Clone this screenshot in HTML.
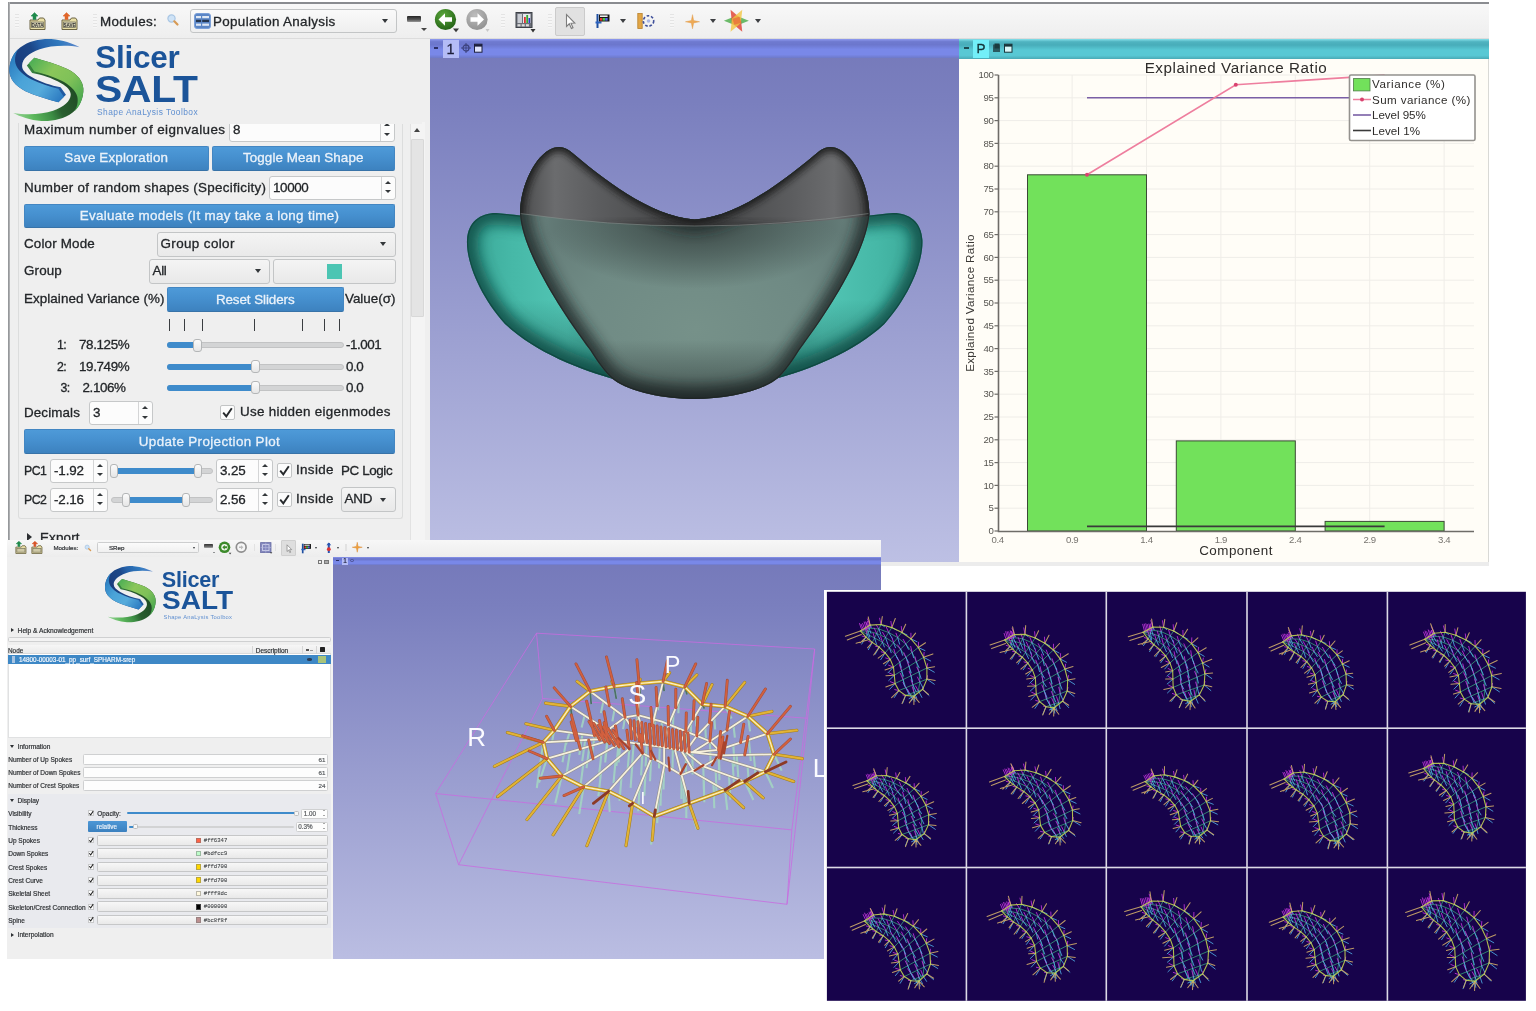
<!DOCTYPE html>
<html><head><meta charset="utf-8"><title>SlicerSALT</title>
<style>

*{box-sizing:border-box;margin:0;padding:0}
html,body{width:1536px;height:1011px;overflow:hidden;background:#fff}
body{position:relative;font-family:"Liberation Sans",sans-serif;font-size:14px;color:#232629}
.a{position:absolute}
#top{position:absolute;left:7.5px;top:2.4px;width:1481.3px;height:563.3px;overflow:hidden}
#top>.in{position:absolute;left:-7.5px;top:-2.4px;width:1536px;height:640px;background:#efefef;filter:blur(0.55px)}
#top>.in>*{position:absolute}
.t{position:absolute;white-space:nowrap;line-height:16px;height:16px;font-size:13.4px;letter-spacing:0.38px;-webkit-text-stroke:0.3px currentColor}
.btn{position:absolute;background:linear-gradient(#4e9ad8,#4690cf 45%,#3d82bf);color:#eaf2fa;text-align:center;border:1px solid #4386c2;border-bottom-color:#3873a8;border-radius:2px;white-space:nowrap;font-size:13.4px;letter-spacing:0.38px;-webkit-text-stroke:0.3px currentColor}
.inp{position:absolute;background:#fcfcfc;border:1px solid #c6c8c9;border-radius:3px}
.cmb{position:absolute;background:linear-gradient(#f4f4f4,#e9e9e9);border:1px solid #c3c5c6;border-radius:3px}
.arr{position:absolute;width:0;height:0;border-left:3.5px solid transparent;border-right:3.5px solid transparent;border-top:4.4px solid #33373a;margin-left:0.5px;margin-top:0.3px}
.up{position:absolute;width:0;height:0;border-left:3.5px solid transparent;border-right:3.5px solid transparent;border-bottom:4.4px solid #33373a;margin-left:0.5px}
.trk{position:absolute;height:6px;border-radius:3px;background:#d3d4d5;border:1px solid #c2c3c4}
.fil{position:absolute;height:6px;border-radius:3px;background:#3e8bcb}
.hnd{position:absolute;width:9px;height:17px;border-radius:3px;background:linear-gradient(#fbfbfb,#e6e6e6);border:1px solid #b4b6b7}
.chk{position:absolute;width:15px;height:15px;background:#fcfcfc;border:1px solid #c2c4c5;border-radius:2px}
#bl{position:absolute;left:7.1px;top:539.6px;width:873.7px;height:419.7px;overflow:hidden}
#bl>.in{position:absolute;left:-7.1px;top:-539.6px;width:1000px;height:1011px;background:#efefef;filter:blur(0.6px)}
#bl>.in>*{position:absolute}
#grid{position:absolute;left:824px;top:590px;width:703px;height:411px;background:#fff;overflow:hidden}
.s{position:absolute;white-space:nowrap;font-size:6.6px;line-height:8px;height:8px;color:#2c2f32;-webkit-text-stroke:0.18px currentColor}
.sf{position:absolute;background:#fdfdfd;border:0.6px solid #cfd0d1;border-radius:1.5px}
.sb{position:absolute;background:linear-gradient(#f7f7f7,#e9e9e9);border:0.6px solid #c6c7c8;border-radius:1.5px}
.sc{position:absolute;width:6px;height:6px;background:#fcfcfc;border:0.5px solid #c9cacb}
.hx{position:absolute;font-family:"Liberation Mono",monospace;font-size:5.6px;line-height:8px;color:#45484b;white-space:nowrap;-webkit-text-stroke:0.1px currentColor}

</style></head>
<body>
<div id="top"><div class="in">
<div class="a" style="left:0;top:0;width:1500px;height:4px;background:#8a8c90"></div>
<div class="a" style="left:0;top:4px;width:1500px;height:34.5px;background:linear-gradient(#f8f8f8,#eeeeee);border-bottom:1px solid #dcdcdc"></div>
<div class="a" style="left:6px;top:0;width:4px;height:600px;background:linear-gradient(90deg,#8a8c8f 0,#8f9194 55%,#b9babc 100%)"></div>
<div class="a" style="left:14.5px;top:14px;width:4px;height:14px;background:repeating-linear-gradient(#e4e4e4 0 1.5px,#f6f6f6 1.5px 3px)"></div>
<div class="a" style="left:93px;top:14px;width:4px;height:14px;background:repeating-linear-gradient(#e4e4e4 0 1.5px,#f6f6f6 1.5px 3px)"></div>
<div class="a" style="left:501px;top:14px;width:4px;height:14px;background:repeating-linear-gradient(#e4e4e4 0 1.5px,#f6f6f6 1.5px 3px)"></div>
<div class="a" style="left:547.5px;top:14px;width:4px;height:14px;background:repeating-linear-gradient(#e4e4e4 0 1.5px,#f6f6f6 1.5px 3px)"></div>
<div class="a" style="left:670px;top:14px;width:4px;height:14px;background:repeating-linear-gradient(#e4e4e4 0 1.5px,#f6f6f6 1.5px 3px)"></div>
<svg class="a" style="left:29px;top:11px" width="18" height="20" viewBox="0 0 18 20">
<path d="M1 9 h8 l1.5-2 h4 l1.5 2 v9.5 h-15z" fill="#e9dfa6" stroke="#6d6544" stroke-width="1"/>
<rect x="2.5" y="11" width="12" height="5.5" fill="#d8d3b4" stroke="#6a6856" stroke-width="0.7"/>
<path d="M5.5 1.6 L9 5 L7 5.2 L7 8.4 L4 8.4 L4 5.2 L2 5z" fill="#1f8a4c" stroke="#1f8a4c" stroke-width="0.5"/>
<text x="8.5" y="15.6" font-family="Liberation Sans,sans-serif" font-size="4.6" font-weight="bold" fill="#333" text-anchor="middle">DATA</text>
</svg>
<svg class="a" style="left:61px;top:11px" width="18" height="20" viewBox="0 0 18 20">
<path d="M1 9 h8 l1.5-2 h4 l1.5 2 v9.5 h-15z" fill="#e9dfa6" stroke="#6d6544" stroke-width="1"/>
<rect x="2.5" y="11" width="12" height="5.5" fill="#d8d3b4" stroke="#6a6856" stroke-width="0.7"/>
<path d="M5.5 1.6 L9 5 L7 5.2 L7 8.4 L4 8.4 L4 5.2 L2 5z" fill="#e0662a" stroke="#e0662a" stroke-width="0.5"/>
<text x="8.5" y="15.6" font-family="Liberation Sans,sans-serif" font-size="4.6" font-weight="bold" fill="#333" text-anchor="middle">SAVE</text>
</svg>
<div class="t" style="left:100px;top:14.400000000000002px;letter-spacing:0.337px;">Modules:</div>
<svg class="a" style="left:166px;top:13px" width="14" height="14" viewBox="0 0 14 14"><circle cx="5.5" cy="5.5" r="3.6" fill="#cfe3f6" stroke="#a9c6e4" stroke-width="1.2"/><path d="M8.3 8.3 L11.5 11.5" stroke="#d79a55" stroke-width="2.2" stroke-linecap="round"/></svg>
<div class="cmb" style="left:190px;top:8.5px;width:207px;height:24.5px;background:linear-gradient(#fafafa,#efefef)"></div>
<svg class="a" style="left:194px;top:13px" width="17" height="16" viewBox="0 0 17 16"><rect x="0.5" y="0.5" width="16" height="15" rx="2.5" fill="#5b86c6" stroke="#7ba0d8"/><rect x="2" y="3" width="13" height="2.2" fill="#dfe8f4"/><rect x="2" y="6.8" width="13" height="2.2" fill="#25364f"/><rect x="2" y="10.6" width="13" height="2.2" fill="#dfe8f4"/><rect x="7" y="2.5" width="1.2" height="11" fill="#5b86c6"/></svg>
<div class="t" style="left:213px;top:14.2px;letter-spacing:0.342px;">Population Analysis</div>
<div class="arr" style="left:381.5px;top:18.5px"></div>
<div class="a" style="left:407px;top:16px;width:14px;height:5.5px;border-radius:1px;background:linear-gradient(#222,#555 60%,#999)"></div>
<div class="arr" style="left:420.5px;top:28px;border-left-width:3px;border-right-width:3px;border-top-width:3.8px;border-top-color:#444"></div>
<svg class="a" style="left:433px;top:8px" width="26" height="26" viewBox="0 0 26 26"><defs><radialGradient id="gg" cx="0.4" cy="0.3" r="0.8"><stop offset="0" stop-color="#5aa63a"/><stop offset="1" stop-color="#1e5c12"/></radialGradient></defs><circle cx="12.5" cy="11.5" r="10.6" fill="url(#gg)"/><path d="M5.5 11.5 L12 5.3 L12 9.2 L19 9.2 L19 13.8 L12 13.8 L12 17.7z" fill="#fff"/><path d="M20 20.5 l6 0 l-3 3.8z" fill="#3a3a3a"/></svg>
<svg class="a" style="left:465px;top:8px" width="26" height="26" viewBox="0 0 26 26"><defs><radialGradient id="gr" cx="0.4" cy="0.3" r="0.8"><stop offset="0" stop-color="#bdbdbd"/><stop offset="1" stop-color="#8d8d8d"/></radialGradient></defs><circle cx="12" cy="11.5" r="10.6" fill="url(#gr)"/><path d="M19 11.5 L12.5 5.3 L12.5 9.2 L5.5 9.2 L5.5 13.8 L12.5 13.8 L12.5 17.7z" fill="#fff"/><path d="M20.5 21 l4 0 l-2 3z" fill="#c8c8c8"/></svg>
<svg class="a" style="left:515px;top:11px" width="22" height="22" viewBox="0 0 22 22"><rect x="1" y="1.5" width="16" height="15" fill="#6b6f78" stroke="#3d4047" stroke-width="1"/><rect x="2.5" y="3" width="4.5" height="9" fill="#c9ccd3"/><rect x="8" y="3" width="7.5" height="9" fill="#e8e8ee"/><rect x="9" y="6" width="1.8" height="6" fill="#d33"/><rect x="11.3" y="4" width="1.8" height="8" fill="#3a3"/><rect x="13.5" y="7" width="1.6" height="5" fill="#33c"/><rect x="2.5" y="13.2" width="3" height="2.2" fill="#ddd"/><rect x="6.7" y="13.2" width="3" height="2.2" fill="#ddd"/><rect x="10.9" y="13.2" width="3" height="2.2" fill="#ddd"/><path d="M15.5 18 l5 0 l-2.5 3.4z" fill="#333"/></svg>
<div class="a" style="left:555px;top:6.5px;width:30px;height:29px;background:#e1e1e1;border:1px solid #cbcbcb;border-radius:2px"></div>
<svg class="a" style="left:563px;top:13px" width="14" height="18" viewBox="0 0 14 18"><path d="M3.5 1.5 L3.5 13.5 L6.3 10.8 L8.4 15.5 L10 14.8 L8 10.2 L11.8 10z" fill="#fdfdfd" stroke="#7d7d7d" stroke-width="1.1"/></svg>
<svg class="a" style="left:595px;top:13px" width="16" height="16" viewBox="0 0 16 16"><path d="M2.5 1 L2.5 15" stroke="#1e4fa0" stroke-width="2"/><path d="M0.5 9.5 L6.5 9.5" stroke="#2a62c0" stroke-width="2"/><rect x="4" y="1.5" width="10.5" height="7" fill="#151515"/><rect x="5" y="5" width="2.4" height="2.6" fill="#e33"/><rect x="7.6" y="5" width="2.4" height="2.6" fill="#4c4"/><rect x="10.2" y="5" width="2.4" height="2.6" fill="#56e"/><rect x="5" y="2.4" width="7.6" height="1.6" fill="#eee"/></svg>
<div class="arr" style="left:619.6px;top:19px;border-left-width:3.4px;border-right-width:3.4px;border-top-width:4px;border-top-color:#3d3f42"></div>
<svg class="a" style="left:637px;top:12px" width="18" height="18" viewBox="0 0 18 18"><rect x="0.8" y="1.5" width="4.4" height="15" fill="#e2a646" stroke="#b9822c" stroke-width="0.8"/><circle cx="11.5" cy="9" r="5.2" fill="none" stroke="#3f4f9a" stroke-width="1.6" stroke-dasharray="2.6 1.8"/><circle cx="11.5" cy="9" r="1.8" fill="#aab6e6"/></svg>
<svg class="a" style="left:684.5px;top:13.5px" width="15" height="15.5" viewBox="0 0 19 19"><path d="M9.5 0.5 L11 8 L18.5 9.5 L11 11 L9.5 18.5 L8 11 L0.5 9.5 L8 8z" fill="#eeaa55" stroke="#e09a48" stroke-width="0.5"/></svg>
<div class="arr" style="left:709.6px;top:19px;border-left-width:3.4px;border-right-width:3.4px;border-top-width:4px;border-top-color:#3d3f42"></div>
<svg class="a" style="left:723px;top:8px" width="27" height="26" viewBox="0 0 27 26"><g transform="translate(13.4 12.8)"><path d="M-12.5 0 L0 -5 L12.5 0 L0 5z" fill="#5cb45a" opacity="0.9"/><path d="M-12.5 0 L0 -5 L12.5 0 L0 5z" fill="#e2493b" opacity="0.85" transform="rotate(62)"/><path d="M-12.5 0 L0 -5 L12.5 0 L0 5z" fill="#f2c744" opacity="0.8" transform="rotate(118)"/><path d="M-4 -2 L3 -4 L5 2 L-2 4z" fill="#e8683c" opacity="0.7"/></g></svg>
<div class="arr" style="left:754.1px;top:19px;border-left-width:3.4px;border-right-width:3.4px;border-top-width:4px;border-top-color:#3d3f42"></div>
<svg class="a" style="left:5px;top:36px" width="90" height="90" viewBox="0 0 1011 1011">
<defs>
<linearGradient id="bia" gradientUnits="userSpaceOnUse" x1="838" y1="100" x2="150" y2="450"><stop offset="0" stop-color="#6088cc"/><stop offset="0.25" stop-color="#3079be"/><stop offset="0.5" stop-color="#2460a8"/><stop offset="0.65" stop-color="#1c4788"/><stop offset="1" stop-color="#1a3c7c"/></linearGradient>
<linearGradient id="bfa" gradientUnits="userSpaceOnUse" x1="60" y1="250" x2="640" y2="720"><stop offset="0" stop-color="#2a7cc0"/><stop offset="0.35" stop-color="#4aa3d8"/><stop offset="0.65" stop-color="#56abdb"/><stop offset="1" stop-color="#2a78c0"/></linearGradient>
<linearGradient id="gia" gradientUnits="userSpaceOnUse" x1="838" y1="100" x2="150" y2="450"><stop offset="0" stop-color="#9ad59a"/><stop offset="0.25" stop-color="#5cb85c"/><stop offset="0.5" stop-color="#3c8d44"/><stop offset="0.65" stop-color="#295e2f"/><stop offset="1" stop-color="#1f4a24"/></linearGradient>
<linearGradient id="gfa" gradientUnits="userSpaceOnUse" x1="60" y1="250" x2="640" y2="720"><stop offset="0" stop-color="#48a750"/><stop offset="0.35" stop-color="#7fc158"/><stop offset="0.65" stop-color="#8ac65a"/><stop offset="1" stop-color="#4cae55"/></linearGradient>
</defs>
<path d="M838 125 C760 85 650 45 520 35 C400 30 270 55 170 130 C90 190 45 300 50 400 C55 480 110 560 230 620 C340 670 480 710 600 745 L685 660 L625 575 C520 555 400 520 300 460 C230 420 190 380 192 330 C196 258 268 192 390 150 C510 108 690 100 838 125z" fill="url(#bia)"/><path d="M150 146 C85 200 45 300 50 400 C55 480 110 560 230 620 C340 670 480 710 600 745 L662 683 L600 592 C500 570 390 535 300 490 C210 445 135 380 118 310 C105 250 120 190 150 146z" fill="url(#bfa)"/>
<g transform="rotate(180 465 495)"><path d="M838 125 C760 85 650 45 520 35 C400 30 270 55 170 130 C90 190 45 300 50 400 C55 480 110 560 230 620 C340 670 480 710 600 745 L685 660 L625 575 C520 555 400 520 300 460 C230 420 190 380 192 330 C196 258 268 192 390 150 C510 108 690 100 838 125z" fill="url(#gia)"/><path d="M150 146 C85 200 45 300 50 400 C55 480 110 560 230 620 C340 670 480 710 600 745 L662 683 L600 592 C500 570 390 535 300 490 C210 445 135 380 118 310 C105 250 120 190 150 146z" fill="url(#gfa)"/></g>
</svg>
<div class="a" style="left:95.2px;top:39px;font-size:31.5px;line-height:36px;font-weight:bold;color:#1b5499;letter-spacing:-0.25px;white-space:nowrap">Slicer</div>
<div class="a" style="left:94.6px;top:68.6px;font-size:36.5px;line-height:42px;font-weight:bold;color:#1b5499;letter-spacing:-0.2px;white-space:nowrap;transform-origin:0 0;transform:scaleX(1.118)">SALT</div>
<div class="a" style="left:97px;top:106.5px;font-size:8.4px;line-height:11px;color:#5f8fd0;letter-spacing:0.47px;white-space:nowrap">Shape AnaLysis Toolbox</div>
<div class="a" style="left:17.5px;top:123px;width:385px;height:396px;border:1px solid #dcdddd;border-top:none;border-radius:0 0 3px 3px;background:#efefef"></div>
<div class="a" style="left:409.5px;top:122px;width:15px;height:420px;background:#f4f4f4;border-left:1px solid #e2e2e2"></div>
<div class="a" style="left:410.5px;top:139px;width:13px;height:178px;background:#e4e4e4;border:1px solid #d8d8d8;border-radius:1px"></div>
<div class="up" style="left:413px;top:127.5px;border-bottom-color:#444"></div>
<div class="t" style="left:24px;top:122.3px;letter-spacing:0.415px;">Maximum number of eignvalues</div>
<div class="inp" style="left:229px;top:118px;width:166px;height:23.5px"></div>
<div class="t" style="left:233px;top:122.3px;letter-spacing:-0.253px;">8</div>
<div class="a" style="left:380px;top:119px;width:1px;height:22px;background:#d4d5d6"></div>
<div class="up" style="left:383.5px;top:122.5px;border-left-width:3px;border-right-width:3px;border-bottom-width:3.8px;margin-left:0.5px"></div>
<div class="arr" style="left:383.5px;top:132.5px;border-left-width:3px;border-right-width:3px;border-top-width:3.8px;margin-left:0.5px"></div>
<div class="a" style="left:200px;top:100px;width:222px;height:23.5px;background:#efefef"></div>
<div class="btn" style="left:24px;top:145.8px;width:184.5px;height:24.9px;line-height:22.9px;letter-spacing:0.164px;">Save Exploration</div>
<div class="btn" style="left:211.5px;top:145.8px;width:183.5px;height:24.9px;line-height:22.9px;letter-spacing:0.073px;">Toggle Mean Shape</div>
<div class="t" style="left:24px;top:180.3px;letter-spacing:0.293px;">Number of random shapes (Specificity)</div>
<div class="inp" style="left:269px;top:175.5px;width:126.5px;height:24px"></div><div class="t" style="left:273px;top:179.8px;letter-spacing:-0.363px;">10000</div><div class="a" style="left:380.5px;top:176.5px;width:1px;height:22px;background:#d4d5d6"></div><div class="up" style="left:384.0px;top:180.5px;border-left-width:3px;border-right-width:3px;border-bottom-width:3.8px;margin-left:0.5px"></div><div class="arr" style="left:384.0px;top:190.0px;border-left-width:3px;border-right-width:3px;border-top-width:3.8px;margin-left:0.5px"></div>
<div class="btn" style="left:24px;top:203.6px;width:371px;height:24.9px;line-height:22.9px;letter-spacing:0.321px;">Evaluate models (It may take a long time)</div>
<div class="t" style="left:24px;top:236.3px;letter-spacing:0.165px;">Color Mode</div>
<div class="cmb" style="left:157px;top:232px;width:238.5px;height:24.5px"></div>
<div class="t" style="left:160.5px;top:236.3px;letter-spacing:0.393px;">Group color</div>
<div class="arr" style="left:379px;top:242px"></div>
<div class="t" style="left:24px;top:263.3px;letter-spacing:0.145px;">Group</div>
<div class="cmb" style="left:149px;top:259px;width:120.5px;height:24.5px"></div>
<div class="t" style="left:152.5px;top:263.3px;letter-spacing:-0.295px;">All</div>
<div class="arr" style="left:254.5px;top:269px"></div>
<div class="cmb" style="left:273px;top:259px;width:122.5px;height:24.5px"></div>
<div class="a" style="left:327px;top:264px;width:15px;height:14.5px;background:#4cc5b3"></div>
<div class="t" style="left:24px;top:290.8px;letter-spacing:0.07px;">Explained Variance (%)</div>
<div class="btn" style="left:167px;top:286.5px;width:176.5px;height:25px;line-height:23px;letter-spacing:-0.07px;">Reset Sliders</div>
<div class="t" style="left:345px;top:290.8px;letter-spacing:-0.005px;">Value(σ)</div>
<div class="a" style="left:169.0px;top:319px;width:1.3px;height:12px;background:#3a3d40"></div>
<div class="a" style="left:183.9px;top:319px;width:1.3px;height:12px;background:#3a3d40"></div>
<div class="a" style="left:202.20000000000002px;top:319px;width:1.3px;height:12px;background:#3a3d40"></div>
<div class="a" style="left:253.8px;top:319px;width:1.3px;height:12px;background:#3a3d40"></div>
<div class="a" style="left:302.2px;top:319px;width:1.3px;height:12px;background:#3a3d40"></div>
<div class="a" style="left:324.0px;top:319px;width:1.3px;height:12px;background:#3a3d40"></div>
<div class="a" style="left:339.09999999999997px;top:319px;width:1.3px;height:12px;background:#3a3d40"></div>
<div class="t" style="left:57px;top:337.3px;letter-spacing:-0.5px;font-size:12.3px;">1:</div>
<div class="t" style="left:79px;top:337.3px;letter-spacing:-0.362px;">78.125%</div>
<div class="trk" style="left:167px;top:342px;width:176.5px"></div><div class="fil" style="left:167px;top:342px;width:30px"></div>
<div class="hnd" style="left:192.5px;top:338.5px;height:13px"></div>
<div class="t" style="left:346px;top:337.3px;letter-spacing:-0.434px;">-1.001</div>
<div class="t" style="left:57px;top:358.8px;letter-spacing:-0.5px;font-size:12.3px;">2:</div>
<div class="t" style="left:79px;top:358.8px;letter-spacing:-0.362px;">19.749%</div>
<div class="trk" style="left:167px;top:363.5px;width:176.5px"></div><div class="fil" style="left:167px;top:363.5px;width:88px"></div>
<div class="hnd" style="left:250.5px;top:360.0px;height:13px"></div>
<div class="t" style="left:346px;top:358.8px;letter-spacing:-0.412px;">0.0</div>
<div class="t" style="left:60.5px;top:379.8px;letter-spacing:-0.5px;font-size:12.3px;">3:</div>
<div class="t" style="left:82.5px;top:379.8px;letter-spacing:-0.384px;">2.106%</div>
<div class="trk" style="left:167px;top:384.5px;width:176.5px"></div><div class="fil" style="left:167px;top:384.5px;width:88px"></div>
<div class="hnd" style="left:250.5px;top:381.0px;height:13px"></div>
<div class="t" style="left:346px;top:379.8px;letter-spacing:-0.412px;">0.0</div>
<div class="t" style="left:24px;top:404.8px;letter-spacing:0.12px;">Decimals</div>
<div class="inp" style="left:89px;top:401px;width:63.5px;height:24px"></div><div class="t" style="left:93px;top:405.3px;letter-spacing:-0.253px;">3</div><div class="a" style="left:137.5px;top:402px;width:1px;height:22px;background:#d4d5d6"></div><div class="up" style="left:141.0px;top:406.0px;border-left-width:3px;border-right-width:3px;border-bottom-width:3.8px;margin-left:0.5px"></div><div class="arr" style="left:141.0px;top:415.5px;border-left-width:3px;border-right-width:3px;border-top-width:3.8px;margin-left:0.5px"></div>
<div class="chk" style="left:220px;top:404.5px"></div><svg class="a" style="left:220px;top:404.5px" width="15" height="15" viewBox="0 0 15 15"><path d="M3.2 7.6 L6.3 11.4 L11.8 3.2" fill="none" stroke="#26292c" stroke-width="1.9"/></svg>
<div class="t" style="left:240px;top:404.3px;letter-spacing:0.299px;">Use hidden eigenmodes</div>
<div class="btn" style="left:24px;top:428.5px;width:371px;height:25px;line-height:23px;letter-spacing:0.369px;">Update Projection Plot</div>
<div class="t" style="left:24px;top:462.8px;letter-spacing:-0.5px;font-size:12.3px;">PC1</div>
<div class="inp" style="left:50px;top:458.5px;width:57.5px;height:24px"></div><div class="t" style="left:54px;top:462.8px;letter-spacing:-0.133px;">-1.92</div><div class="a" style="left:92.5px;top:459.5px;width:1px;height:22px;background:#d4d5d6"></div><div class="up" style="left:96.0px;top:463.5px;border-left-width:3px;border-right-width:3px;border-bottom-width:3.8px;margin-left:0.5px"></div><div class="arr" style="left:96.0px;top:473.0px;border-left-width:3px;border-right-width:3px;border-top-width:3.8px;margin-left:0.5px"></div>
<div class="trk" style="left:111px;top:467.5px;width:102px"></div><div class="fil" style="left:114px;top:467.5px;width:83.5px"></div>
<div class="hnd" style="left:110px;top:463.5px;height:14px;width:8px"></div>
<div class="hnd" style="left:193.5px;top:463.5px;height:14px;width:8px"></div>
<div class="inp" style="left:216px;top:458.5px;width:57px;height:24px"></div><div class="t" style="left:220px;top:462.8px;letter-spacing:-0.087px;">3.25</div><div class="a" style="left:258px;top:459.5px;width:1px;height:22px;background:#d4d5d6"></div><div class="up" style="left:261.5px;top:463.5px;border-left-width:3px;border-right-width:3px;border-bottom-width:3.8px;margin-left:0.5px"></div><div class="arr" style="left:261.5px;top:473.0px;border-left-width:3px;border-right-width:3px;border-top-width:3.8px;margin-left:0.5px"></div>
<div class="chk" style="left:276.5px;top:462.5px"></div><svg class="a" style="left:276.5px;top:462.5px" width="15" height="15" viewBox="0 0 15 15"><path d="M3.2 7.6 L6.3 11.4 L11.8 3.2" fill="none" stroke="#26292c" stroke-width="1.9"/></svg>
<div class="t" style="left:296px;top:462.3px;letter-spacing:0.353px;">Inside</div>
<div class="t" style="left:24px;top:491.8px;letter-spacing:-0.5px;font-size:12.3px;">PC2</div>
<div class="inp" style="left:50px;top:487.5px;width:57.5px;height:24px"></div><div class="t" style="left:54px;top:491.8px;letter-spacing:-0.133px;">-2.16</div><div class="a" style="left:92.5px;top:488.5px;width:1px;height:22px;background:#d4d5d6"></div><div class="up" style="left:96.0px;top:492.5px;border-left-width:3px;border-right-width:3px;border-bottom-width:3.8px;margin-left:0.5px"></div><div class="arr" style="left:96.0px;top:502.0px;border-left-width:3px;border-right-width:3px;border-top-width:3.8px;margin-left:0.5px"></div>
<div class="trk" style="left:111px;top:496.5px;width:102px"></div><div class="fil" style="left:126px;top:496.5px;width:60px"></div>
<div class="hnd" style="left:122px;top:492.5px;height:14px;width:8px"></div>
<div class="hnd" style="left:182px;top:492.5px;height:14px;width:8px"></div>
<div class="inp" style="left:216px;top:487.5px;width:57px;height:24px"></div><div class="t" style="left:220px;top:491.8px;letter-spacing:-0.087px;">2.56</div><div class="a" style="left:258px;top:488.5px;width:1px;height:22px;background:#d4d5d6"></div><div class="up" style="left:261.5px;top:492.5px;border-left-width:3px;border-right-width:3px;border-bottom-width:3.8px;margin-left:0.5px"></div><div class="arr" style="left:261.5px;top:502.0px;border-left-width:3px;border-right-width:3px;border-top-width:3.8px;margin-left:0.5px"></div>
<div class="chk" style="left:276.5px;top:491.5px"></div><svg class="a" style="left:276.5px;top:491.5px" width="15" height="15" viewBox="0 0 15 15"><path d="M3.2 7.6 L6.3 11.4 L11.8 3.2" fill="none" stroke="#26292c" stroke-width="1.9"/></svg>
<div class="t" style="left:296px;top:491.3px;letter-spacing:0.353px;">Inside</div>
<div class="t" style="left:341px;top:462.8px;letter-spacing:-0.392px;">PC Logic</div>
<div class="cmb" style="left:341px;top:487px;width:54.5px;height:24.5px"></div>
<div class="t" style="left:344.5px;top:491.3px;letter-spacing:-0.141px;">AND</div>
<div class="arr" style="left:379.5px;top:497.5px"></div>
<div class="a" style="left:26.5px;top:532.5px;width:0;height:0;border-top:4px solid transparent;border-bottom:4px solid transparent;border-left:5.5px solid #2b2e31"></div>
<div class="t" style="left:40px;top:529.8px;letter-spacing:0.159px;">Export</div>
<div class="a" style="left:430px;top:38.5px;width:529.4px;height:523.5px;background:linear-gradient(#7579ba 0%,#7a7fbe 12%,#bdc0e4 100%)"></div>
<div class="a" style="left:430px;top:38.5px;width:529.4px;height:19px;background:linear-gradient(#8f9bf0 0,#6f7ad0 14%,#6c77cd 30%,#7988e8 55%,#7988e8 82%,#6e79c8 100%)"></div>
<div class="a" style="left:442.6px;top:39.5px;width:16px;height:18px;background:#b4bcf6"></div>
<div class="a" style="left:433.5px;top:47px;width:4.5px;height:2px;background:#2c2f66"></div>
<div class="t" style="left:446.5px;top:40.5px;font-size:14.5px;color:#1d1f3a;letter-spacing:0">1</div>
<svg class="a" style="left:461px;top:43px" width="22" height="11" viewBox="0 0 22 11"><circle cx="5" cy="5" r="3" fill="none" stroke="#3d437e" stroke-width="1.3"/><path d="M5 0 V10 M0 5 H10" stroke="#3d437e" stroke-width="1"/><rect x="13.5" y="1.2" width="7.5" height="8" fill="#dfe3fb" stroke="#1c1e3c" stroke-width="1"/><rect x="13.5" y="1.2" width="7.5" height="2.4" fill="#1c1e3c"/></svg>
<svg class="a" style="left:430px;top:120px" width="530" height="300" viewBox="430 120 530 300">
<defs>
<linearGradient id="tl" x1="466" y1="0" x2="923" y2="0" gradientUnits="userSpaceOnUse"><stop offset="0" stop-color="#3aa797"/><stop offset="0.10" stop-color="#46b8a7"/><stop offset="0.22" stop-color="#52c5b4"/><stop offset="0.30" stop-color="#48b5a5"/><stop offset="0.70" stop-color="#48b5a5"/><stop offset="0.78" stop-color="#52c5b4"/><stop offset="0.90" stop-color="#46b8a7"/><stop offset="1" stop-color="#3aa797"/></linearGradient>
<linearGradient id="gt" x1="520" y1="0" x2="869" y2="0" gradientUnits="userSpaceOnUse"><stop offset="0" stop-color="#4a4b4c"/><stop offset="0.10" stop-color="#6b6c6e"/><stop offset="0.22" stop-color="#5c5d5f"/><stop offset="0.5" stop-color="#404142"/><stop offset="0.78" stop-color="#5c5d5f"/><stop offset="0.90" stop-color="#6b6c6e"/><stop offset="1" stop-color="#4a4b4c"/></linearGradient>
<radialGradient id="gb" cx="695" cy="330" r="200" gradientUnits="userSpaceOnUse" gradientTransform="translate(695 330) scale(1 0.7) translate(-695 -330)"><stop offset="0" stop-color="#769189"/><stop offset="0.6" stop-color="#6f8a84"/><stop offset="1" stop-color="#647c78"/></radialGradient>
<radialGradient id="gd" cx="695" cy="226" r="150" gradientUnits="userSpaceOnUse" gradientTransform="translate(695 226) scale(1 0.42) translate(-695 -226)"><stop offset="0" stop-color="#2c3534" stop-opacity="0.75"/><stop offset="0.5" stop-color="#2c3534" stop-opacity="0.4"/><stop offset="1" stop-color="#2c3534" stop-opacity="0"/></radialGradient>
<clipPath id="tc"><path d="M694.7 226.0C600.0 226.0 540.0 217.0 496.0 213.0C480.0 213.0 468.0 222.0 467.0 240.0C466.0 262.0 480.0 296.0 505.0 324.0C535.0 352.0 580.0 370.0 618.0 380.0C640.0 384.0 670.0 385.0 694.7 385.0C719.4 385.0 749.4 384.0 771.4 380.0C809.4 370.0 854.4 352.0 884.4 324.0C909.4 296.0 923.4 262.0 922.4 240.0C921.4 222.0 909.4 213.0 893.4 213.0C849.4 217.0 789.4 226.0 694.7 226.0Z"/></clipPath>
<clipPath id="gc"><path d="M694.7 219.4C650.0 217.0 600.0 176.0 570.0 151.0C563.0 146.0 556.0 146.0 549.0 150.0C532.0 160.0 520.0 190.0 520.0 214.0C522.0 250.0 560.0 310.0 590.0 350.0C600.0 366.0 608.0 376.0 614.0 380.0C630.0 392.0 665.0 399.0 694.7 399.0C724.4 399.0 759.4 392.0 775.4 380.0C781.4 376.0 789.4 366.0 799.4 350.0C829.4 310.0 867.4 250.0 869.4 214.0C869.4 190.0 857.4 160.0 840.4 150.0C833.4 146.0 826.4 146.0 819.4 151.0C789.4 176.0 739.4 217.0 694.7 219.4Z"/></clipPath>
<clipPath id="gtop"><path d="M500 130 H890 V213.5 Q695 238.5 520 213.5z"/></clipPath>
<filter id="b5" x="-20%" y="-20%" width="140%" height="140%"><feGaussianBlur stdDeviation="5"/></filter>
<filter id="b7" x="-20%" y="-20%" width="140%" height="140%"><feGaussianBlur stdDeviation="7"/></filter>
<linearGradient id="gbot" x1="0" y1="340" x2="0" y2="400" gradientUnits="userSpaceOnUse"><stop offset="0" stop-color="#232b2a" stop-opacity="0"/><stop offset="0.6" stop-color="#232b2a" stop-opacity="0.35"/><stop offset="1" stop-color="#1d2424" stop-opacity="0.8"/></linearGradient>
<linearGradient id="tbot" x1="0" y1="300" x2="0" y2="388" gradientUnits="userSpaceOnUse"><stop offset="0" stop-color="#0e4a43" stop-opacity="0"/><stop offset="1" stop-color="#0e4a43" stop-opacity="0.6"/></linearGradient>
<filter id="b3" x="-20%" y="-20%" width="140%" height="140%"><feGaussianBlur stdDeviation="3.2"/></filter>
</defs>
<path d="M694.7 226.0C600.0 226.0 540.0 217.0 496.0 213.0C480.0 213.0 468.0 222.0 467.0 240.0C466.0 262.0 480.0 296.0 505.0 324.0C535.0 352.0 580.0 370.0 618.0 380.0C640.0 384.0 670.0 385.0 694.7 385.0C719.4 385.0 749.4 384.0 771.4 380.0C809.4 370.0 854.4 352.0 884.4 324.0C909.4 296.0 923.4 262.0 922.4 240.0C921.4 222.0 909.4 213.0 893.4 213.0C849.4 217.0 789.4 226.0 694.7 226.0Z" fill="url(#tl)"/>
<g clip-path="url(#tc)"><rect x="460" y="300" width="470" height="90" fill="url(#tbot)"/><path d="M694.7 226.0C600.0 226.0 540.0 217.0 496.0 213.0C480.0 213.0 468.0 222.0 467.0 240.0C466.0 262.0 480.0 296.0 505.0 324.0C535.0 352.0 580.0 370.0 618.0 380.0C640.0 384.0 670.0 385.0 694.7 385.0C719.4 385.0 749.4 384.0 771.4 380.0C809.4 370.0 854.4 352.0 884.4 324.0C909.4 296.0 923.4 262.0 922.4 240.0C921.4 222.0 909.4 213.0 893.4 213.0C849.4 217.0 789.4 226.0 694.7 226.0Z" fill="none" stroke="#0e4a43" stroke-width="22" filter="url(#b7)" opacity="0.85"/><path d="M694.7 226.0C600.0 226.0 540.0 217.0 496.0 213.0C480.0 213.0 468.0 222.0 467.0 240.0C466.0 262.0 480.0 296.0 505.0 324.0C535.0 352.0 580.0 370.0 618.0 380.0C640.0 384.0 670.0 385.0 694.7 385.0C719.4 385.0 749.4 384.0 771.4 380.0C809.4 370.0 854.4 352.0 884.4 324.0C909.4 296.0 923.4 262.0 922.4 240.0C921.4 222.0 909.4 213.0 893.4 213.0C849.4 217.0 789.4 226.0 694.7 226.0Z" fill="none" stroke="#0c3d37" stroke-width="2.5" opacity="0.6"/></g>
<path d="M694.7 219.4C650.0 217.0 600.0 176.0 570.0 151.0C563.0 146.0 556.0 146.0 549.0 150.0C532.0 160.0 520.0 190.0 520.0 214.0C522.0 250.0 560.0 310.0 590.0 350.0C600.0 366.0 608.0 376.0 614.0 380.0C630.0 392.0 665.0 399.0 694.7 399.0C724.4 399.0 759.4 392.0 775.4 380.0C781.4 376.0 789.4 366.0 799.4 350.0C829.4 310.0 867.4 250.0 869.4 214.0C869.4 190.0 857.4 160.0 840.4 150.0C833.4 146.0 826.4 146.0 819.4 151.0C789.4 176.0 739.4 217.0 694.7 219.4Z" fill="url(#gb)"/>
<g clip-path="url(#gc)">
<rect x="500" y="214" width="400" height="120" fill="url(#gd)"/>
<path d="M694.7 219.4C650.0 217.0 600.0 176.0 570.0 151.0C563.0 146.0 556.0 146.0 549.0 150.0C532.0 160.0 520.0 190.0 520.0 214.0C522.0 250.0 560.0 310.0 590.0 350.0C600.0 366.0 608.0 376.0 614.0 380.0C630.0 392.0 665.0 399.0 694.7 399.0C724.4 399.0 759.4 392.0 775.4 380.0C781.4 376.0 789.4 366.0 799.4 350.0C829.4 310.0 867.4 250.0 869.4 214.0C869.4 190.0 857.4 160.0 840.4 150.0C833.4 146.0 826.4 146.0 819.4 151.0C789.4 176.0 739.4 217.0 694.7 219.4Z" fill="none" stroke="#1f2726" stroke-width="20" filter="url(#b7)" opacity="0.85"/><rect x="500" y="340" width="400" height="62" fill="url(#gbot)"/>
<g clip-path="url(#gtop)"><rect x="500" y="130" width="400" height="110" fill="url(#gt)"/>
<path d="M694.7 219.4C650.0 217.0 600.0 176.0 570.0 151.0C563.0 146.0 556.0 146.0 549.0 150.0C532.0 160.0 520.0 190.0 520.0 214.0C522.0 250.0 560.0 310.0 590.0 350.0C600.0 366.0 608.0 376.0 614.0 380.0C630.0 392.0 665.0 399.0 694.7 399.0C724.4 399.0 759.4 392.0 775.4 380.0C781.4 376.0 789.4 366.0 799.4 350.0C829.4 310.0 867.4 250.0 869.4 214.0C869.4 190.0 857.4 160.0 840.4 150.0C833.4 146.0 826.4 146.0 819.4 151.0C789.4 176.0 739.4 217.0 694.7 219.4Z" fill="none" stroke="#1c1c1d" stroke-width="10" filter="url(#b3)" opacity="0.85"/>
<path d="M500 240 Q695 205 890 240 V250 H500z" fill="#1c1c1d" filter="url(#b5)" opacity="0.55"/></g>
<path d="M520 213.5 Q695 238.5 869 213.5" fill="none" stroke="#8a9290" stroke-width="1" opacity="0.55"/>
<path d="M694.7 219.4C650.0 217.0 600.0 176.0 570.0 151.0C563.0 146.0 556.0 146.0 549.0 150.0C532.0 160.0 520.0 190.0 520.0 214.0C522.0 250.0 560.0 310.0 590.0 350.0C600.0 366.0 608.0 376.0 614.0 380.0C630.0 392.0 665.0 399.0 694.7 399.0C724.4 399.0 759.4 392.0 775.4 380.0C781.4 376.0 789.4 366.0 799.4 350.0C829.4 310.0 867.4 250.0 869.4 214.0C869.4 190.0 857.4 160.0 840.4 150.0C833.4 146.0 826.4 146.0 819.4 151.0C789.4 176.0 739.4 217.0 694.7 219.4Z" fill="none" stroke="#1d2323" stroke-width="2.4" opacity="0.7"/>
</g>
</svg>
<div class="a" style="left:959.4px;top:38.5px;width:529.6px;height:523.5px;background:#fffdf7;border-right:1.5px solid #d9d9d6"></div>
<div class="a" style="left:959.4px;top:38.5px;width:529.6px;height:20px;background:linear-gradient(#86e0ea 0,#4fb3c0 14%,#48adba 30%,#58c8d4 55%,#58c8d4 82%,#4aaab6 100%)"></div>
<div class="a" style="left:972.5px;top:39.5px;width:16.5px;height:18.5px;background:#72eff8"></div>
<div class="a" style="left:964px;top:47px;width:4.5px;height:2px;background:#1d4a50"></div>
<div class="t" style="left:976.5px;top:40.5px;font-size:13.5px;color:#143438">P</div>
<svg class="a" style="left:992px;top:43px" width="22" height="11" viewBox="0 0 22 11"><rect x="1" y="1.5" width="7" height="7.5" fill="#2a5a60"/><rect x="2.5" y="0.5" width="5" height="5" fill="#1b3a3e"/><rect x="12.5" y="1.2" width="7.5" height="8" fill="#d9f6f8" stroke="#17343a" stroke-width="1"/><rect x="12.5" y="1.2" width="7.5" height="2.4" fill="#17343a"/></svg>
<svg class="a" style="left:959px;top:58px" width="530" height="504" viewBox="959 58 530 504" font-family='"Liberation Sans",sans-serif'>
<path d="M998.5 508.2 H1474" stroke="#efede8" stroke-width="1"/>
<path d="M998.5 485.4 H1474" stroke="#efede8" stroke-width="1"/>
<path d="M998.5 462.6 H1474" stroke="#efede8" stroke-width="1"/>
<path d="M998.5 439.8 H1474" stroke="#efede8" stroke-width="1"/>
<path d="M998.5 417.0 H1474" stroke="#efede8" stroke-width="1"/>
<path d="M998.5 394.2 H1474" stroke="#efede8" stroke-width="1"/>
<path d="M998.5 371.4 H1474" stroke="#efede8" stroke-width="1"/>
<path d="M998.5 348.6 H1474" stroke="#efede8" stroke-width="1"/>
<path d="M998.5 325.8 H1474" stroke="#efede8" stroke-width="1"/>
<path d="M998.5 303.0 H1474" stroke="#efede8" stroke-width="1"/>
<path d="M998.5 280.2 H1474" stroke="#efede8" stroke-width="1"/>
<path d="M998.5 257.4 H1474" stroke="#efede8" stroke-width="1"/>
<path d="M998.5 234.6 H1474" stroke="#efede8" stroke-width="1"/>
<path d="M998.5 211.8 H1474" stroke="#efede8" stroke-width="1"/>
<path d="M998.5 189.0 H1474" stroke="#efede8" stroke-width="1"/>
<path d="M998.5 166.2 H1474" stroke="#efede8" stroke-width="1"/>
<path d="M998.5 143.4 H1474" stroke="#efede8" stroke-width="1"/>
<path d="M998.5 120.6 H1474" stroke="#efede8" stroke-width="1"/>
<path d="M998.5 97.8 H1474" stroke="#efede8" stroke-width="1"/>
<path d="M998.5 75.0 H1474" stroke="#efede8" stroke-width="1"/>
<path d="M1072.1 75 V531" stroke="#efede8" stroke-width="1"/>
<path d="M1146.5 75 V531" stroke="#efede8" stroke-width="1"/>
<path d="M1220.9 75 V531" stroke="#efede8" stroke-width="1"/>
<path d="M1295.3 75 V531" stroke="#efede8" stroke-width="1"/>
<path d="M1369.7 75 V531" stroke="#efede8" stroke-width="1"/>
<path d="M1444.1 75 V531" stroke="#efede8" stroke-width="1"/>
<rect x="1027.5" y="174.8" width="119.0" height="356.2" fill="#72e15b" stroke="#3b4a36" stroke-width="1"/>
<rect x="1176.3" y="440.9" width="119.0" height="90.1" fill="#72e15b" stroke="#3b4a36" stroke-width="1"/>
<rect x="1325.1" y="521.4" width="119.0" height="9.6" fill="#72e15b" stroke="#3b4a36" stroke-width="1"/>
<path d="M998.5 75 V531.5 H1474" fill="none" stroke="#6e6c68" stroke-width="1.6"/>
<path d="M994.5 531.0 H998.5" stroke="#6e6c68" stroke-width="1.2"/>
<text x="993.5" y="534.2" font-size="9.6" fill="#55534f" text-anchor="end" letter-spacing="-0.3">0</text>
<path d="M994.5 508.2 H998.5" stroke="#6e6c68" stroke-width="1.2"/>
<text x="993.5" y="511.4" font-size="9.6" fill="#55534f" text-anchor="end" letter-spacing="-0.3">5</text>
<path d="M994.5 485.4 H998.5" stroke="#6e6c68" stroke-width="1.2"/>
<text x="993.5" y="488.6" font-size="9.6" fill="#55534f" text-anchor="end" letter-spacing="-0.3">10</text>
<path d="M994.5 462.6 H998.5" stroke="#6e6c68" stroke-width="1.2"/>
<text x="993.5" y="465.8" font-size="9.6" fill="#55534f" text-anchor="end" letter-spacing="-0.3">15</text>
<path d="M994.5 439.8 H998.5" stroke="#6e6c68" stroke-width="1.2"/>
<text x="993.5" y="443.0" font-size="9.6" fill="#55534f" text-anchor="end" letter-spacing="-0.3">20</text>
<path d="M994.5 417.0 H998.5" stroke="#6e6c68" stroke-width="1.2"/>
<text x="993.5" y="420.2" font-size="9.6" fill="#55534f" text-anchor="end" letter-spacing="-0.3">25</text>
<path d="M994.5 394.2 H998.5" stroke="#6e6c68" stroke-width="1.2"/>
<text x="993.5" y="397.4" font-size="9.6" fill="#55534f" text-anchor="end" letter-spacing="-0.3">30</text>
<path d="M994.5 371.4 H998.5" stroke="#6e6c68" stroke-width="1.2"/>
<text x="993.5" y="374.6" font-size="9.6" fill="#55534f" text-anchor="end" letter-spacing="-0.3">35</text>
<path d="M994.5 348.6 H998.5" stroke="#6e6c68" stroke-width="1.2"/>
<text x="993.5" y="351.8" font-size="9.6" fill="#55534f" text-anchor="end" letter-spacing="-0.3">40</text>
<path d="M994.5 325.8 H998.5" stroke="#6e6c68" stroke-width="1.2"/>
<text x="993.5" y="329.0" font-size="9.6" fill="#55534f" text-anchor="end" letter-spacing="-0.3">45</text>
<path d="M994.5 303.0 H998.5" stroke="#6e6c68" stroke-width="1.2"/>
<text x="993.5" y="306.2" font-size="9.6" fill="#55534f" text-anchor="end" letter-spacing="-0.3">50</text>
<path d="M994.5 280.2 H998.5" stroke="#6e6c68" stroke-width="1.2"/>
<text x="993.5" y="283.4" font-size="9.6" fill="#55534f" text-anchor="end" letter-spacing="-0.3">55</text>
<path d="M994.5 257.4 H998.5" stroke="#6e6c68" stroke-width="1.2"/>
<text x="993.5" y="260.6" font-size="9.6" fill="#55534f" text-anchor="end" letter-spacing="-0.3">60</text>
<path d="M994.5 234.6 H998.5" stroke="#6e6c68" stroke-width="1.2"/>
<text x="993.5" y="237.8" font-size="9.6" fill="#55534f" text-anchor="end" letter-spacing="-0.3">65</text>
<path d="M994.5 211.8 H998.5" stroke="#6e6c68" stroke-width="1.2"/>
<text x="993.5" y="215.0" font-size="9.6" fill="#55534f" text-anchor="end" letter-spacing="-0.3">70</text>
<path d="M994.5 189.0 H998.5" stroke="#6e6c68" stroke-width="1.2"/>
<text x="993.5" y="192.2" font-size="9.6" fill="#55534f" text-anchor="end" letter-spacing="-0.3">75</text>
<path d="M994.5 166.2 H998.5" stroke="#6e6c68" stroke-width="1.2"/>
<text x="993.5" y="169.4" font-size="9.6" fill="#55534f" text-anchor="end" letter-spacing="-0.3">80</text>
<path d="M994.5 143.4 H998.5" stroke="#6e6c68" stroke-width="1.2"/>
<text x="993.5" y="146.6" font-size="9.6" fill="#55534f" text-anchor="end" letter-spacing="-0.3">85</text>
<path d="M994.5 120.6 H998.5" stroke="#6e6c68" stroke-width="1.2"/>
<text x="993.5" y="123.8" font-size="9.6" fill="#55534f" text-anchor="end" letter-spacing="-0.3">90</text>
<path d="M994.5 97.8 H998.5" stroke="#6e6c68" stroke-width="1.2"/>
<text x="993.5" y="101.0" font-size="9.6" fill="#55534f" text-anchor="end" letter-spacing="-0.3">95</text>
<path d="M994.5 75.0 H998.5" stroke="#6e6c68" stroke-width="1.2"/>
<text x="993.5" y="78.2" font-size="9.6" fill="#55534f" text-anchor="end" letter-spacing="-0.3">100</text>
<text x="997.7" y="542.5" font-size="9.6" fill="#77746f" text-anchor="middle" letter-spacing="-0.3">0.4</text>
<text x="1072.1" y="542.5" font-size="9.6" fill="#77746f" text-anchor="middle" letter-spacing="-0.3">0.9</text>
<text x="1146.5" y="542.5" font-size="9.6" fill="#77746f" text-anchor="middle" letter-spacing="-0.3">1.4</text>
<text x="1220.9" y="542.5" font-size="9.6" fill="#77746f" text-anchor="middle" letter-spacing="-0.3">1.9</text>
<text x="1295.3" y="542.5" font-size="9.6" fill="#77746f" text-anchor="middle" letter-spacing="-0.3">2.4</text>
<text x="1369.7" y="542.5" font-size="9.6" fill="#77746f" text-anchor="middle" letter-spacing="-0.3">2.9</text>
<text x="1444.1" y="542.5" font-size="9.6" fill="#77746f" text-anchor="middle" letter-spacing="-0.3">3.4</text>
<path d="M1087.0 97.8 H1384.6" stroke="#7a5fa6" stroke-width="1.6"/>
<path d="M1087.0 526.4 H1384.6" stroke="#3a3a3a" stroke-width="1.6"/>
<path d="M1087.0 174.8 L1235.8 84.7 L1384.6 75.1" fill="none" stroke="#ee7e9e" stroke-width="1.6"/>
<circle cx="1087.0" cy="174.8" r="2" fill="#d9426f"/>
<circle cx="1235.8" cy="84.7" r="2" fill="#d9426f"/>
<text x="1236" y="73" font-size="15.2" fill="#2e2c2a" text-anchor="middle" letter-spacing="0.55">Explained Variance Ratio</text>
<text x="1236" y="554.5" font-size="13.4" fill="#2e2c2a" text-anchor="middle" letter-spacing="0.5">Component</text>
<text transform="translate(973.5 303) rotate(-90)" font-size="11.6" fill="#3a3835" text-anchor="middle" letter-spacing="0.35">Explained Variance Ratio</text>
<rect x="1349.5" y="75" width="125.5" height="65.5" rx="1.5" fill="#ffffff" stroke="#94928e" stroke-width="1.6"/>
<rect x="1353.5" y="78.6" width="16.5" height="12.3" fill="#72e15b" stroke="#4f7a46" stroke-width="0.8"/>
<path d="M1353 99.5 H1371" stroke="#ee7e9e" stroke-width="1.5"/><circle cx="1362" cy="99.5" r="2" fill="#d9426f"/>
<path d="M1353 115 H1371" stroke="#7a5fa6" stroke-width="1.6"/>
<path d="M1353 130.5 H1371" stroke="#3a3a3a" stroke-width="1.6"/>
<text x="1372" y="88" font-size="11.6" fill="#2e2c2a" letter-spacing="0.6">Variance (%)</text>
<text x="1372" y="103.5" font-size="11.6" fill="#2e2c2a" letter-spacing="0.42">Sum variance (%)</text>
<text x="1372" y="119" font-size="11.6" fill="#2e2c2a" letter-spacing="-0.05">Level 95%</text>
<text x="1372" y="134.5" font-size="11.6" fill="#2e2c2a" letter-spacing="0.05">Level 1%</text>
</svg>
<div class="a" style="left:430px;top:562px;width:1060px;height:4px;background:#ececec"></div>
</div></div>
<div id="bl"><div class="in">
<div class="a" style="left:0;top:539.6px;width:900px;height:17.6px;background:linear-gradient(#f7f7f7,#ededed)"></div>
<svg class="a" style="left:14.5px;top:540.5px" width="12.5" height="13.5" viewBox="0 0 18 20">
<path d="M1 9 h8 l1.5-2 h4 l1.5 2 v9.5 h-15z" fill="#e9dfa6" stroke="#6d6544" stroke-width="1.2"/>
<rect x="2.5" y="11" width="12" height="5.5" fill="#cfc9a6" stroke="#6a6856" stroke-width="0.9"/>
<path d="M5.5 0.5 L9.5 4 L7 4 L7 8 L4 8 L4 4 L1.5 4z" fill="#1f8a4c" stroke="#1f8a4c" stroke-width="0.8"/></svg>
<svg class="a" style="left:30.5px;top:540.5px" width="12.5" height="13.5" viewBox="0 0 18 20">
<path d="M1 9 h8 l1.5-2 h4 l1.5 2 v9.5 h-15z" fill="#e9dfa6" stroke="#6d6544" stroke-width="1.2"/>
<rect x="2.5" y="11" width="12" height="5.5" fill="#cfc9a6" stroke="#6a6856" stroke-width="0.9"/>
<path d="M5.5 0.5 L9.5 4 L7 4 L7 8 L4 8 L4 4 L1.5 4z" fill="#d8552a" stroke="#d8552a" stroke-width="0.8"/></svg>
<div class="s" style="left:53.4px;top:544.1px;font-size:6.1px;">Modules:</div>
<svg class="a" style="left:84px;top:543.5px" width="8" height="8" viewBox="0 0 14 14"><circle cx="5.5" cy="5.5" r="3.6" fill="#cfe3f6" stroke="#a9c6e4" stroke-width="1.4"/><path d="M8.3 8.3 L11.5 11.5" stroke="#d79a55" stroke-width="2.4" stroke-linecap="round"/></svg>
<div class="a" style="left:96.9px;top:542.3px;width:102px;height:10.6px;background:linear-gradient(#fbfbfb,#f0f0f0);border:0.7px solid #cdcecf;border-radius:1.5px"></div>
<div class="s" style="left:108.9px;top:544.2px;font-size:6.2px;">SRep</div>
<div class="arr" style="left:192px;top:546.6px;border-left-width:1.7px;border-right-width:1.7px;border-top-width:2.2px"></div>
<div class="a" style="left:203.6px;top:544px;width:9.4px;height:3.5px;border-radius:0.7px;background:linear-gradient(#333,#666 60%,#aaa)"></div>
<div class="arr" style="left:212.3px;top:552px;border-left-width:1.3px;border-right-width:1.3px;border-top-width:1.8px"></div>
<svg class="a" style="left:217.5px;top:540.8px" width="14" height="14" viewBox="0 0 14 14"><circle cx="6.5" cy="6.3" r="5.8" fill="#3c8a2a"/><circle cx="6.5" cy="6.3" r="3.2" fill="#f2f6ee"/><path d="M4.3 6.3 L6.8 3.9 V5.3 H9 V7.3 H6.8 V8.7z" fill="#3c8a2a"/><path d="M10.8 11.8 h2.6 l-1.3 1.8z" fill="#444"/></svg>
<svg class="a" style="left:234.5px;top:540.8px" width="14" height="14" viewBox="0 0 14 14"><circle cx="6.2" cy="6.3" r="4.9" fill="#f6f6f6" stroke="#8e8e8e" stroke-width="1.7"/><path d="M8.4 6.3 L6 4.2 V5.5 H4 V7.1 H6 V8.4z" fill="#bbb"/></svg>
<div class="a" style="left:253.5px;top:544px;width:1.5px;height:7px;background:#e2e2e2"></div>
<svg class="a" style="left:259.5px;top:541.8px" width="13" height="12" viewBox="0 0 13 12"><rect x="0.6" y="0.6" width="10.4" height="10" fill="#8387bd" stroke="#6a6ea6" stroke-width="0.8"/><rect x="2.6" y="2.6" width="6.4" height="6" fill="none" stroke="#d5d7ee" stroke-width="0.8"/><path d="M5.8 0.6 V10.6 M0.6 5.6 H11" stroke="#b9bce0" stroke-width="0.6"/><path d="M9.8 10.2 h2.6 l-1.3 1.6z" fill="#444"/></svg>
<div class="a" style="left:274.5px;top:544px;width:1.5px;height:7px;background:#e2e2e2"></div>
<div class="a" style="left:281px;top:540.2px;width:15.2px;height:16px;background:#dedede;border:0.6px solid #cfcfcf;border-radius:1px"></div>
<svg class="a" style="left:285px;top:543.5px" width="8" height="10" viewBox="0 0 14 18"><path d="M3.5 1.5 L3.5 13.5 L6.3 10.8 L8.4 15.5 L10 14.8 L8 10.2 L11.8 10z" fill="#fff" stroke="#777" stroke-width="1.2"/></svg>
<svg class="a" style="left:300.5px;top:542.5px" width="11" height="11" viewBox="0 0 16 16"><path d="M2.5 1 L2.5 15" stroke="#1e4fa0" stroke-width="2.4"/><path d="M0.5 9.5 L6.5 9.5" stroke="#2a62c0" stroke-width="2"/><rect x="4" y="1.5" width="10.5" height="7" fill="#151515"/><rect x="5" y="5" width="2.4" height="2.6" fill="#e33"/><rect x="7.6" y="5" width="2.4" height="2.6" fill="#4c4"/><rect x="10.2" y="5" width="2.4" height="2.6" fill="#56e"/><rect x="5" y="2.4" width="7.6" height="1.6" fill="#eee"/></svg>
<div class="arr" style="left:314.4px;top:546.6px;border-left-width:1.7px;border-right-width:1.7px;border-top-width:2.2px"></div>
<svg class="a" style="left:325px;top:542px" width="8" height="12" viewBox="0 0 8 12"><path d="M3.8 1 V11" stroke="#2a55b0" stroke-width="2"/><circle cx="3.8" cy="7.2" r="1.9" fill="#d33"/><path d="M1.4 3.3 L3.8 0.4 L6.2 3.3z" fill="#2a55b0"/></svg>
<div class="arr" style="left:336.4px;top:546.6px;border-left-width:1.7px;border-right-width:1.7px;border-top-width:2.2px"></div>
<div class="a" style="left:345px;top:544px;width:1.5px;height:7px;background:#e2e2e2"></div>
<svg class="a" style="left:352px;top:542.3px" width="10.5" height="10.5" viewBox="0 0 19 19"><path d="M9.5 0.5 L11 8 L18.5 9.5 L11 11 L9.5 18.5 L8 11 L0.5 9.5 L8 8z" fill="#f0a03a" stroke="#d9852a" stroke-width="0.8"/></svg>
<div class="arr" style="left:366.3px;top:546.6px;border-left-width:1.7px;border-right-width:1.7px;border-top-width:2.2px"></div>
<div class="a" style="left:317.5px;top:559.5px;width:4.5px;height:4.5px;border:0.6px solid #777"></div>
<div class="a" style="left:324px;top:559.5px;width:4.5px;height:4.5px;border:0.6px solid #777;background:#aaa"></div>
<svg class="a" style="left:101.7px;top:564.3px" width="61.6" height="61.6" viewBox="0 0 1011 1011">
<defs>
<linearGradient id="bib" gradientUnits="userSpaceOnUse" x1="838" y1="100" x2="150" y2="450"><stop offset="0" stop-color="#6088cc"/><stop offset="0.25" stop-color="#3079be"/><stop offset="0.5" stop-color="#2460a8"/><stop offset="0.65" stop-color="#1c4788"/><stop offset="1" stop-color="#1a3c7c"/></linearGradient>
<linearGradient id="bfb" gradientUnits="userSpaceOnUse" x1="60" y1="250" x2="640" y2="720"><stop offset="0" stop-color="#2a7cc0"/><stop offset="0.35" stop-color="#4aa3d8"/><stop offset="0.65" stop-color="#56abdb"/><stop offset="1" stop-color="#2a78c0"/></linearGradient>
<linearGradient id="gib" gradientUnits="userSpaceOnUse" x1="838" y1="100" x2="150" y2="450"><stop offset="0" stop-color="#9ad59a"/><stop offset="0.25" stop-color="#5cb85c"/><stop offset="0.5" stop-color="#3c8d44"/><stop offset="0.65" stop-color="#295e2f"/><stop offset="1" stop-color="#1f4a24"/></linearGradient>
<linearGradient id="gfb" gradientUnits="userSpaceOnUse" x1="60" y1="250" x2="640" y2="720"><stop offset="0" stop-color="#48a750"/><stop offset="0.35" stop-color="#7fc158"/><stop offset="0.65" stop-color="#8ac65a"/><stop offset="1" stop-color="#4cae55"/></linearGradient>
</defs>
<path d="M838 125 C760 85 650 45 520 35 C400 30 270 55 170 130 C90 190 45 300 50 400 C55 480 110 560 230 620 C340 670 480 710 600 745 L685 660 L625 575 C520 555 400 520 300 460 C230 420 190 380 192 330 C196 258 268 192 390 150 C510 108 690 100 838 125z" fill="url(#bib)"/><path d="M150 146 C85 200 45 300 50 400 C55 480 110 560 230 620 C340 670 480 710 600 745 L662 683 L600 592 C500 570 390 535 300 490 C210 445 135 380 118 310 C105 250 120 190 150 146z" fill="url(#bfb)"/>
<g transform="rotate(180 465 495)"><path d="M838 125 C760 85 650 45 520 35 C400 30 270 55 170 130 C90 190 45 300 50 400 C55 480 110 560 230 620 C340 670 480 710 600 745 L685 660 L625 575 C520 555 400 520 300 460 C230 420 190 380 192 330 C196 258 268 192 390 150 C510 108 690 100 838 125z" fill="url(#gib)"/><path d="M150 146 C85 200 45 300 50 400 C55 480 110 560 230 620 C340 670 480 710 600 745 L662 683 L600 592 C500 570 390 535 300 490 C210 445 135 380 118 310 C105 250 120 190 150 146z" fill="url(#gfb)"/></g>
</svg>
<div class="a" style="left:161.8px;top:566.7px;font-size:21.6px;line-height:25px;font-weight:bold;color:#1b5499;letter-spacing:-0.25px;white-space:nowrap">Slicer</div>
<div class="a" style="left:161.8px;top:585.9px;font-size:25px;line-height:29px;font-weight:bold;color:#1b5499;white-space:nowrap;transform-origin:0 0;transform:scaleX(1.12)">SALT</div>
<div class="a" style="left:163.5px;top:613.6px;font-size:5.8px;line-height:7px;color:#5f8fd0;letter-spacing:0.27px;white-space:nowrap">Shape AnaLysis Toolbox</div>
<div class="a" style="left:10.5px;top:628.1px;width:0;height:0;border-top:2.1px solid transparent;border-bottom:2.1px solid transparent;border-left:3px solid #2e3134"></div>
<div class="s" style="left:17.6px;top:626.8px;font-size:6.65px;">Help &amp; Acknowledgement</div>
<div class="sf" style="left:7.5px;top:636.6px;width:323px;height:5.6px;background:#f3f3f3"></div>
<div class="a" style="left:7.5px;top:645.3px;width:323px;height:93px;background:#fff;border:0.6px solid #e0e1e2"></div>
<div class="a" style="left:7.5px;top:645.3px;width:323px;height:9.2px;background:linear-gradient(#f6f6f6,#ebebeb);border-bottom:0.6px solid #dadada"></div>
<div class="s" style="left:8px;top:646.5px;font-size:6.4px;">Node</div>
<div class="s" style="left:255.7px;top:646.5px;font-size:6.5px;">Description</div>
<div class="a" style="left:251.5px;top:646px;width:0.6px;height:8px;background:#d5d5d5"></div>
<div class="a" style="left:301.5px;top:646px;width:0.6px;height:8px;background:#d5d5d5"></div>
<div class="a" style="left:315.5px;top:646px;width:0.6px;height:8px;background:#d5d5d5"></div>
<div class="a" style="left:305.5px;top:649.4px;width:3px;height:1.2px;background:#555"></div><div class="a" style="left:309.5px;top:650.4px;width:3px;height:0.8px;background:#999"></div>
<div class="a" style="left:320.2px;top:647.4px;width:5px;height:5px;background:#222;border-radius:0.6px"></div>
<div class="a" style="left:7.5px;top:655px;width:323px;height:8.6px;background:#3e88c6"></div>
<div class="a" style="left:12.3px;top:656px;width:3px;height:6.6px;background:#a8c4e2"></div>
<div class="s" style="left:19px;top:655.9px;font-size:6.35px;color:#f2f7fc">14800-00003-01_pp_surf_SPHARM-srep</div>
<div class="a" style="left:307px;top:658px;width:4.5px;height:2.6px;border-radius:50%;background:#2a3d55"></div>
<div class="a" style="left:318px;top:655.8px;width:8.2px;height:7.2px;background:#a9c47a"></div>
<div class="a" style="left:9.9px;top:745.1999999999999px;width:0;height:0;border-left:2.2px solid transparent;border-right:2.2px solid transparent;border-top:3px solid #2e3134"></div>
<div class="s" style="left:17.6px;top:743.0px;font-size:6.55px;">Information</div>
<div class="s" style="left:8.2px;top:756.1px;font-size:6.5px;">Number of Up Spokes</div>
<div class="sf" style="left:83px;top:753.9px;width:244.5px;height:11.2px"></div>
<div class="s" style="left:0px;top:756.1px;font-size:6.2px;left:auto;right:auto;width:8px;text-align:right;margin-left:317.5px;color:#55585b">61</div>
<div class="s" style="left:8.2px;top:769.0px;font-size:6.5px;">Number of Down Spokes</div>
<div class="sf" style="left:83px;top:766.8px;width:244.5px;height:11.2px"></div>
<div class="s" style="left:0px;top:769.0px;font-size:6.2px;left:auto;right:auto;width:8px;text-align:right;margin-left:317.5px;color:#55585b">61</div>
<div class="s" style="left:8.2px;top:781.8000000000001px;font-size:6.5px;">Number of Crest Spokes</div>
<div class="sf" style="left:83px;top:779.6px;width:244.5px;height:11.2px"></div>
<div class="s" style="left:0px;top:781.8000000000001px;font-size:6.2px;left:auto;right:auto;width:8px;text-align:right;margin-left:317.5px;color:#55585b">24</div>
<div class="a" style="left:7.5px;top:793.6px;width:323px;height:134px;background:#e9eaee"></div>
<div class="a" style="left:9.9px;top:798.8px;width:0;height:0;border-left:2.2px solid transparent;border-right:2.2px solid transparent;border-top:3px solid #2e3134"></div>
<div class="s" style="left:17.6px;top:796.6px;font-size:6.55px;">Display</div>
<div class="s" style="left:8.2px;top:810.3px;font-size:6.5px;">Visibility</div>
<div class="sc" style="left:88.3px;top:810.4px"></div><svg class="a" style="left:88.3px;top:810.0px" width="6.4" height="6.4" viewBox="0 0 15 15"><path d="M3 7.6 L6.3 11.6 L12.2 2.6" fill="none" stroke="#222" stroke-width="2.4"/></svg>
<div class="s" style="left:97.3px;top:810.0px;font-size:6.4px;">Opacity:</div>
<div class="a" style="left:127px;top:812.3px;width:170px;height:2.2px;border-radius:1.1px;background:#3e8bcb"></div>
<div class="a" style="left:293.6px;top:810.6px;width:5px;height:5.6px;border-radius:1.4px;background:#f7f7f7;border:0.6px solid #bdbdbd"></div>
<div class="sf" style="left:301px;top:808.6px;width:26.5px;height:10.4px"></div>
<div class="s" style="left:303.8px;top:810.3px;font-size:6.3px;color:#55585b">1.00</div>
<div class="s" style="left:8.2px;top:823.5px;font-size:6.5px;">Thickness</div>
<div class="a" style="left:88px;top:821.2px;width:39px;height:11.2px;background:linear-gradient(#4c97d6,#3c81bf);border-radius:1px"></div>
<div class="s" style="left:96.5px;top:823.2px;font-size:6.4px;color:#e8f1fa">relative</div>
<div class="a" style="left:129px;top:825.6px;width:165px;height:2.2px;border-radius:1.1px;background:#d2d3d4"></div>
<div class="a" style="left:129px;top:825.6px;width:6px;height:2.2px;border-radius:1.1px;background:#3e8bcb"></div>
<div class="a" style="left:132.6px;top:823.9px;width:5px;height:5.6px;border-radius:1.4px;background:#f7f7f7;border:0.6px solid #bdbdbd"></div>
<div class="sf" style="left:296px;top:821.6px;width:31.5px;height:10.4px"></div>
<div class="s" style="left:298.3px;top:823.4px;font-size:6.3px;color:#55585b">0.3%</div>
<div class="up" style="left:322.8px;top:810.1999999999999px;border-left-width:1.4px;border-right-width:1.4px;border-bottom-width:1.9px;border-bottom-color:#555"></div>
<div class="arr" style="left:322.8px;top:815.0px;border-left-width:1.4px;border-right-width:1.4px;border-top-width:1.9px;border-top-color:#555"></div>
<div class="up" style="left:322.8px;top:823.3px;border-left-width:1.4px;border-right-width:1.4px;border-bottom-width:1.9px;border-bottom-color:#555"></div>
<div class="arr" style="left:322.8px;top:828.1px;border-left-width:1.4px;border-right-width:1.4px;border-top-width:1.9px;border-top-color:#555"></div>
<div class="s" style="left:8.2px;top:837.0px;font-size:6.5px;">Up Spokes</div>
<div class="sc" style="left:88.3px;top:837.0999999999999px"></div><svg class="a" style="left:88.3px;top:836.6999999999999px" width="6.4" height="6.4" viewBox="0 0 15 15"><path d="M3 7.6 L6.3 11.6 L12.2 2.6" fill="none" stroke="#222" stroke-width="2.4"/></svg>
<div class="sb" style="left:97px;top:834.9px;width:230.5px;height:10.8px"></div>
<div class="a" style="left:195.8px;top:837.5px;width:5.6px;height:5.6px;background:#ff6347;border:0.4px solid rgba(120,120,120,.5)"></div>
<div class="hx" style="left:203.8px;top:836.8px">#ff6347</div>
<div class="s" style="left:8.2px;top:850.4000000000001px;font-size:6.5px;">Down Spokes</div>
<div class="sc" style="left:88.3px;top:850.5px"></div><svg class="a" style="left:88.3px;top:850.1px" width="6.4" height="6.4" viewBox="0 0 15 15"><path d="M3 7.6 L6.3 11.6 L12.2 2.6" fill="none" stroke="#222" stroke-width="2.4"/></svg>
<div class="sb" style="left:97px;top:848.3000000000001px;width:230.5px;height:10.8px"></div>
<div class="a" style="left:195.8px;top:850.9000000000001px;width:5.6px;height:5.6px;background:#bdfcc9;border:0.4px solid rgba(120,120,120,.5)"></div>
<div class="hx" style="left:203.8px;top:850.2px">#bdfcc9</div>
<div class="s" style="left:8.2px;top:863.6px;font-size:6.5px;">Crest Spokes</div>
<div class="sc" style="left:88.3px;top:863.6999999999999px"></div><svg class="a" style="left:88.3px;top:863.3px" width="6.4" height="6.4" viewBox="0 0 15 15"><path d="M3 7.6 L6.3 11.6 L12.2 2.6" fill="none" stroke="#222" stroke-width="2.4"/></svg>
<div class="sb" style="left:97px;top:861.5px;width:230.5px;height:10.8px"></div>
<div class="a" style="left:195.8px;top:864.1px;width:5.6px;height:5.6px;background:#ffd700;border:0.4px solid rgba(120,120,120,.5)"></div>
<div class="hx" style="left:203.8px;top:863.4px">#ffd700</div>
<div class="s" style="left:8.2px;top:876.9000000000001px;font-size:6.5px;">Crest Curve</div>
<div class="sc" style="left:88.3px;top:877.0px"></div><svg class="a" style="left:88.3px;top:876.6px" width="6.4" height="6.4" viewBox="0 0 15 15"><path d="M3 7.6 L6.3 11.6 L12.2 2.6" fill="none" stroke="#222" stroke-width="2.4"/></svg>
<div class="sb" style="left:97px;top:874.8000000000001px;width:230.5px;height:10.8px"></div>
<div class="a" style="left:195.8px;top:877.4000000000001px;width:5.6px;height:5.6px;background:#ffd700;border:0.4px solid rgba(120,120,120,.5)"></div>
<div class="hx" style="left:203.8px;top:876.7px">#ffd700</div>
<div class="s" style="left:8.2px;top:890.2px;font-size:6.5px;">Skeletal Sheet</div>
<div class="sc" style="left:88.3px;top:890.3px"></div><svg class="a" style="left:88.3px;top:889.9px" width="6.4" height="6.4" viewBox="0 0 15 15"><path d="M3 7.6 L6.3 11.6 L12.2 2.6" fill="none" stroke="#222" stroke-width="2.4"/></svg>
<div class="sb" style="left:97px;top:888.1px;width:230.5px;height:10.8px"></div>
<div class="a" style="left:195.8px;top:890.7px;width:5.6px;height:5.6px;background:#fff8dc;border:0.4px solid rgba(120,120,120,.5)"></div>
<div class="hx" style="left:203.8px;top:890.0px">#fff8dc</div>
<div class="s" style="left:8.2px;top:903.5px;font-size:6.5px;">Skeleton/Crest Connection</div>
<div class="sc" style="left:88.3px;top:903.5999999999999px"></div><svg class="a" style="left:88.3px;top:903.1999999999999px" width="6.4" height="6.4" viewBox="0 0 15 15"><path d="M3 7.6 L6.3 11.6 L12.2 2.6" fill="none" stroke="#222" stroke-width="2.4"/></svg>
<div class="sb" style="left:97px;top:901.4px;width:230.5px;height:10.8px"></div>
<div class="a" style="left:195.8px;top:904.0px;width:5.6px;height:5.6px;background:#000000;border:0.4px solid rgba(120,120,120,.5)"></div>
<div class="hx" style="left:203.8px;top:903.3px">#000000</div>
<div class="s" style="left:8.2px;top:916.7px;font-size:6.5px;">Spine</div>
<div class="sc" style="left:88.3px;top:916.8px"></div><svg class="a" style="left:88.3px;top:916.4px" width="6.4" height="6.4" viewBox="0 0 15 15"><path d="M3 7.6 L6.3 11.6 L12.2 2.6" fill="none" stroke="#222" stroke-width="2.4"/></svg>
<div class="sb" style="left:97px;top:914.6px;width:230.5px;height:10.8px"></div>
<div class="a" style="left:195.8px;top:917.2px;width:5.6px;height:5.6px;background:#bc8f8f;border:0.4px solid rgba(120,120,120,.5)"></div>
<div class="hx" style="left:203.8px;top:916.5px">#bc8f8f</div>
<div class="a" style="left:10.5px;top:932.6999999999999px;width:0;height:0;border-top:2.1px solid transparent;border-bottom:2.1px solid transparent;border-left:3px solid #2e3134"></div>
<div class="s" style="left:17.6px;top:931.4px;font-size:6.55px;">Interpolation</div>
<div class="a" style="left:330.8px;top:557.2px;width:2.5px;height:420px;background:#f3f3f3"></div>
<div class="a" style="left:333.2px;top:557.2px;width:560px;height:410px;background:linear-gradient(#7579ba 0%,#7a7fbe 12%,#bcbfe3 100%)"></div>
<div class="a" style="left:333.2px;top:557.2px;width:560px;height:7.4px;background:linear-gradient(#8f9bf0 0,#6f7ad0 14%,#6c77cd 30%,#7988e8 55%,#7988e8 82%,#6e79c8 100%)"></div>
<div class="a" style="left:341.6px;top:557.6px;width:6.2px;height:7px;background:#b4bcf6"></div>
<div class="a" style="left:336px;top:559.6px;width:3.4px;height:1.5px;background:#2c2f66"></div>
<div class="s" style="left:343.2px;top:557.3px;font-size:6.4px;color:#1d1f3a">1</div>
<div class="a" style="left:350.4px;top:558.8px;width:3.6px;height:3.6px;border-radius:50%;border:0.8px solid #4a5090"></div>
<svg class="a" style="left:333px;top:564px;filter:blur(0.6px)" width="548" height="396" viewBox="333 564 548 396">
<path d="M536.5 633.2L814.7 649.0L791.8 829.9L435.6 793.5L536.5 633.2M542.5 698.5L807.6 718.3L787.0 904.3L458.6 864.7L542.5 698.5M536.5 633.2L542.5 698.5M814.7 649.0L807.6 718.3M791.8 829.9L787.0 904.3M435.6 793.5L458.6 864.7" fill="none" stroke="#c86be0" stroke-width="1" opacity="0.8"/>
<path d="M543.3 742.3L536.8 788.0M554.2 730.3L552.0 742.3M570.5 706.4L572.3 719.5M590.1 691.2L591.2 704.2M614.1 686.4L616.3 698.8M639.1 683.5L640.2 694.4M663.1 681.4L664.1 691.2M684.8 686.8L687.0 694.4M702.2 704.2L704.4 708.6M725.1 706.4L731.6 718.4M747.9 716.2L750.1 731.4M767.5 733.6L770.8 748.8M774.1 754.3L781.7 770.6M765.4 771.7L773.0 788.0M744.7 781.5L753.4 800.0M725.1 790.2L727.3 809.8M689.2 803.3L696.8 829.4M654.3 816.3L651.1 844.6M632.6 803.3L631.5 814.1M608.6 791.3L609.7 812.0M583.6 786.9L579.2 814.1M561.8 776.0L555.3 803.3M547.0 758.6L539.0 782.6M607.5 730.3L605.2 742.3M625.0 717.3L623.1 729.2M638.0 715.1L636.6 727.1M662.0 721.6L661.2 733.6M685.9 731.4L685.9 743.4M709.9 741.2L710.6 762.5M718.6 749.9L719.5 771.9M718.6 757.5L719.5 780.1M703.3 766.3L703.8 789.5M681.6 775.0L681.4 798.9M664.1 766.3L663.5 789.5M651.1 758.6L650.0 781.3M642.4 753.2L641.1 775.4M629.3 748.8L627.6 770.7M618.4 744.5L616.4 766.0M607.5 741.2L605.2 762.5M594.5 735.8L591.7 756.6M607.5 738.4L605.2 759.5M620.6 741.2L618.6 762.5M633.7 743.2L632.1 764.6M646.7 744.9L645.6 766.5M659.8 746.7L659.0 768.4M672.8 748.8L672.5 770.7M685.9 751.0L685.9 773.1M692.4 752.3L692.6 774.5M585.2 740.0L582.2 761.2M566.1 741.1L562.5 762.3M582.4 734.1L579.3 754.9M569.5 732.4L566.0 744.4M596.4 723.2L593.8 735.1M584.6 715.5L581.6 727.5M614.5 709.4L612.4 721.4M603.4 701.1L600.9 713.1M638.3 705.6L636.9 717.6M638.7 695.5L637.3 707.5M655.4 712.6L654.5 724.6M658.9 698.3L658.1 710.3M673.4 713.5L673.0 725.4M678.6 701.3L678.4 713.2M690.8 723.3L691.0 735.2M696.0 714.6L696.3 726.5M705.3 727.0L705.9 738.9M714.3 717.6L715.2 729.5M721.3 733.7L722.3 754.4M733.5 725.7L734.9 737.7M733.3 745.0L734.7 766.6M748.9 739.8L750.8 761.0M736.7 755.0L738.3 777.4M753.8 754.7L755.8 777.1M732.6 761.8L734.0 784.7M747.6 766.3L749.4 789.6M715.7 770.8L716.6 794.5M729.0 775.7L730.3 799.7M703.8 778.0L704.3 802.2M713.5 783.6L714.3 808.3M683.8 783.4L683.8 808.1M686.3 792.5L686.3 817.9M661.2 781.3L660.5 805.8M658.1 797.3L657.2 823.1M645.5 772.0L644.3 795.8M639.6 786.3L638.2 811.2M632.3 764.6L630.6 787.8M621.5 776.8L619.5 800.9M615.6 760.3L613.5 783.1M601.0 772.5L598.4 796.2M601.4 754.0L598.9 776.3M583.3 764.1L580.3 787.2M589.4 746.4L586.5 768.1M570.0 752.0L566.5 774.2" fill="none" stroke="#a4dcc0" stroke-width="2.1" opacity="0.78"/>
<path d="M570.5 706.4L572.3 719.5M590.1 691.2L591.2 704.2M614.1 686.4L616.3 698.8M639.1 683.5L640.2 694.4M663.1 681.4L664.1 691.2M684.8 686.8L687.0 694.4M702.2 704.2L704.4 708.6" fill="none" stroke="#3f5f58" stroke-width="1.8" opacity="0.85"/>
<path d="M543.3 742.3L603.2 739.0M554.2 730.3L594.5 735.8M570.5 706.4L607.5 730.3M590.1 691.2L625.0 717.3M639.1 683.5L638.0 715.1M663.1 681.4L652.2 726.0M684.8 686.8L668.5 724.9M702.2 704.2L685.9 731.4M725.1 706.4L696.8 735.8M747.9 716.2L709.9 741.2M767.5 733.6L718.6 749.9M774.1 754.3L720.7 755.4M765.4 771.7L718.6 757.5M744.7 781.5L703.3 766.3M725.1 790.2L694.6 772.8M689.2 803.3L681.6 775.0M654.3 816.3L664.1 766.3M632.6 803.3L651.1 758.6M608.6 791.3L642.4 753.2M583.6 786.9L629.3 748.8M561.8 776.0L618.4 744.5M547.0 758.6L607.5 741.2M607.5 730.3L620.6 741.2M625.0 717.3L642.4 744.0M638.0 715.1L646.7 744.9M652.2 726.0L655.4 746.0M668.5 724.9L664.1 747.3M685.9 731.4L677.2 749.5M696.8 735.8L685.9 751.0M709.9 741.2L692.4 752.3M718.6 749.9L692.4 752.3M720.7 755.4L692.4 752.3M703.3 766.3L685.9 752.1M694.6 772.8L681.6 751.0M681.6 775.0L675.0 749.9M664.1 766.3L664.1 748.2M651.1 758.6L651.1 746.0M642.4 753.2L640.2 744.5M629.3 748.8L627.1 742.3M618.4 744.5L614.1 739.7M603.2 739.0L594.5 735.8M607.5 730.3L625.0 717.3L638.0 715.1L662.0 721.6L685.9 731.4L709.9 741.2L718.6 749.9M642.4 753.2L659.8 761.9L681.6 775.0L703.3 766.3L718.6 757.5M594.5 735.8L607.5 738.4L620.6 741.2L633.7 743.2L646.7 744.9L659.8 746.7L672.8 748.8L685.9 751.0L692.4 752.3" fill="none" stroke="#8d8876" stroke-width="2.9" opacity="0.75"/>
<path d="M543.3 742.3L603.2 739.0M554.2 730.3L594.5 735.8M570.5 706.4L607.5 730.3M590.1 691.2L625.0 717.3M639.1 683.5L638.0 715.1M663.1 681.4L652.2 726.0M684.8 686.8L668.5 724.9M702.2 704.2L685.9 731.4M725.1 706.4L696.8 735.8M747.9 716.2L709.9 741.2M767.5 733.6L718.6 749.9M774.1 754.3L720.7 755.4M765.4 771.7L718.6 757.5M744.7 781.5L703.3 766.3M725.1 790.2L694.6 772.8M689.2 803.3L681.6 775.0M654.3 816.3L664.1 766.3M632.6 803.3L651.1 758.6M608.6 791.3L642.4 753.2M583.6 786.9L629.3 748.8M561.8 776.0L618.4 744.5M547.0 758.6L607.5 741.2M607.5 730.3L620.6 741.2M625.0 717.3L642.4 744.0M638.0 715.1L646.7 744.9M652.2 726.0L655.4 746.0M668.5 724.9L664.1 747.3M685.9 731.4L677.2 749.5M696.8 735.8L685.9 751.0M709.9 741.2L692.4 752.3M718.6 749.9L692.4 752.3M720.7 755.4L692.4 752.3M703.3 766.3L685.9 752.1M694.6 772.8L681.6 751.0M681.6 775.0L675.0 749.9M664.1 766.3L664.1 748.2M651.1 758.6L651.1 746.0M642.4 753.2L640.2 744.5M629.3 748.8L627.1 742.3M618.4 744.5L614.1 739.7M603.2 739.0L594.5 735.8M607.5 730.3L625.0 717.3L638.0 715.1L662.0 721.6L685.9 731.4L709.9 741.2L718.6 749.9M642.4 753.2L659.8 761.9L681.6 775.0L703.3 766.3L718.6 757.5M594.5 735.8L607.5 738.4L620.6 741.2L633.7 743.2L646.7 744.9L659.8 746.7L672.8 748.8L685.9 751.0L692.4 752.3" fill="none" stroke="#f6f0dc" stroke-width="1.8"/>
<path d="M543.3 742.3L494.4 766.3M554.2 730.3L525.9 723.8M570.5 706.4L545.5 703.1M590.1 691.2L577.1 681.4M614.1 686.4L611.9 681.4M639.1 683.5L640.2 679.2M663.1 681.4L669.6 672.7M684.8 686.8L696.8 674.8M702.2 704.2L712.0 684.6M725.1 706.4L744.7 682.4M747.9 716.2L771.9 711.4M767.5 733.6L796.9 730.3M774.1 754.3L802.4 758.6M765.4 771.7L793.7 781.5M744.7 781.5L763.2 797.8M725.1 790.2L743.6 807.6M689.2 803.3L697.9 828.3M654.3 816.3L652.2 840.3M632.6 803.3L626.0 845.7M608.6 791.3L586.9 845.7M583.6 786.9L553.1 834.8M561.8 776.0L527.0 819.6M547.0 758.6L497.6 796.7M543.3 742.3L507.4 732.5" fill="none" stroke="#a07c1c" stroke-width="3.1" stroke-linecap="round"/>
<path d="M543.3 742.3L494.4 766.3M554.2 730.3L525.9 723.8M570.5 706.4L545.5 703.1M590.1 691.2L577.1 681.4M614.1 686.4L611.9 681.4M639.1 683.5L640.2 679.2M663.1 681.4L669.6 672.7M684.8 686.8L696.8 674.8M702.2 704.2L712.0 684.6M725.1 706.4L744.7 682.4M747.9 716.2L771.9 711.4M767.5 733.6L796.9 730.3M774.1 754.3L802.4 758.6M765.4 771.7L793.7 781.5M744.7 781.5L763.2 797.8M725.1 790.2L743.6 807.6M689.2 803.3L697.9 828.3M654.3 816.3L652.2 840.3M632.6 803.3L626.0 845.7M608.6 791.3L586.9 845.7M583.6 786.9L553.1 834.8M561.8 776.0L527.0 819.6M547.0 758.6L497.6 796.7M543.3 742.3L507.4 732.5" fill="none" stroke="#e2b336" stroke-width="2.1" stroke-linecap="round"/>
<path d="M543.3 742.3L554.2 730.3L570.5 706.4L590.1 691.2L614.1 686.4L639.1 683.5L663.1 681.4L684.8 686.8L702.2 704.2L725.1 706.4L747.9 716.2L767.5 733.6L774.1 754.3L765.4 771.7L744.7 781.5L725.1 790.2L689.2 803.3L654.3 816.3L632.6 803.3L608.6 791.3L583.6 786.9L561.8 776.0L547.0 758.6Z" fill="none" stroke="#a07c1c" stroke-width="3.9" stroke-linejoin="round"/>
<path d="M543.3 742.3L554.2 730.3L570.5 706.4L590.1 691.2L614.1 686.4L639.1 683.5L663.1 681.4L684.8 686.8L702.2 704.2L725.1 706.4L747.9 716.2L767.5 733.6L774.1 754.3L765.4 771.7L744.7 781.5L725.1 790.2L689.2 803.3L654.3 816.3L632.6 803.3L608.6 791.3L583.6 786.9L561.8 776.0L547.0 758.6Z" fill="none" stroke="#e6bb3a" stroke-width="2.8" stroke-linejoin="round"/>
<path d="M543.3 742.3L554.2 730.3L570.5 706.4L590.1 691.2L614.1 686.4L639.1 683.5L663.1 681.4L684.8 686.8L702.2 704.2L725.1 706.4L747.9 716.2L767.5 733.6L774.1 754.3L765.4 771.7L744.7 781.5L725.1 790.2L689.2 803.3L654.3 816.3L632.6 803.3L608.6 791.3L583.6 786.9L561.8 776.0L547.0 758.6Z" fill="none" stroke="#fbf3d0" stroke-width="1.1" stroke-linejoin="round"/>
<path d="M765.4 771.7L786.0 761.9M744.7 781.5L757.7 772.8M725.1 790.2L739.2 780.4M689.2 803.3L688.1 791.3M654.3 816.3L655.4 809.8M632.6 803.3L629.3 805.9M608.6 791.3L593.4 803.3" fill="none" stroke="#8c3a26" stroke-width="2.8" stroke-linecap="round"/>
<path d="M543.3 742.3L522.7 735.8M554.2 730.3L546.6 716.2M570.5 706.4L554.2 687.9M590.1 691.2L576.0 663.9M614.1 686.4L606.5 657.0M639.1 683.5L636.9 659.6M663.1 681.4L667.4 660.7M684.8 686.8L695.7 663.9M702.2 704.2L706.6 683.5M725.1 706.4L727.3 680.3M747.9 716.2L765.4 689.0M767.5 733.6L790.4 706.4M774.1 754.3L790.4 739.0M583.6 786.9L564.0 795.6M561.8 776.0L540.1 778.2M547.0 758.6L529.2 751.0M603.2 739.0L599.5 720.5M576.3 740.5L571.2 722.0M594.5 735.8L590.3 717.3M576.4 733.3L571.3 714.8M607.5 730.3L604.1 711.8M590.9 719.6L586.6 701.1M625.0 717.3L622.3 698.8M609.3 705.5L605.9 687.0M638.0 715.1L636.1 696.6M638.5 700.9L636.6 682.4M652.2 726.0L650.9 707.5M657.1 705.9L656.1 687.4M668.5 724.9L668.1 706.4M675.8 707.8L675.8 689.2M685.9 731.4L686.3 712.9M693.3 719.2L694.1 700.7M696.8 735.8L697.8 717.3M709.5 722.6L711.1 704.1M709.9 741.2L711.5 722.7M727.0 730.0L729.5 711.5M718.6 749.9L720.6 731.4M740.6 742.6L743.8 724.1M720.7 755.4L722.9 736.9M744.7 754.9L748.1 736.4M718.6 757.5L720.6 739.0M651.1 758.6L649.8 740.1M642.4 753.2L640.6 734.7M629.3 748.8L626.9 730.3M618.4 744.5L615.5 726.0M593.0 758.7L588.7 740.2M607.5 741.2L604.1 722.7M580.3 749.1L575.5 730.6M631.5 739.0L630.2 719.9M635.3 739.9L634.0 720.8M639.2 740.8L637.9 721.6M643.0 741.7L641.7 722.5M646.9 742.5L645.6 723.4M650.7 743.4L649.4 724.2M654.6 744.3L653.3 725.1M658.4 745.1L657.1 726.0M662.3 746.0L660.9 726.9M666.1 746.9L664.8 727.7M669.9 747.7L668.6 728.6M673.8 748.6L672.5 729.5M677.6 749.5L676.3 730.3M681.5 750.4L680.2 731.2M685.3 751.2L684.0 732.1M689.2 752.1L687.9 732.9M599.9 740.1L589.0 721.6M604.7 741.9L593.8 723.4M609.5 743.6L598.6 725.1M614.3 745.4L603.4 726.9M619.1 747.1L608.2 728.6M623.9 748.8L613.0 730.3" fill="none" stroke="#a4472c" stroke-width="2.9" stroke-linecap="round" opacity="0.9"/>
<path d="M543.3 742.3L522.7 735.8M554.2 730.3L546.6 716.2M570.5 706.4L554.2 687.9M590.1 691.2L576.0 663.9M614.1 686.4L606.5 657.0M639.1 683.5L636.9 659.6M663.1 681.4L667.4 660.7M684.8 686.8L695.7 663.9M702.2 704.2L706.6 683.5M725.1 706.4L727.3 680.3M747.9 716.2L765.4 689.0M767.5 733.6L790.4 706.4M774.1 754.3L790.4 739.0M583.6 786.9L564.0 795.6M561.8 776.0L540.1 778.2M547.0 758.6L529.2 751.0M603.2 739.0L599.5 720.5M576.3 740.5L571.2 722.0M594.5 735.8L590.3 717.3M576.4 733.3L571.3 714.8M607.5 730.3L604.1 711.8M590.9 719.6L586.6 701.1M625.0 717.3L622.3 698.8M609.3 705.5L605.9 687.0M638.0 715.1L636.1 696.6M638.5 700.9L636.6 682.4M652.2 726.0L650.9 707.5M657.1 705.9L656.1 687.4M668.5 724.9L668.1 706.4M675.8 707.8L675.8 689.2M685.9 731.4L686.3 712.9M693.3 719.2L694.1 700.7M696.8 735.8L697.8 717.3M709.5 722.6L711.1 704.1M709.9 741.2L711.5 722.7M727.0 730.0L729.5 711.5M718.6 749.9L720.6 731.4M740.6 742.6L743.8 724.1M720.7 755.4L722.9 736.9M744.7 754.9L748.1 736.4M718.6 757.5L720.6 739.0M651.1 758.6L649.8 740.1M642.4 753.2L640.6 734.7M629.3 748.8L626.9 730.3M618.4 744.5L615.5 726.0M593.0 758.7L588.7 740.2M607.5 741.2L604.1 722.7M580.3 749.1L575.5 730.6M631.5 739.0L630.2 719.9M635.3 739.9L634.0 720.8M639.2 740.8L637.9 721.6M643.0 741.7L641.7 722.5M646.9 742.5L645.6 723.4M650.7 743.4L649.4 724.2M654.6 744.3L653.3 725.1M658.4 745.1L657.1 726.0M662.3 746.0L660.9 726.9M666.1 746.9L664.8 727.7M669.9 747.7L668.6 728.6M673.8 748.6L672.5 729.5M677.6 749.5L676.3 730.3M681.5 750.4L680.2 731.2M685.3 751.2L684.0 732.1M689.2 752.1L687.9 732.9M599.9 740.1L589.0 721.6M604.7 741.9L593.8 723.4M609.5 743.6L598.6 725.1M614.3 745.4L603.4 726.9M619.1 747.1L608.2 728.6M623.9 748.8L613.0 730.3" fill="none" stroke="#d2603f" stroke-width="1.8" stroke-linecap="round"/>
<path d="M651.1 751.0L655.4 759.7M668.5 757.5L669.6 770.6M685.9 764.1L680.5 773.9M703.3 765.2L694.6 770.6M716.4 757.5L712.0 765.2M724.0 742.3L720.7 758.6M727.3 735.8L724.0 753.2M618.4 738.0L629.3 748.8M635.8 744.5L642.4 753.2" fill="none" stroke="#a9442c" stroke-width="2.2" stroke-linecap="round"/>
<text x="476.7" y="746.2" font-family="Liberation Sans,sans-serif" font-size="26" fill="#fbfbff" text-anchor="middle">R</text>
<text x="637.3" y="703.5" font-family="Liberation Sans,sans-serif" font-size="27" fill="#fbfbff" text-anchor="middle">S</text>
<text x="672.6" y="673.3" font-family="Liberation Sans,sans-serif" font-size="23.5" fill="#fbfbff" text-anchor="middle">P</text>
<text x="820" y="777" font-family="Liberation Sans,sans-serif" font-size="26" fill="#fbfbff" text-anchor="middle">L</text>
<text x="642.8" y="804" font-family="Liberation Sans,sans-serif" font-size="17" fill="#fbfbff" text-anchor="middle">I</text>
</svg>
</div></div>
<div id="grid">
<svg class="a" style="left:0;top:0" width="703" height="411" viewBox="824 590 703 411">
<rect x="824" y="590" width="703" height="411" fill="#fff"/>
<rect x="826.9" y="591.8" width="699.0" height="409.0" fill="#17034b"/>
<rect x="965.6" y="591.8" width="1.6" height="409.0" fill="#dcd9e6"/>
<rect x="1105.5" y="591.8" width="1.6" height="409.0" fill="#dcd9e6"/>
<rect x="1246.2" y="591.8" width="1.6" height="409.0" fill="#dcd9e6"/>
<rect x="1386.6" y="591.8" width="1.6" height="409.0" fill="#dcd9e6"/>
<rect x="826.9" y="727.4" width="699.0" height="1.6" fill="#dcd9e6"/>
<rect x="826.9" y="866.7" width="699.0" height="1.6" fill="#dcd9e6"/>
<g fill="none" stroke-linecap="round" style="filter:blur(0.5px)">
<path d="M870.1 625.1L866.0 637.1M881.1 624.5L872.3 642.4M891.8 627.6L879.2 647.1M901.9 632.5L885.2 652.9M911.0 638.9L890.2 659.4M918.3 647.5L893.5 667.1M923.6 657.3L894.3 675.3M926.9 668.0L895.1 683.5M926.9 679.1L898.9 690.6M922.6 689.4L905.6 695.4M860.4 630.9L867.0 634.1L874.5 637.9L882.4 642.2L889.4 647.8L895.4 654.3L899.7 662.2L901.6 670.8L903.1 679.6L905.9 687.8L909.8 693.9L913.9 696.2M860.4 630.9L868.0 631.1L876.7 633.5L885.5 637.4L893.6 642.7L900.6 649.2L905.9 657.3L909.0 666.3L911.0 675.8L912.9 684.9L914.1 692.4L913.9 696.2M860.4 630.9L869.0 628.1L878.9 629.0L888.7 632.5L897.7 637.6L905.8 644.0L912.1 652.4L916.3 661.8L919.0 671.9L919.9 682.0L918.4 690.9L913.9 696.2" stroke="#37a07a" stroke-width="0.95" opacity="0.85"/>
<path d="M870.1 625.1L867.5 618.9M866.0 637.1L862.1 636.1M881.1 624.5L879.6 618.2M872.3 642.4L868.8 641.6M891.8 627.6L890.9 621.4M879.2 647.1L875.6 646.3M901.9 632.5L901.3 626.5M885.2 652.9L881.2 651.8M911.0 638.9L910.9 633.2M890.2 659.4L885.7 658.0M918.3 647.5L918.6 642.2M893.5 667.1L888.6 665.2M923.6 657.3L924.1 652.5M894.3 675.3L889.3 673.0M926.9 668.0L927.6 663.7M895.1 683.5L890.3 681.7M926.9 679.1L927.5 675.7M898.9 690.6L894.8 689.6M922.6 689.4L922.8 687.0M905.6 695.4L902.9 695.0M862.2 630.9L859.5 623.5M863.6 630.3L861.1 624.3M865.0 629.8L862.6 623.5M866.4 629.3L864.2 622.0M867.8 628.7L865.8 621.9M869.2 628.2L867.4 621.3M870.6 627.6L869.0 620.8M867.0 634.1L865.4 628.1M868.0 631.1L865.3 626.3M869.0 628.1L866.2 622.7M874.5 637.9L873.2 633.3M876.7 633.5L874.1 627.9M878.9 629.0L876.1 624.7M882.4 642.2L880.7 636.6M885.5 637.4L882.6 632.3M888.7 632.5L886.3 627.1M889.4 647.8L887.4 643.2M893.6 642.7L892.1 638.0M897.7 637.6L896.0 633.2M895.4 654.3L893.9 649.2M900.6 649.2L897.6 644.9M905.8 644.0L903.2 639.4M899.7 662.2L897.0 657.3M905.9 657.3L903.9 652.7M912.1 652.4L910.7 646.4M901.6 670.8L899.4 664.6M909.0 666.3L906.9 660.2M916.3 661.8L915.0 656.8M903.1 679.6L900.3 673.3M911.0 675.8L909.2 671.4M919.0 671.9L916.8 667.1M905.9 687.8L903.0 682.5M912.9 684.9L911.1 680.0M919.9 682.0L917.5 677.1M909.8 693.9L907.5 689.2M914.1 692.4L912.2 686.8M918.4 690.9L915.5 685.9" stroke="#c838e2" stroke-width="0.95" opacity="0.85"/>
<path d="M870.1 625.1L871.6 627.4M866.0 637.1L861.7 644.1M881.1 624.5L884.5 626.7M872.3 642.4L868.4 649.7M891.8 627.6L896.3 629.9M879.2 647.1L875.2 654.3M901.9 632.5L907.1 635.0M885.2 652.9L880.7 659.7M911.0 638.9L917.0 641.7M890.2 659.4L885.1 665.8M918.3 647.5L925.0 650.6M893.5 667.1L888.0 672.8M923.6 657.3L930.7 661.0M894.3 675.3L888.7 680.6M926.9 668.0L934.3 672.2M895.1 683.5L889.6 689.3M926.9 679.1L934.3 684.2M898.9 690.6L894.3 697.5M922.6 689.4L929.1 695.5M905.6 695.4L902.7 703.1M913.9 696.2L915.0 701.4M913.9 696.2L911.4 700.9M913.9 696.2L909.1 698.6M867.0 634.1L869.7 639.6M868.0 631.1L869.8 637.1M869.0 628.1L870.9 633.3M874.5 637.9L876.6 644.4M876.7 633.5L880.0 639.4M878.9 629.0L880.8 634.2M882.4 642.2L884.4 647.0M885.5 637.4L887.5 643.3M888.7 632.5L892.1 638.1M889.4 647.8L891.2 652.7M893.6 642.7L895.5 647.7M897.7 637.6L899.6 644.2M895.4 654.3L897.7 659.1M900.6 649.2L902.6 655.3M905.8 644.0L908.5 649.3M899.7 662.2L901.3 667.3M905.9 657.3L908.7 662.5M912.1 652.4L913.6 657.6M901.6 670.8L903.5 676.2M909.0 666.3L911.2 672.8M916.3 661.8L919.2 667.7M903.1 679.6L904.6 686.2M911.0 675.8L912.5 681.7M919.0 671.9L921.1 678.6M905.9 687.8L908.9 694.3M912.9 684.9L916.0 691.4M919.9 682.0L923.3 688.4M909.8 693.9L913.1 699.7M914.1 692.4L916.8 698.3M918.4 690.9L921.9 697.4" stroke="#52b6ec" stroke-width="0.95" opacity="0.85"/>
<path d="M870.1 625.1L868.2 616.9M866.0 637.1L860.2 642.8M881.1 624.5L882.3 616.6M872.3 642.4L867.5 647.8M891.8 627.6L895.3 618.5M879.2 647.1L873.7 655.0M901.9 632.5L905.7 624.3M885.2 652.9L878.2 658.2M911.0 638.9L915.6 633.1M890.2 659.4L883.4 663.7M918.3 647.5L925.5 642.7M893.5 667.1L885.0 669.9M923.6 657.3L932.9 653.9M894.3 675.3L885.9 675.8M926.9 668.0L934.6 666.7M895.1 683.5L885.8 686.9M926.9 679.1L935.2 680.5M898.9 690.6L891.6 697.7M922.6 689.4L928.5 694.5M905.6 695.4L902.0 703.6M913.9 696.2L919.2 702.4M913.9 696.2L913.9 704.4M913.9 696.2L909.3 702.9M860.4 630.9L845.4 636.3M861.3 634.4L847.2 639.9M868.4 639.7L856.1 643.3" stroke="#cdaa68" stroke-width="1.05" opacity="0.9"/>
<path d="M860.4 630.9L870.1 625.1L881.1 624.5L891.8 627.6L901.9 632.5L911.0 638.9L918.3 647.5L923.6 657.3L926.9 668.0L926.9 679.1L922.6 689.4L913.9 696.2L905.6 695.4L898.9 690.6L895.1 683.5L894.3 675.3L893.5 667.1L890.2 659.4L885.2 652.9L879.2 647.1L872.3 642.4L866.0 637.1L860.4 630.9Z" stroke="#c4d850" stroke-width="1.1" opacity="0.88"/>
<path d="M1014.3 634.6L1009.9 646.5M1025.0 634.4L1015.8 652.1M1035.2 637.9L1022.3 657.1M1044.8 643.2L1027.9 663.1M1053.4 650.0L1032.4 669.9M1060.1 658.9L1035.3 677.7M1064.9 669.0L1035.8 686.0M1067.7 679.9L1036.3 694.3M1067.2 691.0L1039.6 701.6M1062.7 701.2L1046.0 706.7M1004.7 640.0L1011.0 643.5L1018.1 647.7L1025.5 652.3L1032.1 658.1L1037.7 664.9L1041.5 673.0L1043.1 681.8L1044.1 690.7L1046.5 699.0L1050.1 705.3L1054.0 707.8M1004.7 640.0L1012.1 640.5L1020.4 643.2L1028.8 647.5L1036.3 653.1L1042.9 659.9L1047.7 668.3L1050.4 677.5L1052.0 687.1L1053.4 696.3L1054.3 704.0L1054.0 707.8M1004.7 640.0L1013.2 637.6L1022.7 638.8L1032.0 642.7L1040.6 648.2L1048.2 655.0L1053.9 663.6L1057.6 673.3L1059.8 683.5L1060.3 693.7L1058.5 702.6L1054.0 707.8" stroke="#37a07a" stroke-width="0.95" opacity="0.85"/>
<path d="M1014.3 634.6L1012.1 628.2M1009.9 646.5L1006.2 645.4M1025.0 634.4L1023.8 627.9M1015.8 652.1L1012.4 651.2M1035.2 637.9L1034.6 631.7M1022.3 657.1L1018.8 656.1M1044.8 643.2L1044.5 637.1M1027.9 663.1L1024.0 661.9M1053.4 650.0L1053.5 644.2M1032.4 669.9L1028.1 668.3M1060.1 658.9L1060.6 653.6M1035.3 677.7L1030.7 675.6M1064.9 669.0L1065.6 664.2M1035.8 686.0L1031.1 683.5M1067.7 679.9L1068.5 675.6M1036.3 694.3L1031.7 692.3M1067.2 691.0L1067.9 687.6M1039.6 701.6L1035.7 700.4M1062.7 701.2L1062.9 698.8M1046.0 706.7L1043.4 706.1M1006.4 640.1L1004.1 633.4M1007.8 639.6L1005.7 631.7M1009.2 639.1L1007.2 631.6M1010.6 638.6L1008.7 631.8M1012.0 638.1L1010.3 630.8M1013.4 637.6L1011.8 631.9M1014.7 637.1L1013.4 630.5M1011.0 643.5L1008.5 637.1M1012.1 640.5L1010.4 635.4M1013.2 637.6L1011.6 631.5M1018.1 647.7L1015.4 642.1M1020.4 643.2L1018.2 637.5M1022.7 638.8L1021.0 634.0M1025.5 652.3L1024.4 646.0M1028.8 647.5L1026.3 642.0M1032.0 642.7L1029.9 637.4M1032.1 658.1L1031.0 652.6M1036.3 653.1L1034.8 648.4M1040.6 648.2L1038.2 643.6M1037.7 664.9L1035.8 660.1M1042.9 659.9L1041.6 654.2M1048.2 655.0L1046.3 650.1M1041.5 673.0L1040.2 666.7M1047.7 668.3L1045.6 663.5M1053.9 663.6L1052.1 658.7M1043.1 681.8L1042.0 676.3M1050.4 677.5L1048.0 672.1M1057.6 673.3L1056.0 667.9M1044.1 690.7L1041.9 685.0M1052.0 687.1L1049.6 682.4M1059.8 683.5L1058.1 677.4M1046.5 699.0L1044.9 692.5M1053.4 696.3L1051.4 691.5M1060.3 693.7L1058.8 687.3M1050.1 705.3L1049.0 700.8M1054.3 704.0L1051.8 698.4M1058.5 702.6L1056.6 696.8" stroke="#c838e2" stroke-width="0.95" opacity="0.85"/>
<path d="M1014.3 634.6L1015.7 636.9M1009.9 646.5L1005.4 653.4M1025.0 634.4L1028.2 636.7M1015.8 652.1L1011.7 659.2M1035.2 637.9L1039.5 640.4M1022.3 657.1L1018.1 664.2M1044.8 643.2L1049.7 645.9M1027.9 663.1L1023.2 669.8M1053.4 650.0L1059.1 653.0M1032.4 669.9L1027.3 676.1M1060.1 658.9L1066.5 662.3M1035.3 677.7L1029.8 683.3M1064.9 669.0L1071.6 672.9M1035.8 686.0L1030.2 691.1M1067.7 679.9L1074.7 684.4M1036.3 694.3L1030.8 700.0M1067.2 691.0L1074.1 696.4M1039.6 701.6L1035.0 708.4M1062.7 701.2L1068.7 707.6M1046.0 706.7L1042.9 714.3M1054.0 707.8L1054.8 713.1M1054.0 707.8L1051.3 712.4M1054.0 707.8L1049.3 710.0M1011.0 643.5L1013.5 649.2M1012.1 640.5L1014.9 647.3M1013.2 637.6L1015.4 642.7M1018.1 647.7L1020.8 652.8M1020.4 643.2L1023.0 649.1M1022.7 638.8L1024.7 645.2M1025.5 652.3L1028.6 658.6M1028.8 647.5L1031.2 654.2M1032.0 642.7L1035.0 649.2M1032.1 658.1L1034.7 663.3M1036.3 653.1L1038.8 659.4M1040.6 648.2L1043.7 655.0M1037.7 664.9L1039.5 671.6M1042.9 659.9L1044.3 665.6M1048.2 655.0L1050.4 659.8M1041.5 673.0L1044.4 678.1M1047.7 668.3L1049.2 673.3M1053.9 663.6L1056.8 669.8M1043.1 681.8L1046.2 686.7M1050.4 677.5L1052.1 683.8M1057.6 673.3L1060.5 679.2M1044.1 690.7L1047.0 697.4M1052.0 687.1L1055.1 693.0M1059.8 683.5L1062.1 689.3M1046.5 699.0L1049.7 704.8M1053.4 696.3L1055.8 702.1M1060.3 693.7L1062.6 699.3M1050.1 705.3L1051.9 711.1M1054.3 704.0L1057.1 710.7M1058.5 702.6L1060.1 708.6" stroke="#52b6ec" stroke-width="0.95" opacity="0.85"/>
<path d="M1014.3 634.6L1012.6 626.8M1009.9 646.5L1004.5 651.8M1025.0 634.4L1025.7 625.6M1015.8 652.1L1010.2 659.0M1035.2 637.9L1038.6 630.7M1022.3 657.1L1016.6 662.8M1044.8 643.2L1049.0 635.2M1027.9 663.1L1020.9 669.2M1053.4 650.0L1059.5 643.5M1032.4 669.9L1025.7 674.0M1060.1 658.9L1068.3 653.7M1035.3 677.7L1026.8 679.1M1064.9 669.0L1073.0 666.5M1035.8 686.0L1027.6 686.3M1067.7 679.9L1075.0 678.7M1036.3 694.3L1028.8 696.5M1067.2 691.0L1074.8 693.5M1039.6 701.6L1032.2 707.3M1062.7 701.2L1068.7 705.3M1046.0 706.7L1042.7 715.0M1054.0 707.8L1058.8 714.3M1054.0 707.8L1053.7 716.0M1054.0 707.8L1049.2 714.4M1004.7 640.0L990.0 644.9M1005.5 643.6L991.6 648.6M1012.1 649.2L1000.0 652.4" stroke="#cdaa68" stroke-width="1.05" opacity="0.9"/>
<path d="M1004.7 640.0L1014.3 634.6L1025.0 634.4L1035.2 637.9L1044.8 643.2L1053.4 650.0L1060.1 658.9L1064.9 669.0L1067.7 679.9L1067.2 691.0L1062.7 701.2L1054.0 707.8L1046.0 706.7L1039.6 701.6L1036.3 694.3L1035.8 686.0L1035.3 677.7L1032.4 669.9L1027.9 663.1L1022.3 657.1L1015.8 652.1L1009.9 646.5L1004.7 640.0Z" stroke="#c4d850" stroke-width="1.1" opacity="0.88"/>
<path d="M1152.8 627.1L1148.1 638.8M1163.6 627.2L1153.9 644.6M1173.7 631.0L1160.2 649.8M1183.1 636.6L1165.7 655.9M1191.5 643.6L1170.0 662.9M1198.0 652.6L1172.7 670.8M1202.5 662.9L1172.9 679.1M1204.9 673.8L1173.2 687.4M1204.2 685.0L1176.3 694.8M1199.3 695.0L1182.5 700.1M1143.1 632.3L1149.3 635.9L1156.3 640.3L1163.6 645.1L1170.0 651.1L1175.4 658.0L1179.0 666.2L1180.3 675.0L1181.1 684.0L1183.3 692.3L1186.7 698.8L1190.5 701.4M1143.1 632.3L1150.5 633.0L1158.7 635.9L1166.9 640.4L1174.4 646.2L1180.7 653.2L1185.3 661.7L1187.7 671.0L1189.0 680.6L1190.2 689.9L1190.9 697.5L1190.5 701.4M1143.1 632.3L1151.6 630.0L1161.1 631.6L1170.3 635.7L1178.7 641.4L1186.1 648.4L1191.7 657.2L1195.1 666.9L1197.0 677.2L1197.2 687.4L1195.1 696.3L1190.5 701.4" stroke="#37a07a" stroke-width="0.95" opacity="0.85"/>
<path d="M1152.8 627.1L1150.8 620.6M1148.1 638.8L1144.4 637.6M1163.6 627.2L1162.5 620.7M1153.9 644.6L1150.5 643.6M1173.7 631.0L1173.2 624.7M1160.2 649.8L1156.7 648.7M1183.1 636.6L1182.9 630.4M1165.7 655.9L1161.8 654.6M1191.5 643.6L1191.8 637.8M1170.0 662.9L1165.7 661.2M1198.0 652.6L1198.6 647.3M1172.7 670.8L1168.1 668.5M1202.5 662.9L1203.3 658.1M1172.9 679.1L1168.3 676.5M1204.9 673.8L1205.9 669.6M1173.2 687.4L1168.6 685.2M1204.2 685.0L1205.0 681.6M1176.3 694.8L1172.4 693.5M1199.3 695.0L1199.7 692.7M1182.5 700.1L1180.0 699.4M1144.8 632.4L1142.7 624.3M1146.2 631.9L1144.3 624.1M1147.6 631.5L1145.8 623.7M1149.0 631.0L1147.3 624.4M1150.4 630.5L1148.9 624.0M1151.8 630.1L1150.5 623.9M1153.2 629.6L1152.1 622.8M1149.3 635.9L1147.1 629.8M1150.5 633.0L1149.5 626.7M1151.6 630.0L1149.8 625.1M1156.3 640.3L1154.6 634.6M1158.7 635.9L1157.3 631.2M1161.1 631.6L1159.8 625.9M1163.6 645.1L1161.9 638.6M1166.9 640.4L1165.5 635.7M1170.3 635.7L1168.7 630.2M1170.0 651.1L1167.8 646.5M1174.4 646.2L1173.2 640.6M1178.7 641.4L1177.3 636.5M1175.4 658.0L1174.1 651.7M1180.7 653.2L1178.2 647.4M1186.1 648.4L1183.9 643.8M1179.0 666.2L1177.5 660.9M1185.3 661.7L1184.4 656.6M1191.7 657.2L1190.8 650.7M1180.3 675.0L1178.2 669.3M1187.7 671.0L1185.8 664.6M1195.1 666.9L1193.4 661.5M1181.1 684.0L1180.2 678.9M1189.0 680.6L1187.4 675.7M1197.0 677.2L1194.7 671.6M1183.3 692.3L1181.8 685.9M1190.2 689.9L1188.5 684.6M1197.2 687.4L1195.7 682.1M1186.7 698.8L1184.7 692.3M1190.9 697.5L1188.6 692.6M1195.1 696.3L1193.9 689.9" stroke="#c838e2" stroke-width="0.95" opacity="0.85"/>
<path d="M1152.8 627.1L1154.2 629.4M1148.1 638.8L1143.5 645.6M1163.6 627.2L1166.7 629.6M1153.9 644.6L1149.6 651.6M1173.7 631.0L1177.9 633.6M1160.2 649.8L1155.8 656.8M1183.1 636.6L1187.9 639.3M1165.7 655.9L1160.8 662.6M1191.5 643.6L1197.1 646.7M1170.0 662.9L1164.7 669.0M1198.0 652.6L1204.2 656.3M1172.7 670.8L1167.0 676.2M1202.5 662.9L1209.1 667.0M1172.9 679.1L1167.2 684.0M1204.9 673.8L1211.8 678.5M1173.2 687.4L1167.5 692.9M1204.2 685.0L1210.9 690.6M1176.3 694.8L1171.5 701.4M1199.3 695.0L1205.2 701.6M1182.5 700.1L1179.2 707.6M1190.5 701.4L1191.2 706.7M1190.5 701.4L1187.7 705.9M1190.5 701.4L1185.7 703.5M1149.3 635.9L1152.0 642.8M1150.5 633.0L1151.6 639.7M1151.6 630.0L1153.3 635.8M1156.3 640.3L1158.6 645.1M1158.7 635.9L1160.1 641.6M1161.1 631.6L1162.6 636.7M1163.6 645.1L1166.4 651.6M1166.9 640.4L1169.3 646.1M1170.3 635.7L1173.3 642.3M1170.0 651.1L1172.5 657.6M1174.4 646.2L1177.2 653.0M1178.7 641.4L1181.3 647.1M1175.4 658.0L1177.1 663.8M1180.7 653.2L1183.1 659.4M1186.1 648.4L1188.5 653.9M1179.0 666.2L1181.1 671.9M1185.3 661.7L1187.8 668.2M1191.7 657.2L1193.9 663.6M1180.3 675.0L1181.5 680.2M1187.7 671.0L1189.2 677.7M1195.1 666.9L1198.1 673.0M1181.1 684.0L1183.8 689.0M1189.0 680.6L1190.1 687.3M1197.0 677.2L1198.4 683.0M1183.3 692.3L1186.3 698.1M1190.2 689.9L1192.1 695.3M1197.2 687.4L1198.8 693.7M1186.7 698.8L1188.3 703.6M1190.9 697.5L1192.7 704.2M1195.1 696.3L1198.1 703.2" stroke="#52b6ec" stroke-width="0.95" opacity="0.85"/>
<path d="M1152.8 627.1L1151.6 619.0M1148.1 638.8L1142.2 644.4M1163.6 627.2L1164.8 619.4M1153.9 644.6L1149.4 649.8M1173.7 631.0L1176.8 622.8M1160.2 649.8L1154.4 656.0M1183.1 636.6L1187.6 629.2M1165.7 655.9L1159.9 661.0M1191.5 643.6L1197.9 637.8M1170.0 662.9L1161.3 667.5M1198.0 652.6L1206.2 647.7M1172.7 670.8L1165.6 672.0M1202.5 662.9L1211.8 659.2M1172.9 679.1L1165.6 679.0M1204.9 673.8L1212.6 673.1M1173.2 687.4L1163.8 689.4M1204.2 685.0L1211.8 686.8M1176.3 694.8L1169.9 701.1M1199.3 695.0L1204.8 700.4M1182.5 700.1L1179.4 707.6M1190.5 701.4L1195.1 708.0M1190.5 701.4L1190.0 709.6M1190.5 701.4L1185.6 707.8M1143.1 632.3L1128.3 636.8M1143.7 635.9L1129.8 640.4M1150.3 641.6L1138.1 644.5" stroke="#cdaa68" stroke-width="1.05" opacity="0.9"/>
<path d="M1143.1 632.3L1152.8 627.1L1163.6 627.2L1173.7 631.0L1183.1 636.6L1191.5 643.6L1198.0 652.6L1202.5 662.9L1204.9 673.8L1204.2 685.0L1199.3 695.0L1190.5 701.4L1182.5 700.1L1176.3 694.8L1173.2 687.4L1172.9 679.1L1172.7 670.8L1170.0 662.9L1165.7 655.9L1160.2 649.8L1153.9 644.6L1148.1 638.8L1143.1 632.3Z" stroke="#c4d850" stroke-width="1.1" opacity="0.88"/>
<path d="M1291.3 635.9L1288.2 647.5M1301.5 634.8L1294.3 652.3M1311.5 637.2L1300.9 656.4M1321.1 641.4L1306.8 661.6M1329.8 647.1L1311.6 667.7M1337.0 654.9L1315.1 674.8M1342.4 664.0L1316.2 682.6M1346.0 674.1L1317.4 690.4M1346.5 684.7L1321.3 697.1M1343.1 694.7L1327.7 701.3M1282.7 641.9L1289.0 644.6L1296.1 647.9L1303.6 651.6L1310.3 656.6L1316.2 662.5L1320.6 669.8L1322.8 678.0L1324.6 686.4L1327.6 694.0L1331.5 699.7L1335.4 701.7M1282.7 641.9L1289.8 641.7L1297.9 643.5L1306.2 646.8L1313.9 651.5L1320.7 657.4L1326.1 664.9L1329.3 673.3L1331.7 682.3L1333.9 690.9L1335.4 698.0L1335.4 701.7M1282.7 641.9L1290.5 638.8L1299.7 639.2L1308.9 642.0L1317.5 646.5L1325.3 652.2L1331.5 659.9L1335.9 668.7L1338.8 678.2L1340.2 687.8L1339.2 696.4L1335.4 701.7" stroke="#37a07a" stroke-width="0.95" opacity="0.85"/>
<path d="M1291.3 635.9L1288.7 630.0M1288.2 647.5L1284.6 646.8M1301.5 634.8L1299.8 628.8M1294.3 652.3L1291.0 651.7M1311.5 637.2L1310.4 631.3M1300.9 656.4L1297.5 655.8M1321.1 641.4L1320.2 635.7M1306.8 661.6L1302.9 660.8M1329.8 647.1L1329.4 641.6M1311.6 667.7L1307.4 666.6M1337.0 654.9L1337.0 649.8M1315.1 674.8L1310.5 673.2M1342.4 664.0L1342.6 659.4M1316.2 682.6L1311.6 680.7M1346.0 674.1L1346.4 670.0M1317.4 690.4L1312.9 688.9M1346.5 684.7L1346.9 681.4M1321.3 697.1L1317.4 696.3M1343.1 694.7L1343.1 692.4M1327.7 701.3L1325.2 701.0M1284.3 641.8L1281.5 635.1M1285.6 641.2L1282.9 634.2M1286.9 640.6L1284.4 634.0M1288.2 640.0L1285.9 634.3M1289.4 639.4L1287.3 634.0M1290.7 638.8L1288.7 632.3M1292.0 638.2L1290.1 631.9M1289.0 644.6L1287.2 639.8M1289.8 641.7L1287.4 636.2M1290.5 638.8L1288.6 634.8M1296.1 647.9L1294.3 643.8M1297.9 643.5L1295.0 639.4M1299.7 639.2L1297.6 634.2M1303.6 651.6L1301.7 645.8M1306.2 646.8L1303.2 641.5M1308.9 642.0L1306.2 636.4M1310.3 656.6L1307.8 650.8M1313.9 651.5L1312.4 647.4M1317.5 646.5L1315.7 641.1M1316.2 662.5L1314.7 658.3M1320.7 657.4L1318.2 652.1M1325.3 652.2L1322.5 647.4M1320.6 669.8L1318.9 665.0M1326.1 664.9L1324.4 659.4M1331.5 659.9L1329.4 655.0M1322.8 678.0L1321.0 672.1M1329.3 673.3L1326.3 667.6M1335.9 668.7L1333.0 664.0M1324.6 686.4L1322.5 680.9M1331.7 682.3L1329.5 677.8M1338.8 678.2L1337.4 673.5M1327.6 694.0L1325.7 689.4M1333.9 690.9L1332.2 686.2M1340.2 687.8L1338.5 683.6M1331.5 699.7L1329.3 695.1M1335.4 698.0L1333.0 692.3M1339.2 696.4L1336.7 690.7" stroke="#c838e2" stroke-width="0.95" opacity="0.85"/>
<path d="M1291.3 635.9L1292.9 638.0M1288.2 647.5L1284.6 654.4M1301.5 634.8L1304.8 636.6M1294.3 652.3L1291.0 659.4M1311.5 637.2L1315.8 639.2M1300.9 656.4L1297.5 663.5M1321.1 641.4L1326.0 643.5M1306.8 661.6L1302.9 668.4M1329.8 647.1L1335.5 649.4M1311.6 667.7L1307.3 674.1M1337.0 654.9L1343.3 657.6M1315.1 674.8L1310.3 680.6M1342.4 664.0L1349.2 667.2M1316.2 682.6L1311.3 687.9M1346.0 674.1L1353.0 677.7M1317.4 690.4L1312.7 696.3M1346.5 684.7L1353.6 689.2M1321.3 697.1L1317.4 703.9M1343.1 694.7L1349.4 700.2M1327.7 701.3L1325.4 708.8M1335.4 701.7L1336.6 706.6M1335.4 701.7L1333.3 706.3M1335.4 701.7L1331.1 704.2M1289.0 644.6L1292.1 649.3M1289.8 641.7L1293.0 646.7M1290.5 638.8L1292.8 644.2M1296.1 647.9L1298.6 652.9M1297.9 643.5L1299.7 648.0M1299.7 639.2L1302.7 644.0M1303.6 651.6L1305.6 657.3M1306.2 646.8L1309.3 652.5M1308.9 642.0L1311.2 647.8M1310.3 656.6L1313.4 662.0M1313.9 651.5L1317.3 656.6M1317.5 646.5L1319.7 651.6M1316.2 662.5L1318.3 667.6M1320.7 657.4L1323.1 662.4M1325.3 652.2L1328.5 657.6M1320.6 669.8L1322.6 675.7M1326.1 664.9L1327.7 670.2M1331.5 659.9L1335.1 665.4M1322.8 678.0L1325.5 683.9M1329.3 673.3L1332.4 679.4M1335.9 668.7L1337.8 674.5M1324.6 686.4L1326.6 692.2M1331.7 682.3L1334.1 687.2M1338.8 678.2L1341.4 683.5M1327.6 694.0L1331.0 699.0M1333.9 690.9L1337.2 696.7M1340.2 687.8L1343.7 693.3M1331.5 699.7L1334.7 704.8M1335.4 698.0L1338.5 704.3M1339.2 696.4L1341.3 701.5" stroke="#52b6ec" stroke-width="0.95" opacity="0.85"/>
<path d="M1291.3 635.9L1288.3 627.5M1288.2 647.5L1281.9 654.7M1301.5 634.8L1302.3 625.7M1294.3 652.3L1289.6 660.2M1311.5 637.2L1313.8 630.3M1300.9 656.4L1296.1 662.6M1321.1 641.4L1324.2 635.2M1306.8 661.6L1300.9 667.5M1329.8 647.1L1335.0 641.0M1311.6 667.7L1304.6 673.1M1337.0 654.9L1342.3 650.9M1315.1 674.8L1307.0 677.3M1342.4 664.0L1349.2 660.8M1316.2 682.6L1308.4 684.2M1346.0 674.1L1352.7 673.3M1317.4 690.4L1309.4 692.9M1346.5 684.7L1353.0 685.6M1321.3 697.1L1314.9 703.1M1343.1 694.7L1348.2 699.0M1327.7 701.3L1325.5 709.1M1335.4 701.7L1340.6 707.4M1335.4 701.7L1335.9 709.5M1335.4 701.7L1331.5 708.3M1282.7 641.9L1269.1 647.8M1283.7 645.2L1271.0 651.1M1290.6 649.9L1279.3 654.0" stroke="#cdaa68" stroke-width="1.05" opacity="0.9"/>
<path d="M1282.7 641.9L1291.3 635.9L1301.5 634.8L1311.5 637.2L1321.1 641.4L1329.8 647.1L1337.0 654.9L1342.4 664.0L1346.0 674.1L1346.5 684.7L1343.1 694.7L1335.4 701.7L1327.7 701.3L1321.3 697.1L1317.4 690.4L1316.2 682.6L1315.1 674.8L1311.6 667.7L1306.8 661.6L1300.9 656.4L1294.3 652.3L1288.2 647.5L1282.7 641.9Z" stroke="#c4d850" stroke-width="1.1" opacity="0.88"/>
<path d="M1434.2 633.2L1430.4 645.4M1445.2 632.3L1436.8 650.7M1455.9 635.3L1443.8 655.3M1466.0 640.0L1449.9 661.0M1475.2 646.3L1454.9 667.6M1482.7 654.8L1458.4 675.3M1488.2 664.7L1459.4 683.6M1491.7 675.5L1460.4 692.0M1491.9 686.8L1464.3 699.1M1487.9 697.3L1471.1 703.8M1424.7 639.3L1431.3 642.4L1438.9 646.1L1446.8 650.3L1453.9 655.8L1460.0 662.3L1464.5 670.2L1466.6 678.9L1468.2 687.8L1471.2 696.0L1475.3 702.2L1479.4 704.4M1424.7 639.3L1432.3 639.3L1441.0 641.5L1449.8 645.3L1457.9 650.5L1465.1 656.9L1470.6 665.1L1473.8 674.2L1476.1 683.7L1478.1 692.9L1479.5 700.6L1479.4 704.4M1424.7 639.3L1433.2 636.3L1443.1 636.9L1452.8 640.3L1462.0 645.2L1470.2 651.6L1476.6 659.9L1481.0 669.4L1483.9 679.6L1485.0 689.8L1483.7 698.9L1479.4 704.4" stroke="#37a07a" stroke-width="0.95" opacity="0.85"/>
<path d="M1434.2 633.2L1431.5 626.9M1430.4 645.4L1426.5 644.5M1445.2 632.3L1443.5 625.9M1436.8 650.7L1433.2 650.0M1455.9 635.3L1454.8 629.0M1443.8 655.3L1440.1 654.6M1466.0 640.0L1465.3 633.9M1449.9 661.0L1445.8 660.0M1475.2 646.3L1475.0 640.5M1454.9 667.6L1450.4 666.3M1482.7 654.8L1482.8 649.4M1458.4 675.3L1453.6 673.5M1488.2 664.7L1488.6 659.8M1459.4 683.6L1454.4 681.4M1491.7 675.5L1492.3 671.1M1460.4 692.0L1455.6 690.2M1491.9 686.8L1492.5 683.3M1464.3 699.1L1460.2 698.1M1487.9 697.3L1488.0 694.9M1471.1 703.8L1468.5 703.4M1426.4 639.2L1423.6 632.1M1427.8 638.6L1425.1 631.0M1429.2 638.0L1426.7 631.7M1430.6 637.5L1428.3 629.9M1432.0 636.9L1429.9 631.0M1433.4 636.3L1431.5 630.7M1434.8 635.7L1433.0 630.2M1431.3 642.4L1428.3 636.5M1432.3 639.3L1430.0 633.9M1433.2 636.3L1431.6 630.5M1438.9 646.1L1437.3 639.8M1441.0 641.5L1438.8 636.2M1443.1 636.9L1440.5 631.2M1446.8 650.3L1444.5 645.4M1449.8 645.3L1446.8 639.7M1452.8 640.3L1451.2 635.2M1453.9 655.8L1452.0 649.8M1457.9 650.5L1454.8 646.2M1462.0 645.2L1459.9 639.4M1460.0 662.3L1457.4 656.6M1465.1 656.9L1462.4 651.0M1470.2 651.6L1468.7 646.4M1464.5 670.2L1462.8 663.9M1470.6 665.1L1468.6 660.2M1476.6 659.9L1475.0 654.8M1466.6 678.9L1463.7 672.7M1473.8 674.2L1472.3 668.6M1481.0 669.4L1479.2 664.8M1468.2 687.8L1465.8 681.4M1476.1 683.7L1474.7 679.0M1483.9 679.6L1480.8 673.9M1471.2 696.0L1468.3 690.4M1478.1 692.9L1476.4 687.8M1485.0 689.8L1483.5 684.6M1475.3 702.2L1472.4 697.3M1479.5 700.6L1477.6 695.9M1483.7 698.9L1481.7 692.9" stroke="#c838e2" stroke-width="0.95" opacity="0.85"/>
<path d="M1434.2 633.2L1435.7 635.4M1430.4 645.4L1426.2 652.6M1445.2 632.3L1448.6 634.4M1436.8 650.7L1433.1 658.1M1455.9 635.3L1460.4 637.5M1443.8 655.3L1439.9 662.7M1466.0 640.0L1471.2 642.4M1449.9 661.0L1445.5 668.1M1475.2 646.3L1481.2 648.9M1454.9 667.6L1450.1 674.2M1482.7 654.8L1489.4 657.9M1458.4 675.3L1453.1 681.2M1488.2 664.7L1495.4 668.2M1459.4 683.6L1454.0 689.1M1491.7 675.5L1499.2 679.6M1460.4 692.0L1455.1 698.0M1491.9 686.8L1499.4 691.8M1464.3 699.1L1459.9 706.2M1487.9 697.3L1494.5 703.3M1471.1 703.8L1468.5 711.7M1479.4 704.4L1480.6 709.7M1479.4 704.4L1477.0 709.3M1479.4 704.4L1474.7 707.0M1431.3 642.4L1434.4 647.2M1432.3 639.3L1435.9 645.2M1433.2 636.3L1436.4 641.8M1438.9 646.1L1442.2 651.1M1441.0 641.5L1442.9 648.0M1443.1 636.9L1444.8 642.2M1446.8 650.3L1449.1 656.4M1449.8 645.3L1452.4 652.0M1452.8 640.3L1454.4 645.7M1453.9 655.8L1456.7 661.4M1457.9 650.5L1461.2 655.6M1462.0 645.2L1464.3 651.0M1460.0 662.3L1462.4 668.3M1465.1 656.9L1468.2 662.3M1470.2 651.6L1473.3 656.9M1464.5 670.2L1466.3 675.0M1470.6 665.1L1472.5 670.6M1476.6 659.9L1478.4 665.1M1466.6 678.9L1469.0 683.7M1473.8 674.2L1476.5 680.2M1481.0 669.4L1483.4 674.8M1468.2 687.8L1470.7 694.0M1476.1 683.7L1479.0 689.6M1483.9 679.6L1486.2 685.6M1471.2 696.0L1473.9 702.3M1478.1 692.9L1480.1 699.2M1485.0 689.8L1487.4 695.6M1475.3 702.2L1479.0 707.9M1479.5 700.6L1481.5 707.3M1483.7 698.9L1485.4 704.1" stroke="#52b6ec" stroke-width="0.95" opacity="0.85"/>
<path d="M1434.2 633.2L1430.6 623.8M1430.4 645.4L1425.5 651.5M1445.2 632.3L1445.2 624.5M1436.8 650.7L1432.2 657.3M1455.9 635.3L1457.9 627.7M1443.8 655.3L1439.3 661.8M1466.0 640.0L1469.3 632.8M1449.9 661.0L1444.7 666.1M1475.2 646.3L1481.2 639.7M1454.9 667.6L1448.8 672.4M1482.7 654.8L1489.3 650.7M1458.4 675.3L1449.9 677.0M1488.2 664.7L1497.2 660.6M1459.4 683.6L1450.9 684.3M1491.7 675.5L1501.3 673.4M1460.4 692.0L1453.5 694.1M1491.9 686.8L1501.1 688.5M1464.3 699.1L1458.2 704.2M1487.9 697.3L1494.8 702.0M1471.1 703.8L1468.9 712.1M1479.4 704.4L1484.8 710.7M1479.4 704.4L1479.6 712.7M1479.4 704.4L1474.9 711.4M1424.7 639.3L1409.9 645.1M1425.7 642.8L1411.7 648.7M1432.8 648.0L1420.6 652.0" stroke="#cdaa68" stroke-width="1.05" opacity="0.9"/>
<path d="M1424.7 639.3L1434.2 633.2L1445.2 632.3L1455.9 635.3L1466.0 640.0L1475.2 646.3L1482.7 654.8L1488.2 664.7L1491.7 675.5L1491.9 686.8L1487.9 697.3L1479.4 704.4L1471.1 703.8L1464.3 699.1L1460.4 692.0L1459.4 683.6L1458.4 675.3L1454.9 667.6L1449.9 661.0L1443.8 655.3L1436.8 650.7L1430.4 645.4L1424.7 639.3Z" stroke="#c4d850" stroke-width="1.1" opacity="0.88"/>
<path d="M876.2 775.8L872.2 786.4M886.5 775.5L878.0 791.2M896.5 778.4L884.4 795.5M905.8 782.9L889.9 800.7M914.3 788.7L894.4 806.6M921.0 796.4L897.4 813.5M925.8 805.3L898.0 820.8M928.7 814.8L898.7 828.1M928.5 824.7L902.1 834.5M924.3 833.7L908.3 838.8M867.0 780.8L873.2 783.7L880.2 787.3L887.4 791.2L893.9 796.2L899.4 802.1L903.3 809.2L905.0 816.9L906.2 824.8L908.7 832.0L912.3 837.6L916.0 839.7M867.0 780.8L874.2 781.1L882.3 783.3L890.4 787.0L897.9 791.8L904.3 797.7L909.2 805.0L911.9 813.0L913.7 821.4L915.3 829.6L916.3 836.3L916.0 839.7M867.0 780.8L875.2 778.5L884.4 779.4L893.5 782.7L901.8 787.3L909.3 793.2L915.1 800.7L918.8 809.2L921.2 818.1L921.9 827.1L920.3 835.0L916.0 839.7" stroke="#37a07a" stroke-width="0.95" opacity="0.85"/>
<path d="M876.2 775.8L873.9 770.2M872.2 786.4L868.6 785.5M886.5 775.5L885.2 769.8M878.0 791.2L874.7 790.5M896.5 778.4L895.7 772.9M884.4 795.5L881.0 794.7M905.8 782.9L905.4 777.5M889.9 800.7L886.1 799.7M914.3 788.7L914.2 783.6M894.4 806.6L890.2 805.3M921.0 796.4L921.3 791.7M897.4 813.5L892.9 811.7M925.8 805.3L926.3 801.0M898.0 820.8L893.4 818.7M928.7 814.8L929.4 811.0M898.7 828.1L894.2 826.4M928.5 824.7L929.1 821.6M902.1 834.5L898.3 833.5M924.3 833.7L924.5 831.6M908.3 838.8L905.8 838.4M868.7 780.8L866.3 774.9M870.0 780.4L867.8 774.2M871.4 779.9L869.3 774.7M872.7 779.4L870.8 774.1M874.0 779.0L872.2 773.8M875.3 778.5L873.7 772.8M876.7 778.1L875.2 772.6M873.2 783.7L871.4 779.8M874.2 781.1L872.1 777.1M875.2 778.5L873.6 774.5M880.2 787.3L878.6 782.2M882.3 783.3L879.7 778.5M884.4 779.4L881.7 775.0M887.4 791.2L885.2 786.3M890.4 787.0L889.2 783.1M893.5 782.7L891.4 778.5M893.9 796.2L892.1 792.3M897.9 791.8L895.3 787.1M901.8 787.3L899.5 782.2M899.4 802.1L898.1 798.0M904.3 797.7L902.6 792.1M909.3 793.2L907.1 788.4M903.3 809.2L901.3 803.9M909.2 805.0L907.9 799.6M915.1 800.7L913.1 795.3M905.0 816.9L902.5 812.4M911.9 813.0L909.2 807.5M918.8 809.2L917.6 805.1M906.2 824.8L904.6 820.8M913.7 821.4L911.3 816.3M921.2 818.1L918.7 812.9M908.7 832.0L906.5 827.6M915.3 829.6L912.9 824.4M921.9 827.1L919.6 822.6M912.3 837.6L910.3 832.9M916.3 836.3L914.5 831.1M920.3 835.0L917.7 829.8" stroke="#c838e2" stroke-width="0.95" opacity="0.85"/>
<path d="M876.2 775.8L877.6 777.8M872.2 786.4L868.0 792.5M886.5 775.5L889.7 777.4M878.0 791.2L874.2 797.6M896.5 778.4L900.7 780.5M884.4 795.5L880.5 801.8M905.8 782.9L910.6 785.1M889.9 800.7L885.6 806.7M914.3 788.7L919.8 791.3M894.4 806.6L889.6 812.2M921.0 796.4L927.1 799.4M897.4 813.5L892.2 818.4M925.8 805.3L932.4 808.6M898.0 820.8L892.7 825.3M928.7 814.8L935.5 818.7M898.7 828.1L893.5 833.1M928.5 824.7L935.3 829.3M902.1 834.5L897.7 840.5M924.3 833.7L930.3 839.2M908.3 838.8L905.5 845.6M916.0 839.7L917.0 844.3M916.0 839.7L913.6 843.8M916.0 839.7L911.6 841.7M873.2 783.7L875.5 788.9M874.2 781.1L876.1 785.3M875.2 778.5L877.9 783.7M880.2 787.3L882.6 791.5M882.3 783.3L884.6 788.2M884.4 779.4L886.7 784.0M887.4 791.2L889.2 795.5M890.4 787.0L893.0 792.7M893.5 782.7L895.2 788.2M893.9 796.2L895.4 801.9M897.9 791.8L901.0 795.9M901.8 787.3L903.8 791.6M899.4 802.1L901.5 806.9M904.3 797.7L905.7 803.5M909.3 793.2L912.4 799.2M903.3 809.2L905.2 815.1M909.2 805.0L912.1 809.8M915.1 800.7L918.1 806.7M905.0 816.9L906.6 822.7M911.9 813.0L914.6 817.7M918.8 809.2L921.5 813.5M906.2 824.8L908.3 829.0M913.7 821.4L916.4 825.9M921.2 818.1L923.8 823.7M908.7 832.0L911.7 837.3M915.3 829.6L918.4 835.0M921.9 827.1L923.3 833.1M912.3 837.6L914.6 841.8M916.3 836.3L918.1 841.9M920.3 835.0L923.1 839.6" stroke="#52b6ec" stroke-width="0.95" opacity="0.85"/>
<path d="M876.2 775.8L873.7 768.8M872.2 786.4L866.7 791.1M886.5 775.5L887.2 767.6M878.0 791.2L873.1 797.4M896.5 778.4L899.8 772.5M884.4 795.5L878.9 801.5M905.8 782.9L910.0 776.4M889.9 800.7L884.4 805.7M914.3 788.7L919.2 783.2M894.4 806.6L888.0 810.4M921.0 796.4L928.5 791.6M897.4 813.5L889.5 815.2M925.8 805.3L933.7 801.8M898.0 820.8L890.8 820.9M928.7 814.8L936.3 813.4M898.7 828.1L890.6 830.2M928.5 824.7L936.0 825.6M902.1 834.5L895.2 840.3M924.3 833.7L930.6 838.4M908.3 838.8L905.5 846.6M916.0 839.7L920.9 845.3M916.0 839.7L916.0 846.9M916.0 839.7L911.6 845.6M867.0 780.8L852.9 785.4M867.8 784.0L854.6 788.5M874.4 788.8L862.8 791.8" stroke="#cdaa68" stroke-width="1.05" opacity="0.9"/>
<path d="M867.0 780.8L876.2 775.8L886.5 775.5L896.5 778.4L905.8 782.9L914.3 788.7L921.0 796.4L925.8 805.3L928.7 814.8L928.5 824.7L924.3 833.7L916.0 839.7L908.3 838.8L902.1 834.5L898.7 828.1L898.0 820.8L897.4 813.5L894.4 806.6L889.9 800.7L884.4 795.5L878.0 791.2L872.2 786.4L867.0 780.8Z" stroke="#c4d850" stroke-width="1.1" opacity="0.88"/>
<path d="M1014.0 770.8L1010.2 782.2M1025.2 770.0L1016.7 787.1M1036.1 772.7L1023.8 791.4M1046.3 777.0L1030.0 796.7M1055.7 782.9L1035.1 802.9M1063.3 790.8L1038.7 810.0M1068.9 800.0L1039.6 817.8M1072.4 810.1L1040.6 825.6M1072.7 820.6L1044.6 832.3M1068.6 830.5L1051.5 836.6M1004.4 776.5L1011.2 779.4L1018.9 782.9L1026.9 786.7L1034.1 791.8L1040.3 797.9L1044.8 805.2L1047.0 813.4L1048.6 821.7L1051.6 829.3L1055.8 835.1L1059.9 837.2M1004.4 776.5L1012.1 776.5L1021.0 778.6L1029.9 782.1L1038.2 786.9L1045.4 792.9L1051.0 800.4L1054.3 808.9L1056.5 817.8L1058.6 826.4L1060.0 833.6L1059.9 837.2M1004.4 776.5L1013.1 773.7L1023.1 774.3L1033.0 777.4L1042.2 782.0L1050.6 787.9L1057.1 795.6L1061.6 804.5L1064.5 814.0L1065.6 823.5L1064.3 832.0L1059.9 837.2" stroke="#37a07a" stroke-width="0.95" opacity="0.85"/>
<path d="M1014.0 770.8L1011.4 764.9M1010.2 782.2L1006.3 781.4M1025.2 770.0L1023.5 764.0M1016.7 787.1L1013.1 786.5M1036.1 772.7L1035.0 766.8M1023.8 791.4L1020.1 790.8M1046.3 777.0L1045.6 771.3M1030.0 796.7L1025.9 795.9M1055.7 782.9L1055.5 777.4M1035.1 802.9L1030.5 801.6M1063.3 790.8L1063.4 785.8M1038.7 810.0L1033.7 808.3M1068.9 800.0L1069.3 795.4M1039.6 817.8L1034.6 815.8M1072.4 810.1L1073.0 806.0M1040.6 825.6L1035.7 824.0M1072.7 820.6L1073.2 817.4M1044.6 832.3L1040.5 831.4M1068.6 830.5L1068.7 828.2M1051.5 836.6L1048.8 836.3M1006.2 776.5L1003.3 769.9M1007.6 775.9L1004.9 769.0M1009.0 775.4L1006.5 769.2M1010.4 774.8L1008.1 768.0M1011.8 774.3L1009.7 768.8M1013.3 773.7L1011.3 767.3M1014.7 773.2L1012.9 767.1M1011.2 779.4L1008.3 774.8M1012.1 776.5L1009.0 771.4M1013.1 773.7L1011.6 767.7M1018.9 782.9L1017.4 777.1M1021.0 778.6L1017.8 773.1M1023.1 774.3L1020.6 768.9M1026.9 786.7L1023.8 782.8M1029.9 782.1L1027.1 776.6M1033.0 777.4L1030.7 773.2M1034.1 791.8L1032.7 787.0M1038.2 786.9L1036.1 781.0M1042.2 782.0L1040.6 777.1M1040.3 797.9L1037.8 793.6M1045.4 792.9L1042.6 787.6M1050.6 787.9L1047.7 782.3M1044.8 805.2L1042.2 800.2M1051.0 800.4L1049.3 794.8M1057.1 795.6L1055.2 790.3M1047.0 813.4L1044.1 807.9M1054.3 808.9L1052.3 803.5M1061.6 804.5L1060.0 799.2M1048.6 821.7L1047.0 815.7M1056.5 817.8L1053.5 813.6M1064.5 814.0L1062.2 808.1M1051.6 829.3L1048.5 823.7M1058.6 826.4L1056.0 821.3M1065.6 823.5L1063.7 818.0M1055.8 835.1L1052.8 829.5M1060.0 833.6L1057.6 828.3M1064.3 832.0L1061.6 826.7" stroke="#c838e2" stroke-width="0.95" opacity="0.85"/>
<path d="M1014.0 770.8L1015.6 772.9M1010.2 782.2L1006.0 789.0M1025.2 770.0L1028.7 771.9M1016.7 787.1L1012.9 794.1M1036.1 772.7L1040.7 774.7M1023.8 791.4L1019.9 798.4M1046.3 777.0L1051.6 779.2M1030.0 796.7L1025.6 803.4M1055.7 782.9L1061.8 785.3M1035.1 802.9L1030.2 809.1M1063.3 790.8L1070.1 793.7M1038.7 810.0L1033.2 815.6M1068.9 800.0L1076.1 803.3M1039.6 817.8L1034.1 822.9M1072.4 810.1L1080.0 813.9M1040.6 825.6L1035.3 831.2M1072.7 820.6L1080.2 825.2M1044.6 832.3L1040.2 838.9M1068.6 830.5L1075.3 836.1M1051.5 836.6L1048.8 844.0M1059.9 837.2L1061.1 842.1M1059.9 837.2L1057.5 841.7M1059.9 837.2L1055.2 839.6M1011.2 779.4L1014.6 785.3M1012.1 776.5L1014.5 781.3M1013.1 773.7L1015.7 779.5M1018.9 782.9L1021.4 788.7M1021.0 778.6L1024.5 783.1M1023.1 774.3L1025.6 778.7M1026.9 786.7L1030.1 792.5M1029.9 782.1L1032.7 786.8M1033.0 777.4L1035.4 782.3M1034.1 791.8L1035.8 797.0M1038.2 786.9L1040.5 792.6M1042.2 782.0L1045.7 787.2M1040.3 797.9L1042.7 803.8M1045.4 792.9L1047.4 798.3M1050.6 787.9L1052.6 793.1M1044.8 805.2L1048.6 810.9M1051.0 800.4L1053.4 804.9M1057.1 795.6L1059.3 800.0M1047.0 813.4L1049.4 819.5M1054.3 808.9L1056.6 813.5M1061.6 804.5L1064.8 810.2M1048.6 821.7L1050.9 826.8M1056.5 817.8L1058.9 823.7M1064.5 814.0L1066.9 818.7M1051.6 829.3L1054.5 833.7M1058.6 826.4L1061.4 831.0M1065.6 823.5L1068.8 829.2M1055.8 835.1L1058.0 840.9M1060.0 833.6L1063.5 838.3M1064.3 832.0L1066.3 836.4" stroke="#52b6ec" stroke-width="0.95" opacity="0.85"/>
<path d="M1014.0 770.8L1010.9 763.7M1010.2 782.2L1002.8 789.2M1025.2 770.0L1025.9 762.0M1016.7 787.1L1011.2 793.9M1036.1 772.7L1038.8 765.0M1023.8 791.4L1018.1 798.5M1046.3 777.0L1051.1 769.4M1030.0 796.7L1022.3 803.5M1055.7 782.9L1060.9 777.0M1035.1 802.9L1028.3 807.4M1063.3 790.8L1070.4 785.7M1038.7 810.0L1031.2 812.1M1068.9 800.0L1075.8 797.5M1039.6 817.8L1031.4 818.4M1072.4 810.1L1079.3 808.8M1040.6 825.6L1032.5 827.8M1072.7 820.6L1081.1 822.7M1044.6 832.3L1038.2 838.3M1068.6 830.5L1074.4 834.6M1051.5 836.6L1048.8 843.5M1059.9 837.2L1065.4 843.0M1059.9 837.2L1060.1 844.9M1059.9 837.2L1055.4 843.7M1004.4 776.5L989.4 782.0M1005.4 779.9L991.3 785.4M1012.7 784.7L1000.3 788.4" stroke="#cdaa68" stroke-width="1.05" opacity="0.9"/>
<path d="M1004.4 776.5L1014.0 770.8L1025.2 770.0L1036.1 772.7L1046.3 777.0L1055.7 782.9L1063.3 790.8L1068.9 800.0L1072.4 810.1L1072.7 820.6L1068.6 830.5L1059.9 837.2L1051.5 836.6L1044.6 832.3L1040.6 825.6L1039.6 817.8L1038.7 810.0L1035.1 802.9L1030.0 796.7L1023.8 791.4L1016.7 787.1L1010.2 782.2L1004.4 776.5Z" stroke="#c4d850" stroke-width="1.1" opacity="0.88"/>
<path d="M1154.0 775.9L1150.8 786.7M1164.4 774.7L1157.0 791.1M1174.6 776.9L1163.8 794.9M1184.4 780.6L1169.8 799.7M1193.4 785.8L1174.8 805.3M1200.8 793.0L1178.3 811.9M1206.3 801.5L1179.5 819.2M1210.0 810.8L1180.7 826.4M1210.5 820.7L1184.7 832.6M1207.0 830.1L1191.3 836.5M1145.1 781.6L1151.6 784.0L1158.9 787.0L1166.5 790.4L1173.4 794.9L1179.4 800.4L1183.9 807.2L1186.2 814.8L1188.0 822.5L1191.1 829.6L1195.2 834.9L1199.1 836.7M1145.1 781.6L1152.4 781.3L1160.7 782.9L1169.2 785.9L1177.1 790.2L1184.1 795.6L1189.5 802.5L1192.9 810.3L1195.3 818.6L1197.6 826.6L1199.1 833.3L1199.1 836.7M1145.1 781.6L1153.2 778.6L1162.6 778.8L1171.9 781.4L1180.8 785.4L1188.8 790.7L1195.2 797.7L1199.6 805.9L1202.7 814.7L1204.1 823.7L1203.1 831.7L1199.1 836.7" stroke="#37a07a" stroke-width="0.95" opacity="0.85"/>
<path d="M1154.0 775.9L1151.2 770.5M1150.8 786.7L1147.0 786.1M1164.4 774.7L1162.6 769.1M1157.0 791.1L1153.6 790.6M1174.6 776.9L1173.5 771.4M1163.8 794.9L1160.3 794.4M1184.4 780.6L1183.6 775.3M1169.8 799.7L1165.9 799.0M1193.4 785.8L1193.0 780.7M1174.8 805.3L1170.5 804.3M1200.8 793.0L1200.7 788.3M1178.3 811.9L1173.6 810.5M1206.3 801.5L1206.5 797.2M1179.5 819.2L1174.7 817.4M1210.0 810.8L1210.4 807.0M1180.7 826.4L1176.1 825.1M1210.5 820.7L1210.9 817.6M1184.7 832.6L1180.7 831.9M1207.0 830.1L1207.1 828.0M1191.3 836.5L1188.7 836.2M1146.8 781.4L1143.9 775.7M1148.1 780.9L1145.4 775.1M1149.4 780.3L1146.9 774.7M1150.7 779.8L1148.3 773.9M1152.0 779.2L1149.8 773.5M1153.3 778.6L1151.3 772.9M1154.6 778.1L1152.8 773.3M1151.6 784.0L1149.9 779.2M1152.4 781.3L1149.4 776.8M1153.2 778.6L1151.6 773.3M1158.9 787.0L1156.8 781.9M1160.7 782.9L1158.2 777.8M1162.6 778.8L1160.3 774.4M1166.5 790.4L1164.9 785.4M1169.2 785.9L1166.6 781.7M1171.9 781.4L1170.4 777.4M1173.4 794.9L1171.1 790.5M1177.1 790.2L1175.2 785.6M1180.8 785.4L1178.1 780.2M1179.4 800.4L1176.3 795.0M1184.1 795.6L1181.1 790.9M1188.8 790.7L1185.9 786.8M1183.9 807.2L1181.2 802.6M1189.5 802.5L1187.6 797.4M1195.2 797.7L1192.6 793.7M1186.2 814.8L1184.0 810.0M1192.9 810.3L1191.2 806.3M1199.6 805.9L1197.5 800.8M1188.0 822.5L1185.9 818.8M1195.3 818.6L1193.3 813.8M1202.7 814.7L1201.1 811.0M1191.1 829.6L1188.1 824.2M1197.6 826.6L1196.1 821.3M1204.1 823.7L1201.8 819.0M1195.2 834.9L1193.4 830.9M1199.1 833.3L1197.1 829.2M1203.1 831.7L1201.1 827.1" stroke="#c838e2" stroke-width="0.95" opacity="0.85"/>
<path d="M1154.0 775.9L1155.5 777.8M1150.8 786.7L1147.0 793.2M1164.4 774.7L1167.7 776.4M1157.0 791.1L1153.7 797.8M1174.6 776.9L1179.0 778.6M1163.8 794.9L1160.3 801.6M1184.4 780.6L1189.4 782.5M1169.8 799.7L1165.8 806.1M1193.4 785.8L1199.2 787.9M1174.8 805.3L1170.3 811.3M1200.8 793.0L1207.2 795.5M1178.3 811.9L1173.4 817.3M1206.3 801.5L1213.2 804.3M1179.5 819.2L1174.5 824.2M1210.0 810.8L1217.2 814.1M1180.7 826.4L1175.9 831.9M1210.5 820.7L1217.8 824.8M1184.7 832.6L1180.7 839.0M1207.0 830.1L1213.5 835.2M1191.3 836.5L1189.0 843.4M1199.1 836.7L1200.4 841.3M1199.1 836.7L1197.0 841.0M1199.1 836.7L1194.8 839.1M1151.6 784.0L1155.0 788.0M1152.4 781.3L1154.6 786.0M1153.2 778.6L1155.2 783.0M1158.9 787.0L1160.6 792.1M1160.7 782.9L1163.4 788.1M1162.6 778.8L1165.4 784.3M1166.5 790.4L1168.9 796.1M1169.2 785.9L1172.3 791.1M1171.9 781.4L1173.9 786.6M1173.4 794.9L1175.8 799.5M1177.1 790.2L1179.2 794.6M1180.8 785.4L1183.4 789.6M1179.4 800.4L1181.3 805.8M1184.1 795.6L1187.3 800.4M1188.8 790.7L1192.1 794.7M1183.9 807.2L1187.2 811.8M1189.5 802.5L1192.6 807.0M1195.2 797.7L1198.6 803.2M1186.2 814.8L1189.3 819.9M1192.9 810.3L1194.8 815.1M1199.6 805.9L1201.6 809.9M1188.0 822.5L1191.6 826.7M1195.3 818.6L1198.3 823.3M1202.7 814.7L1204.5 820.1M1191.1 829.6L1193.4 835.0M1197.6 826.6L1199.9 830.7M1204.1 823.7L1206.5 828.2M1195.2 834.9L1197.4 839.6M1199.1 833.3L1202.8 837.9M1203.1 831.7L1206.3 835.9" stroke="#52b6ec" stroke-width="0.95" opacity="0.85"/>
<path d="M1154.0 775.9L1151.2 769.0M1150.8 786.7L1144.4 793.7M1164.4 774.7L1164.5 766.6M1157.0 791.1L1152.9 798.3M1174.6 776.9L1177.0 769.7M1163.8 794.9L1159.0 800.5M1184.4 780.6L1187.7 774.1M1169.8 799.7L1164.0 804.7M1193.4 785.8L1197.9 780.2M1174.8 805.3L1168.0 809.0M1200.8 793.0L1206.5 788.6M1178.3 811.9L1170.2 814.7M1206.3 801.5L1212.4 798.4M1179.5 819.2L1172.4 819.7M1210.0 810.8L1217.9 809.2M1180.7 826.4L1173.1 828.4M1210.5 820.7L1218.6 821.7M1184.7 832.6L1179.5 837.2M1207.0 830.1L1213.7 834.8M1191.3 836.5L1189.1 844.1M1199.1 836.7L1204.5 841.9M1199.1 836.7L1199.6 844.0M1199.1 836.7L1195.1 842.9M1145.1 781.6L1131.2 787.2M1146.2 784.7L1133.1 790.3M1153.2 789.0L1141.7 792.9" stroke="#cdaa68" stroke-width="1.05" opacity="0.9"/>
<path d="M1145.1 781.6L1154.0 775.9L1164.4 774.7L1174.6 776.9L1184.4 780.6L1193.4 785.8L1200.8 793.0L1206.3 801.5L1210.0 810.8L1210.5 820.7L1207.0 830.1L1199.1 836.7L1191.3 836.5L1184.7 832.6L1180.7 826.4L1179.5 819.2L1178.3 811.9L1174.8 805.3L1169.8 799.7L1163.8 794.9L1157.0 791.1L1150.8 786.7L1145.1 781.6Z" stroke="#c4d850" stroke-width="1.1" opacity="0.88"/>
<path d="M1293.2 773.0L1289.7 784.8M1303.9 772.0L1296.1 789.8M1314.3 774.6L1302.9 794.2M1324.2 779.0L1308.9 799.6M1333.3 785.0L1313.9 805.9M1340.7 793.1L1317.4 813.3M1346.2 802.6L1318.5 821.3M1349.8 812.9L1319.6 829.3M1350.2 823.8L1323.5 836.2M1346.4 834.0L1330.2 840.6M1284.1 779.0L1290.6 781.9L1298.0 785.4L1305.7 789.3L1312.8 794.5L1318.8 800.6L1323.3 808.2L1325.4 816.6L1327.2 825.2L1330.2 833.1L1334.3 839.0L1338.2 841.1M1284.1 779.0L1291.5 778.9L1300.0 780.9L1308.6 784.4L1316.6 789.3L1323.6 795.4L1329.1 803.2L1332.4 811.9L1334.7 821.1L1336.8 830.0L1338.3 837.3L1338.2 841.1M1284.1 779.0L1292.3 776.0L1301.9 776.4L1311.5 779.5L1320.4 784.2L1328.5 790.2L1334.9 798.1L1339.3 807.2L1342.2 817.0L1343.5 826.9L1342.4 835.7L1338.2 841.1" stroke="#37a07a" stroke-width="0.95" opacity="0.85"/>
<path d="M1293.2 773.0L1290.5 766.9M1289.7 784.8L1286.0 784.1M1303.9 772.0L1302.2 765.8M1296.1 789.8L1292.6 789.2M1314.3 774.6L1313.2 768.6M1302.9 794.2L1299.3 793.5M1324.2 779.0L1323.5 773.1M1308.9 799.6L1305.0 798.7M1333.3 785.0L1333.0 779.3M1313.9 805.9L1309.5 804.7M1340.7 793.1L1340.7 787.9M1317.4 813.3L1312.7 811.5M1346.2 802.6L1346.5 797.8M1318.5 821.3L1313.7 819.2M1349.8 812.9L1350.2 808.7M1319.6 829.3L1314.9 827.7M1350.2 823.8L1350.6 820.4M1323.5 836.2L1319.5 835.3M1346.4 834.0L1346.5 831.7M1330.2 840.6L1327.6 840.2M1285.8 778.9L1282.9 772.5M1287.1 778.3L1284.5 772.5M1288.5 777.7L1285.9 770.5M1289.8 777.2L1287.5 771.6M1291.2 776.6L1289.0 770.2M1292.5 776.0L1290.5 770.3M1293.9 775.4L1292.0 769.1M1290.6 781.9L1289.0 775.7M1291.5 778.9L1289.0 773.5M1292.3 776.0L1289.8 771.1M1298.0 785.4L1296.4 779.8M1300.0 780.9L1298.1 775.2M1301.9 776.4L1299.9 770.6M1305.7 789.3L1303.2 784.0M1308.6 784.4L1306.1 778.9M1311.5 779.5L1308.7 775.2M1312.8 794.5L1309.8 790.4M1316.6 789.3L1313.8 784.0M1320.4 784.2L1317.7 779.4M1318.8 800.6L1315.9 795.2M1323.6 795.4L1321.5 790.0M1328.5 790.2L1326.4 785.9M1323.3 808.2L1321.0 803.2M1329.1 803.2L1327.1 797.9M1334.9 798.1L1332.4 792.4M1325.4 816.6L1323.1 810.5M1332.4 811.9L1330.2 807.0M1339.3 807.2L1337.0 803.1M1327.2 825.2L1325.3 821.1M1334.7 821.1L1331.8 817.0M1342.2 817.0L1340.5 812.2M1330.2 833.1L1328.4 827.9M1336.8 830.0L1335.2 825.3M1343.5 826.9L1341.1 821.8M1334.3 839.0L1331.6 834.2M1338.3 837.3L1336.5 832.2M1342.4 835.7L1340.7 831.1" stroke="#c838e2" stroke-width="0.95" opacity="0.85"/>
<path d="M1293.2 773.0L1294.8 775.1M1289.7 784.8L1285.8 791.9M1303.9 772.0L1307.2 773.9M1296.1 789.8L1292.5 797.1M1314.3 774.6L1318.8 776.7M1302.9 794.2L1299.2 801.4M1324.2 779.0L1329.3 781.2M1308.9 799.6L1304.8 806.5M1333.3 785.0L1339.2 787.4M1313.9 805.9L1309.3 812.4M1340.7 793.1L1347.2 796.0M1317.4 813.3L1312.4 819.1M1346.2 802.6L1353.2 805.9M1318.5 821.3L1313.3 826.6M1349.8 812.9L1357.1 816.8M1319.6 829.3L1314.6 835.2M1350.2 823.8L1357.5 828.5M1323.5 836.2L1319.4 843.1M1346.4 834.0L1352.9 839.8M1330.2 840.6L1327.7 848.2M1338.2 841.1L1339.5 846.1M1338.2 841.1L1336.0 845.8M1338.2 841.1L1333.8 843.6M1290.6 781.9L1293.4 786.8M1291.5 778.9L1294.5 785.0M1292.3 776.0L1294.7 781.0M1298.0 785.4L1299.8 790.5M1300.0 780.9L1303.1 786.4M1301.9 776.4L1303.7 781.2M1305.7 789.3L1307.4 794.8M1308.6 784.4L1311.4 790.8M1311.5 779.5L1313.8 785.5M1312.8 794.5L1315.3 800.9M1316.6 789.3L1319.6 794.1M1320.4 784.2L1323.9 789.2M1318.8 800.6L1322.4 805.3M1323.6 795.4L1326.5 800.3M1328.5 790.2L1331.8 795.9M1323.3 808.2L1325.1 814.4M1329.1 803.2L1332.0 808.5M1334.9 798.1L1337.7 803.7M1325.4 816.6L1328.3 821.9M1332.4 811.9L1335.8 816.6M1339.3 807.2L1342.4 812.3M1327.2 825.2L1329.6 831.4M1334.7 821.1L1337.3 826.0M1342.2 817.0L1345.8 823.1M1330.2 833.1L1333.8 837.6M1336.8 830.0L1339.0 836.1M1343.5 826.9L1346.9 831.7M1334.3 839.0L1336.0 844.6M1338.3 837.3L1340.4 843.4M1342.4 835.7L1345.1 842.0" stroke="#52b6ec" stroke-width="0.95" opacity="0.85"/>
<path d="M1293.2 773.0L1291.4 765.6M1289.7 784.8L1283.7 790.9M1303.9 772.0L1304.5 764.3M1296.1 789.8L1290.8 796.7M1314.3 774.6L1316.7 766.5M1302.9 794.2L1298.1 800.6M1324.2 779.0L1327.2 771.7M1308.9 799.6L1303.7 805.0M1333.3 785.0L1339.0 777.9M1313.9 805.9L1306.1 810.2M1340.7 793.1L1347.5 788.2M1317.4 813.3L1310.7 816.0M1346.2 802.6L1354.5 799.1M1318.5 821.3L1309.3 821.9M1349.8 812.9L1356.5 810.9M1319.6 829.3L1312.5 831.6M1350.2 823.8L1357.5 824.8M1323.5 836.2L1316.0 842.9M1346.4 834.0L1354.0 839.5M1330.2 840.6L1328.2 848.8M1338.2 841.1L1343.6 847.0M1338.2 841.1L1338.6 849.1M1338.2 841.1L1334.0 847.8M1284.1 779.0L1269.8 784.9M1285.1 782.4L1271.7 788.3M1292.2 787.3L1280.4 791.4" stroke="#cdaa68" stroke-width="1.05" opacity="0.9"/>
<path d="M1284.1 779.0L1293.2 773.0L1303.9 772.0L1314.3 774.6L1324.2 779.0L1333.3 785.0L1340.7 793.1L1346.2 802.6L1349.8 812.9L1350.2 823.8L1346.4 834.0L1338.2 841.1L1330.2 840.6L1323.5 836.2L1319.6 829.3L1318.5 821.3L1317.4 813.3L1313.9 805.9L1308.9 799.6L1302.9 794.2L1296.1 789.8L1289.7 784.8L1284.1 779.0Z" stroke="#c4d850" stroke-width="1.1" opacity="0.88"/>
<path d="M1433.0 763.4L1428.5 774.6M1443.7 763.3L1434.4 779.9M1453.9 766.8L1440.8 784.7M1463.4 771.9L1446.4 790.5M1471.9 778.4L1450.8 797.0M1478.6 786.9L1453.7 804.4M1483.3 796.5L1454.1 812.2M1486.0 806.8L1454.5 820.1M1485.4 817.4L1457.8 827.1M1480.8 827.0L1464.1 832.0M1423.4 768.4L1429.6 771.8L1436.7 775.8L1444.1 780.2L1450.6 785.8L1456.1 792.3L1459.9 800.0L1461.4 808.3L1462.4 816.8L1464.7 824.7L1468.3 830.7L1472.1 833.1M1423.4 768.4L1430.8 769.0L1439.1 771.6L1447.4 775.8L1454.9 781.2L1461.4 787.7L1466.2 795.6L1468.7 804.4L1470.2 813.5L1471.6 822.2L1472.5 829.5L1472.1 833.1M1423.4 768.4L1431.9 766.2L1441.4 767.5L1450.6 771.3L1459.1 776.5L1466.7 783.0L1472.4 791.3L1476.0 800.5L1478.1 810.1L1478.5 819.8L1476.6 828.2L1472.1 833.1" stroke="#37a07a" stroke-width="0.95" opacity="0.85"/>
<path d="M1433.0 763.4L1430.8 757.3M1428.5 774.6L1424.8 773.5M1443.7 763.3L1442.6 757.2M1434.4 779.9L1431.0 779.0M1453.9 766.8L1453.3 760.8M1440.8 784.7L1437.3 783.8M1463.4 771.9L1463.1 766.1M1446.4 790.5L1442.5 789.3M1471.9 778.4L1472.1 772.9M1450.8 797.0L1446.6 795.4M1478.6 786.9L1479.1 781.9M1453.7 804.4L1449.1 802.3M1483.3 796.5L1484.0 791.9M1454.1 812.2L1449.4 809.9M1486.0 806.8L1486.8 802.8M1454.5 820.1L1449.9 818.1M1485.4 817.4L1486.2 814.2M1457.8 827.1L1453.9 825.9M1480.8 827.0L1481.1 824.7M1464.1 832.0L1461.5 831.4M1425.1 768.5L1422.8 762.2M1426.5 768.0L1424.4 761.6M1427.9 767.6L1425.9 761.0M1429.3 767.1L1427.4 761.5M1430.7 766.7L1429.0 760.3M1432.0 766.2L1430.6 760.7M1433.4 765.8L1432.1 760.1M1429.6 771.8L1427.8 765.7M1430.8 769.0L1428.8 764.7M1431.9 766.2L1430.4 760.5M1436.7 775.8L1435.6 770.1M1439.1 771.6L1437.7 767.2M1441.4 767.5L1438.8 763.1M1444.1 780.2L1442.0 775.5M1447.4 775.8L1446.2 771.5M1450.6 771.3L1448.7 765.8M1450.6 785.8L1449.1 780.9M1454.9 781.2L1453.9 775.9M1459.1 776.5L1457.6 772.4M1456.1 792.3L1454.1 787.5M1461.4 787.7L1459.1 782.2M1466.7 783.0L1465.3 777.1M1459.9 800.0L1458.3 795.4M1466.2 795.6L1464.7 791.1M1472.4 791.3L1469.7 786.8M1461.4 808.3L1458.8 802.8M1468.7 804.4L1466.2 799.8M1476.0 800.5L1473.5 795.4M1462.4 816.8L1460.6 811.2M1470.2 813.5L1468.3 807.4M1478.1 810.1L1476.4 804.9M1464.7 824.7L1463.5 818.8M1471.6 822.2L1469.6 817.3M1478.5 819.8L1476.6 813.6M1468.3 830.7L1466.8 826.0M1472.5 829.5L1469.8 823.5M1476.6 828.2L1475.0 823.8" stroke="#c838e2" stroke-width="0.95" opacity="0.85"/>
<path d="M1433.0 763.4L1434.4 765.6M1428.5 774.6L1424.0 781.0M1443.7 763.3L1446.9 765.5M1434.4 779.9L1430.3 786.6M1453.9 766.8L1458.2 769.2M1440.8 784.7L1436.6 791.4M1463.4 771.9L1468.3 774.5M1446.4 790.5L1441.7 796.8M1471.9 778.4L1477.6 781.3M1450.8 797.0L1445.7 802.8M1478.6 786.9L1484.9 790.2M1453.7 804.4L1448.1 809.6M1483.3 796.5L1490.0 800.3M1454.1 812.2L1448.4 817.0M1486.0 806.8L1492.9 811.2M1454.5 820.1L1449.0 825.4M1485.4 817.4L1492.3 822.6M1457.8 827.1L1453.1 833.4M1480.8 827.0L1486.8 833.1M1464.1 832.0L1461.0 839.1M1472.1 833.1L1472.9 838.1M1472.1 833.1L1469.4 837.4M1472.1 833.1L1467.4 835.1M1429.6 771.8L1431.7 776.8M1430.8 769.0L1432.5 774.9M1431.9 766.2L1433.9 770.9M1436.7 775.8L1438.8 781.0M1439.1 771.6L1441.4 777.2M1441.4 767.5L1442.7 772.7M1444.1 780.2L1446.6 785.5M1447.4 775.8L1448.5 781.5M1450.6 771.3L1452.7 776.4M1450.6 785.8L1453.7 792.3M1454.9 781.2L1457.7 787.0M1459.1 776.5L1460.4 781.9M1456.1 792.3L1457.7 798.8M1461.4 787.7L1462.8 792.9M1466.7 783.0L1468.1 788.8M1459.9 800.0L1461.6 806.1M1466.2 795.6L1467.6 801.1M1472.4 791.3L1475.4 797.6M1461.4 808.3L1463.6 813.9M1468.7 804.4L1470.5 809.9M1476.0 800.5L1477.4 805.1M1462.4 816.8L1465.1 821.8M1470.2 813.5L1471.8 818.9M1478.1 810.1L1481.0 814.9M1464.7 824.7L1467.9 830.3M1471.6 822.2L1474.5 828.7M1478.5 819.8L1480.0 825.9M1468.3 830.7L1469.7 836.2M1472.5 829.5L1474.2 835.9M1476.6 828.2L1477.9 833.5" stroke="#52b6ec" stroke-width="0.95" opacity="0.85"/>
<path d="M1433.0 763.4L1431.0 755.8M1428.5 774.6L1423.1 779.9M1443.7 763.3L1444.6 754.2M1434.4 779.9L1429.7 786.2M1453.9 766.8L1456.9 759.3M1440.8 784.7L1436.0 790.8M1463.4 771.9L1467.7 764.9M1446.4 790.5L1439.4 795.3M1471.9 778.4L1477.6 772.7M1450.8 797.0L1443.5 800.4M1478.6 786.9L1485.1 783.1M1453.7 804.4L1446.0 806.5M1483.3 796.5L1491.0 793.3M1454.1 812.2L1444.8 813.0M1486.0 806.8L1493.5 805.9M1454.5 820.1L1447.5 821.8M1485.4 817.4L1493.9 819.5M1457.8 827.1L1452.0 832.0M1480.8 827.0L1487.0 832.5M1464.1 832.0L1461.6 838.7M1472.1 833.1L1476.9 839.2M1472.1 833.1L1471.8 840.9M1472.1 833.1L1467.3 839.3M1423.4 768.4L1408.7 772.9M1424.1 771.8L1410.2 776.3M1430.7 777.2L1418.6 780.1" stroke="#cdaa68" stroke-width="1.05" opacity="0.9"/>
<path d="M1423.4 768.4L1433.0 763.4L1443.7 763.3L1453.9 766.8L1463.4 771.9L1471.9 778.4L1478.6 786.9L1483.3 796.5L1486.0 806.8L1485.4 817.4L1480.8 827.0L1472.1 833.1L1464.1 832.0L1457.8 827.1L1454.5 820.1L1454.1 812.2L1453.7 804.4L1450.8 797.0L1446.4 790.5L1440.8 784.7L1434.4 779.9L1428.5 774.6L1423.4 768.4Z" stroke="#c4d850" stroke-width="1.1" opacity="0.88"/>
<path d="M873.4 915.0L870.1 926.7M883.9 913.9L876.4 931.5M894.3 916.3L883.2 935.7M904.2 920.5L889.3 940.9M913.3 926.2L894.3 946.9M920.8 934.0L897.9 954.1M926.3 943.2L899.1 961.9M930.0 953.3L900.3 969.8M930.5 964.0L904.3 976.5M926.9 974.0L910.9 980.7M864.4 921.0L870.9 923.8L878.3 927.1L886.0 930.8L893.0 935.8L899.1 941.7L903.6 949.1L905.9 957.3L907.7 965.7L910.8 973.3L914.9 979.1L918.9 981.1M864.4 921.0L871.7 920.8L880.2 922.7L888.8 926.0L896.8 930.7L903.8 936.6L909.3 944.1L912.7 952.6L915.2 961.6L917.4 970.2L918.9 977.4L918.9 981.1M864.4 921.0L872.5 917.9L882.1 918.3L891.6 921.2L900.5 925.6L908.6 931.4L915.0 939.1L919.5 947.9L922.6 957.4L924.0 967.1L922.9 975.7L918.9 981.1" stroke="#37a07a" stroke-width="0.95" opacity="0.85"/>
<path d="M873.4 915.0L870.6 909.1M870.1 926.7L866.3 926.0M883.9 913.9L882.2 907.9M876.4 931.5L872.9 930.9M894.3 916.3L893.1 910.4M883.2 935.7L879.7 935.1M904.2 920.5L903.4 914.7M889.3 940.9L885.3 940.1M913.3 926.2L912.9 920.7M894.3 946.9L890.0 945.8M920.8 934.0L920.7 928.9M897.9 954.1L893.2 952.5M926.3 943.2L926.6 938.6M899.1 961.9L894.2 960.0M930.0 953.3L930.4 949.2M900.3 969.8L895.6 968.3M930.5 964.0L931.0 960.7M904.3 976.5L900.3 975.6M926.9 974.0L927.0 971.7M910.9 980.7L908.4 980.4M866.1 920.9L863.2 914.6M867.4 920.3L864.6 913.1M868.7 919.7L866.2 914.2M870.1 919.1L867.7 913.5M871.4 918.6L869.1 912.2M872.7 918.0L870.6 911.8M874.0 917.4L872.2 912.2M870.9 923.8L869.1 919.0M871.7 920.8L868.6 916.2M872.5 917.9L870.4 912.0M878.3 927.1L876.0 921.1M880.2 922.7L878.2 918.7M882.1 918.3L880.2 913.1M886.0 930.8L883.6 925.7M888.8 926.0L886.8 920.1M891.6 921.2L889.5 916.3M893.0 935.8L890.4 931.7M896.8 930.7L893.9 925.5M900.5 925.6L897.6 921.4M899.1 941.7L896.6 936.5M903.8 936.6L901.5 932.0M908.6 931.4L905.6 926.9M903.6 949.1L900.8 943.8M909.3 944.1L907.2 939.1M915.0 939.1L913.3 933.7M905.9 957.3L904.4 951.9M912.7 952.6L910.0 948.1M919.5 947.9L916.5 943.6M907.7 965.7L905.3 960.9M915.2 961.6L913.5 956.4M922.6 957.4L920.6 951.6M910.8 973.3L907.7 968.8M917.4 970.2L914.7 964.5M924.0 967.1L922.1 961.2M914.9 979.1L912.1 974.2M918.9 977.4L917.1 972.5M922.9 975.7L920.9 970.4" stroke="#c838e2" stroke-width="0.95" opacity="0.85"/>
<path d="M873.4 915.0L874.9 917.1M870.1 926.7L866.3 933.6M883.9 913.9L887.3 915.8M876.4 931.5L873.0 938.6M894.3 916.3L898.8 918.3M883.2 935.7L879.7 942.8M904.2 920.5L909.3 922.6M889.3 940.9L885.3 947.7M913.3 926.2L919.2 928.5M894.3 946.9L889.8 953.3M920.8 934.0L927.3 936.8M897.9 954.1L892.9 959.9M926.3 943.2L933.3 946.4M899.1 961.9L894.0 967.3M930.0 953.3L937.3 957.0M900.3 969.8L895.4 975.6M930.5 964.0L937.8 968.5M904.3 976.5L900.2 983.3M926.9 974.0L933.5 979.6M910.9 980.7L908.6 988.2M918.9 981.1L920.2 986.0M918.9 981.1L916.8 985.7M918.9 981.1L914.5 983.6M870.9 923.8L872.7 929.7M871.7 920.8L874.6 927.0M872.5 917.9L876.1 923.7M878.3 927.1L881.5 932.2M880.2 922.7L883.7 927.1M882.1 918.3L885.2 923.3M886.0 930.8L887.9 935.8M888.8 926.0L890.7 932.0M891.6 921.2L893.4 925.7M893.0 935.8L895.9 941.9M896.8 930.7L899.6 936.7M900.5 925.6L903.1 930.0M899.1 941.7L902.2 947.9M903.8 936.6L906.3 942.5M908.6 931.4L910.6 936.9M903.6 949.1L905.6 954.1M909.3 944.1L911.8 949.6M915.0 939.1L917.9 944.3M905.9 957.3L909.0 962.0M912.7 952.6L915.5 957.4M919.5 947.9L922.0 953.7M907.7 965.7L910.6 972.0M915.2 961.6L917.8 966.3M922.6 957.4L924.9 963.5M910.8 973.3L913.7 978.7M917.4 970.2L921.0 976.0M924.0 967.1L927.2 971.8M914.9 979.1L917.8 983.6M918.9 977.4L922.5 983.5M922.9 975.7L926.6 981.4" stroke="#52b6ec" stroke-width="0.95" opacity="0.85"/>
<path d="M873.4 915.0L870.3 908.5M870.1 926.7L865.0 932.8M883.9 913.9L885.1 905.0M876.4 931.5L872.3 938.1M894.3 916.3L897.0 908.7M883.2 935.7L878.5 942.1M904.2 920.5L907.7 913.5M889.3 940.9L884.7 945.3M913.3 926.2L918.5 919.7M894.3 946.9L887.5 950.9M920.8 934.0L926.8 929.0M897.9 954.1L889.4 956.1M926.3 943.2L934.0 939.1M899.1 961.9L891.3 963.0M930.0 953.3L937.9 951.4M900.3 969.8L892.4 972.4M930.5 964.0L938.5 965.5M904.3 976.5L898.6 981.1M926.9 974.0L933.6 978.2M910.9 980.7L908.1 989.2M918.9 981.1L924.3 986.8M918.9 981.1L919.4 988.9M918.9 981.1L914.8 987.7M864.4 921.0L850.3 927.0M865.4 924.4L852.2 930.3M872.5 929.1L860.8 933.2" stroke="#cdaa68" stroke-width="1.05" opacity="0.9"/>
<path d="M864.4 921.0L873.4 915.0L883.9 913.9L894.3 916.3L904.2 920.5L913.3 926.2L920.8 934.0L926.3 943.2L930.0 953.3L930.5 964.0L926.9 974.0L918.9 981.1L910.9 980.7L904.3 976.5L900.3 969.8L899.1 961.9L897.9 954.1L894.3 946.9L889.3 940.9L883.2 935.7L876.4 931.5L870.1 926.7L864.4 921.0Z" stroke="#c4d850" stroke-width="1.1" opacity="0.88"/>
<path d="M1010.9 905.1L1007.2 916.8M1021.6 904.3L1013.5 921.9M1032.1 907.1L1020.3 926.3M1042.0 911.6L1026.3 931.7M1051.1 917.6L1031.2 938.0M1058.4 925.8L1034.6 945.4M1063.7 935.3L1035.6 953.4M1067.2 945.6L1036.5 961.4M1067.4 956.4L1040.4 968.2M1063.4 966.5L1047.0 972.7M1001.6 910.9L1008.1 913.9L1015.5 917.5L1023.2 921.5L1030.2 926.7L1036.2 932.9L1040.5 940.5L1042.6 948.8L1044.2 957.4L1047.1 965.2L1051.1 971.2L1055.1 973.3M1001.6 910.9L1009.0 911.0L1017.5 913.1L1026.2 916.7L1034.1 921.7L1041.1 927.8L1046.5 935.6L1049.6 944.3L1051.9 953.5L1053.9 962.3L1055.2 969.6L1055.1 973.3M1001.6 910.9L1009.9 908.0L1019.6 908.7L1029.1 911.9L1038.1 916.6L1046.1 922.7L1052.4 930.7L1056.7 939.8L1059.5 949.5L1060.6 959.3L1059.3 968.0L1055.1 973.3" stroke="#37a07a" stroke-width="0.95" opacity="0.85"/>
<path d="M1010.9 905.1L1008.3 899.1M1007.2 916.8L1003.4 916.0M1021.6 904.3L1020.0 898.1M1013.5 921.9L1010.0 921.2M1032.1 907.1L1031.1 901.0M1020.3 926.3L1016.7 925.6M1042.0 911.6L1041.3 905.7M1026.3 931.7L1022.3 930.8M1051.1 917.6L1050.8 912.0M1031.2 938.0L1026.8 936.8M1058.4 925.8L1058.5 920.6M1034.6 945.4L1029.8 943.6M1063.7 935.3L1064.1 930.5M1035.6 953.4L1030.7 951.3M1067.2 945.6L1067.7 941.4M1036.5 961.4L1031.8 959.7M1067.4 956.4L1067.9 953.0M1040.4 968.2L1036.4 967.3M1063.4 966.5L1063.6 964.1M1047.0 972.7L1044.4 972.3M1003.3 910.9L1000.5 904.5M1004.7 910.3L1002.1 903.7M1006.0 909.7L1003.6 902.5M1007.4 909.2L1005.1 902.9M1008.7 908.6L1006.7 901.9M1010.1 908.1L1008.2 902.1M1011.5 907.5L1009.7 901.4M1008.1 913.9L1005.9 908.1M1009.0 911.0L1006.7 905.0M1009.9 908.0L1008.5 903.0M1015.5 917.5L1013.0 912.8M1017.5 913.1L1016.1 908.8M1019.6 908.7L1016.5 903.6M1023.2 921.5L1021.2 916.6M1026.2 916.7L1024.0 912.5M1029.1 911.9L1027.6 907.7M1030.2 926.7L1028.6 922.0M1034.1 921.7L1032.4 917.2M1038.1 916.6L1036.4 912.5M1036.2 932.9L1033.6 927.5M1041.1 927.8L1038.5 922.9M1046.1 922.7L1044.2 917.5M1040.5 940.5L1037.7 934.7M1046.5 935.6L1044.7 930.1M1052.4 930.7L1049.8 925.6M1042.6 948.8L1039.8 943.2M1049.6 944.3L1047.8 939.5M1056.7 939.8L1053.8 935.2M1044.2 957.4L1041.9 953.3M1051.9 953.5L1050.4 949.3M1059.5 949.5L1057.8 945.0M1047.1 965.2L1044.7 959.7M1053.9 962.3L1051.6 957.8M1060.6 959.3L1058.2 953.3M1051.1 971.2L1048.4 966.8M1055.2 969.6L1052.8 965.4M1059.3 968.0L1057.9 962.2" stroke="#c838e2" stroke-width="0.95" opacity="0.85"/>
<path d="M1010.9 905.1L1012.4 907.2M1007.2 916.8L1003.1 923.7M1021.6 904.3L1025.0 906.3M1013.5 921.9L1009.8 929.0M1032.1 907.1L1036.5 909.2M1020.3 926.3L1016.5 933.4M1042.0 911.6L1047.1 913.8M1026.3 931.7L1022.0 938.5M1051.1 917.6L1056.9 920.2M1031.2 938.0L1026.4 944.4M1058.4 925.8L1064.9 928.7M1034.6 945.4L1029.4 951.1M1063.7 935.3L1070.7 938.6M1035.6 953.4L1030.2 958.6M1067.2 945.6L1074.5 949.5M1036.5 961.4L1031.3 967.1M1067.4 956.4L1074.7 961.1M1040.4 968.2L1036.1 975.0M1063.4 966.5L1069.9 972.2M1047.0 972.7L1044.4 980.2M1055.1 973.3L1056.3 978.4M1055.1 973.3L1052.8 977.9M1055.1 973.3L1050.5 975.7M1008.1 913.9L1011.1 919.2M1009.0 911.0L1011.6 916.5M1009.9 908.0L1011.7 913.1M1015.5 917.5L1019.0 923.9M1017.5 913.1L1020.9 919.4M1019.6 908.7L1022.4 914.5M1023.2 921.5L1026.7 926.1M1026.2 916.7L1027.8 921.4M1029.1 911.9L1030.7 916.4M1030.2 926.7L1032.8 932.3M1034.1 921.7L1035.6 926.3M1038.1 916.6L1041.3 921.9M1036.2 932.9L1037.7 939.0M1041.1 927.8L1043.7 932.9M1046.1 922.7L1048.1 929.0M1040.5 940.5L1042.6 945.9M1046.5 935.6L1048.5 941.4M1052.4 930.7L1054.5 936.9M1042.6 948.8L1044.8 954.0M1049.6 944.3L1052.8 949.8M1056.7 939.8L1058.7 944.7M1044.2 957.4L1046.5 962.6M1051.9 953.5L1054.2 958.2M1059.5 949.5L1061.8 955.6M1047.1 965.2L1049.9 971.2M1053.9 962.3L1055.4 967.8M1060.6 959.3L1064.0 964.0M1051.1 971.2L1054.7 977.5M1055.2 969.6L1057.1 975.5M1059.3 968.0L1061.2 973.9" stroke="#52b6ec" stroke-width="0.95" opacity="0.85"/>
<path d="M1010.9 905.1L1008.3 896.2M1007.2 916.8L1001.3 922.6M1021.6 904.3L1022.0 896.3M1013.5 921.9L1009.1 927.6M1032.1 907.1L1034.4 899.8M1020.3 926.3L1014.1 934.2M1042.0 911.6L1046.5 903.8M1026.3 931.7L1019.8 938.1M1051.1 917.6L1057.4 910.3M1031.2 938.0L1025.6 941.6M1058.4 925.8L1065.2 920.5M1034.6 945.4L1027.2 948.2M1063.7 935.3L1071.3 931.7M1035.6 953.4L1028.6 953.7M1067.2 945.6L1076.4 943.4M1036.5 961.4L1027.0 964.4M1067.4 956.4L1075.3 957.4M1040.4 968.2L1032.9 974.8M1063.4 966.5L1068.6 970.8M1047.0 972.7L1044.1 982.3M1055.1 973.3L1060.4 979.2M1055.1 973.3L1055.3 981.2M1055.1 973.3L1050.7 979.9M1001.6 910.9L987.1 916.5M1002.5 914.3L988.9 919.9M1009.6 919.3L997.6 923.1" stroke="#cdaa68" stroke-width="1.05" opacity="0.9"/>
<path d="M1001.6 910.9L1010.9 905.1L1021.6 904.3L1032.1 907.1L1042.0 911.6L1051.1 917.6L1058.4 925.8L1063.7 935.3L1067.2 945.6L1067.4 956.4L1063.4 966.5L1055.1 973.3L1047.0 972.7L1040.4 968.2L1036.5 961.4L1035.6 953.4L1034.6 945.4L1031.2 938.0L1026.3 931.7L1020.3 926.3L1013.5 921.9L1007.2 916.8L1001.6 910.9Z" stroke="#c4d850" stroke-width="1.1" opacity="0.88"/>
<path d="M1151.4 901.1L1146.4 913.8M1163.1 901.2L1152.7 919.9M1174.2 905.2L1159.6 925.5M1184.4 911.1L1165.6 932.1M1193.7 918.6L1170.4 939.5M1200.8 928.3L1173.4 948.0M1205.8 939.3L1173.7 956.9M1208.5 951.1L1174.0 965.8M1207.8 963.1L1177.5 973.8M1202.6 973.9L1184.3 979.4M1140.9 906.7L1147.6 910.6L1155.3 915.2L1163.3 920.4L1170.3 926.8L1176.2 934.3L1180.2 943.1L1181.7 952.5L1182.6 962.1L1185.1 971.1L1188.9 978.0L1193.0 980.8M1140.9 906.7L1148.9 907.4L1157.9 910.6L1166.9 915.3L1175.0 921.6L1182.0 929.0L1187.1 938.2L1189.7 948.1L1191.3 958.5L1192.6 968.4L1193.4 976.7L1193.0 980.8M1140.9 906.7L1150.1 904.3L1160.5 905.9L1170.5 910.3L1179.7 916.4L1187.8 923.8L1194.0 933.2L1197.7 943.7L1199.9 954.8L1200.2 965.7L1198.0 975.3L1193.0 980.8" stroke="#37a07a" stroke-width="0.95" opacity="0.85"/>
<path d="M1151.4 901.1L1149.2 894.2M1146.4 913.8L1142.3 912.5M1163.1 901.2L1161.9 894.2M1152.7 919.9L1149.0 918.9M1174.2 905.2L1173.6 898.4M1159.6 925.5L1155.8 924.4M1184.4 911.1L1184.2 904.6M1165.6 932.1L1161.4 930.7M1193.7 918.6L1193.9 912.4M1170.4 939.5L1165.7 937.7M1200.8 928.3L1201.4 922.6M1173.4 948.0L1168.4 945.6M1205.8 939.3L1206.6 934.1M1173.7 956.9L1168.6 954.1M1208.5 951.1L1209.5 946.5M1174.0 965.8L1169.0 963.5M1207.8 963.1L1208.7 959.4M1177.5 973.8L1173.3 972.4M1202.6 973.9L1202.9 971.3M1184.3 979.4L1181.5 978.7M1142.7 906.8L1140.4 898.7M1144.2 906.3L1142.0 898.6M1145.8 905.8L1143.7 898.6M1147.3 905.3L1145.4 897.8M1148.8 904.8L1147.1 897.5M1150.3 904.3L1148.8 898.3M1151.9 903.8L1150.5 897.4M1147.6 910.6L1145.5 904.8M1148.9 907.4L1147.8 901.0M1150.1 904.3L1149.0 897.7M1155.3 915.2L1153.0 908.6M1157.9 910.6L1156.2 903.9M1160.5 905.9L1157.8 900.4M1163.3 920.4L1161.3 915.5M1166.9 915.3L1164.0 909.4M1170.5 910.3L1168.8 904.3M1170.3 926.8L1168.3 921.3M1175.0 921.6L1173.0 914.7M1179.7 916.4L1178.4 911.2M1176.2 934.3L1174.3 928.2M1182.0 929.0L1180.1 923.1M1187.8 923.8L1185.9 917.6M1180.2 943.1L1178.9 937.9M1187.1 938.2L1185.5 933.0M1194.0 933.2L1192.6 926.6M1181.7 952.5L1179.2 947.6M1189.7 948.1L1187.5 942.9M1197.7 943.7L1196.6 938.2M1182.6 962.1L1179.9 957.3M1191.3 958.5L1188.7 953.0M1199.9 954.8L1198.2 948.0M1185.1 971.1L1183.8 965.9M1192.6 968.4L1190.8 963.6M1200.2 965.7L1198.1 959.5M1188.9 978.0L1187.5 971.5M1193.4 976.7L1191.9 970.8M1198.0 975.3L1195.5 969.7" stroke="#c838e2" stroke-width="0.95" opacity="0.85"/>
<path d="M1151.4 901.1L1152.9 903.6M1146.4 913.8L1141.4 921.1M1163.1 901.2L1166.6 903.7M1152.7 919.9L1148.1 927.5M1174.2 905.2L1178.8 908.0M1159.6 925.5L1154.9 933.0M1184.4 911.1L1189.7 914.1M1165.6 932.1L1160.4 939.2M1193.7 918.6L1199.8 922.0M1170.4 939.5L1164.6 946.1M1200.8 928.3L1207.6 932.2M1173.4 948.0L1167.2 953.8M1205.8 939.3L1213.0 943.7M1173.7 956.9L1167.4 962.2M1208.5 951.1L1216.1 956.1M1174.0 965.8L1167.9 971.8M1207.8 963.1L1215.2 969.0M1177.5 973.8L1172.3 980.9M1202.6 973.9L1209.1 980.9M1184.3 979.4L1180.8 987.5M1193.0 980.8L1193.8 986.5M1193.0 980.8L1190.0 985.7M1193.0 980.8L1187.8 983.0M1147.6 910.6L1149.8 916.5M1148.9 907.4L1152.1 914.6M1150.1 904.3L1152.4 911.7M1155.3 915.2L1158.1 920.9M1157.9 910.6L1161.2 916.4M1160.5 905.9L1162.4 912.3M1163.3 920.4L1165.6 926.4M1166.9 915.3L1168.6 921.8M1170.5 910.3L1171.9 916.5M1170.3 926.8L1173.7 932.7M1175.0 921.6L1178.0 927.3M1179.7 916.4L1181.4 923.5M1176.2 934.3L1178.5 941.6M1182.0 929.0L1183.8 936.1M1187.8 923.8L1189.5 929.4M1180.2 943.1L1183.5 950.4M1187.1 938.2L1189.8 945.2M1194.0 933.2L1197.0 939.1M1181.7 952.5L1182.9 958.8M1189.7 948.1L1192.2 955.4M1197.7 943.7L1199.0 950.3M1182.6 962.1L1185.8 968.0M1191.3 958.5L1194.1 965.9M1199.9 954.8L1202.7 960.1M1185.1 971.1L1188.0 978.3M1192.6 968.4L1195.2 974.7M1200.2 965.7L1201.5 971.2M1188.9 978.0L1191.4 985.0M1193.4 976.7L1195.3 982.4M1198.0 975.3L1200.7 982.6" stroke="#52b6ec" stroke-width="0.95" opacity="0.85"/>
<path d="M1151.4 901.1L1149.9 891.7M1146.4 913.8L1139.4 919.5M1163.1 901.2L1164.2 890.6M1152.7 919.9L1146.4 926.4M1174.2 905.2L1176.9 897.6M1159.6 925.5L1153.5 932.9M1184.4 911.1L1190.1 902.8M1165.6 932.1L1158.5 937.0M1193.7 918.6L1201.1 911.8M1170.4 939.5L1162.9 943.3M1200.8 928.3L1208.4 924.6M1173.4 948.0L1164.7 950.3M1205.8 939.3L1213.5 937.0M1173.7 956.9L1162.6 957.7M1208.5 951.1L1216.5 949.7M1174.0 965.8L1166.5 967.3M1207.8 963.1L1214.8 965.5M1177.5 973.8L1170.6 979.5M1202.6 973.9L1208.0 979.0M1184.3 979.4L1180.8 986.9M1193.0 980.8L1198.1 987.8M1193.0 980.8L1192.5 989.6M1193.0 980.8L1187.7 987.7M1140.9 906.7L1124.7 911.6M1141.6 910.6L1126.4 915.6M1148.7 916.8L1135.5 919.9" stroke="#cdaa68" stroke-width="1.05" opacity="0.9"/>
<path d="M1140.9 906.7L1151.4 901.1L1163.1 901.2L1174.2 905.2L1184.4 911.1L1193.7 918.6L1200.8 928.3L1205.8 939.3L1208.5 951.1L1207.8 963.1L1202.6 973.9L1193.0 980.8L1184.3 979.4L1177.5 973.8L1174.0 965.8L1173.7 956.9L1173.4 948.0L1170.4 939.5L1165.6 932.1L1159.6 925.5L1152.7 919.9L1146.4 913.8L1140.9 906.7Z" stroke="#c4d850" stroke-width="1.1" opacity="0.88"/>
<path d="M1291.9 911.5L1288.3 922.5M1302.1 910.8L1294.3 927.4M1312.0 913.5L1300.7 931.6M1321.3 917.8L1306.3 936.8M1329.9 923.5L1311.0 942.7M1336.8 931.3L1314.2 949.7M1341.8 940.3L1315.0 957.3M1345.0 950.0L1315.9 964.8M1345.1 960.2L1319.5 971.3M1341.3 969.8L1325.8 975.6M1283.1 917.0L1289.2 919.8L1296.2 923.2L1303.5 927.1L1310.1 932.0L1315.7 937.9L1319.8 945.1L1321.7 953.0L1323.2 961.1L1325.9 968.5L1329.6 974.2L1333.4 976.2M1283.1 917.0L1290.1 917.0L1298.2 919.1L1306.3 922.5L1313.8 927.3L1320.4 933.1L1325.5 940.5L1328.4 948.8L1330.4 957.4L1332.3 965.8L1333.5 972.7L1333.4 976.2M1283.1 917.0L1291.0 914.3L1300.1 914.9L1309.2 918.0L1317.6 922.5L1325.2 928.3L1331.1 935.9L1335.1 944.5L1337.7 953.7L1338.7 963.0L1337.4 971.2L1333.4 976.2" stroke="#37a07a" stroke-width="0.95" opacity="0.85"/>
<path d="M1291.9 911.5L1289.5 905.8M1288.3 922.5L1284.7 921.8M1302.1 910.8L1300.6 905.0M1294.3 927.4L1291.0 926.7M1312.0 913.5L1311.0 907.8M1300.7 931.6L1297.3 930.9M1321.3 917.8L1320.7 912.3M1306.3 936.8L1302.6 935.9M1329.9 923.5L1329.7 918.3M1311.0 942.7L1306.8 941.5M1336.8 931.3L1336.9 926.4M1314.2 949.7L1309.6 948.0M1341.8 940.3L1342.2 935.8M1315.0 957.3L1310.4 955.3M1345.0 950.0L1345.5 946.1M1315.9 964.8L1311.4 963.2M1345.1 960.2L1345.7 957.1M1319.5 971.3L1315.7 970.4M1341.3 969.8L1341.5 967.6M1325.8 975.6L1323.3 975.2M1284.7 916.9L1282.1 911.2M1286.0 916.4L1283.6 910.7M1287.3 915.9L1285.0 909.0M1288.6 915.4L1286.5 908.7M1289.9 914.8L1287.9 908.6M1291.2 914.3L1289.4 909.0M1292.5 913.8L1290.9 908.2M1289.2 919.8L1286.5 914.8M1290.1 917.0L1287.9 912.5M1291.0 914.3L1288.2 909.9M1296.2 923.2L1294.1 917.4M1298.2 919.1L1296.0 913.5M1300.1 914.9L1298.0 910.3M1303.5 927.1L1300.8 921.8M1306.3 922.5L1304.3 917.5M1309.2 918.0L1306.7 913.7M1310.1 932.0L1307.8 927.1M1313.8 927.3L1312.0 922.3M1317.6 922.5L1315.4 917.6M1315.7 937.9L1313.4 933.9M1320.4 933.1L1318.2 928.6M1325.2 928.3L1323.5 924.4M1319.8 945.1L1317.6 940.6M1325.5 940.5L1323.5 936.6M1331.1 935.9L1328.2 930.9M1321.7 953.0L1319.8 947.6M1328.4 948.8L1325.9 944.7M1335.1 944.5L1333.6 940.3M1323.2 961.1L1321.5 956.8M1330.4 957.4L1328.0 953.0M1337.7 953.7L1336.4 948.1M1325.9 968.5L1324.2 964.6M1332.3 965.8L1330.3 960.9M1338.7 963.0L1337.3 958.5M1329.6 974.2L1327.4 968.6M1333.5 972.7L1331.5 968.8M1337.4 971.2L1335.1 966.9" stroke="#c838e2" stroke-width="0.95" opacity="0.85"/>
<path d="M1291.9 911.5L1293.3 913.5M1288.3 922.5L1284.5 929.1M1302.1 910.8L1305.3 912.7M1294.3 927.4L1290.7 934.1M1312.0 913.5L1316.2 915.5M1300.7 931.6L1297.1 938.3M1321.3 917.8L1326.2 920.0M1306.3 936.8L1302.2 943.2M1329.9 923.5L1335.4 926.0M1311.0 942.7L1306.4 948.7M1336.8 931.3L1342.9 934.1M1314.2 949.7L1309.2 955.1M1341.8 940.3L1348.4 943.5M1315.0 957.3L1309.9 962.2M1345.0 950.0L1351.9 953.8M1315.9 964.8L1311.0 970.2M1345.1 960.2L1352.0 964.8M1319.5 971.3L1315.4 977.7M1341.3 969.8L1347.4 975.3M1325.8 975.6L1323.2 982.7M1333.4 976.2L1334.5 981.0M1333.4 976.2L1331.2 980.6M1333.4 976.2L1329.1 978.5M1289.2 919.8L1291.8 925.4M1290.1 917.0L1292.9 922.4M1291.0 914.3L1292.7 918.6M1296.2 923.2L1297.8 928.2M1298.2 919.1L1301.5 924.9M1300.1 914.9L1302.2 921.1M1303.5 927.1L1305.4 933.0M1306.3 922.5L1308.6 928.5M1309.2 918.0L1312.0 923.1M1310.1 932.0L1312.4 936.8M1313.8 927.3L1315.9 933.0M1317.6 922.5L1320.7 927.6M1315.7 937.9L1319.0 943.6M1320.4 933.1L1323.3 937.9M1325.2 928.3L1327.9 933.8M1319.8 945.1L1321.7 950.8M1325.5 940.5L1327.6 946.1M1331.1 935.9L1334.0 940.6M1321.7 953.0L1323.9 959.2M1328.4 948.8L1330.0 954.1M1335.1 944.5L1337.3 949.9M1323.2 961.1L1326.1 966.4M1330.4 957.4L1333.0 962.7M1337.7 953.7L1340.7 958.5M1325.9 968.5L1327.9 973.9M1332.3 965.8L1334.1 971.2M1338.7 963.0L1340.7 968.8M1329.6 974.2L1332.3 979.2M1333.5 972.7L1336.1 978.8M1337.4 971.2L1339.0 976.0" stroke="#52b6ec" stroke-width="0.95" opacity="0.85"/>
<path d="M1291.9 911.5L1289.8 903.0M1288.3 922.5L1282.4 929.8M1302.1 910.8L1302.7 902.2M1294.3 927.4L1289.5 933.2M1312.0 913.5L1314.9 905.4M1300.7 931.6L1295.1 937.9M1321.3 917.8L1324.9 910.7M1306.3 936.8L1300.7 941.3M1329.9 923.5L1335.6 917.8M1311.0 942.7L1304.2 946.4M1336.8 931.3L1343.6 926.3M1314.2 949.7L1306.9 952.2M1341.8 940.3L1349.2 937.7M1315.0 957.3L1305.9 958.3M1345.0 950.0L1353.7 948.2M1315.9 964.8L1307.1 967.0M1345.1 960.2L1352.6 962.0M1319.5 971.3L1313.0 977.4M1341.3 969.8L1348.1 974.5M1325.8 975.6L1322.7 982.9M1333.4 976.2L1338.4 981.8M1333.4 976.2L1333.6 983.7M1333.4 976.2L1329.3 982.5M1283.1 917.0L1269.3 922.2M1284.0 920.2L1271.0 925.4M1290.6 924.9L1279.3 928.5" stroke="#cdaa68" stroke-width="1.05" opacity="0.9"/>
<path d="M1283.1 917.0L1291.9 911.5L1302.1 910.8L1312.0 913.5L1321.3 917.8L1329.9 923.5L1336.8 931.3L1341.8 940.3L1345.0 950.0L1345.1 960.2L1341.3 969.8L1333.4 976.2L1325.8 975.6L1319.5 971.3L1315.9 964.8L1315.0 957.3L1314.2 949.7L1311.0 942.7L1306.3 936.8L1300.7 931.6L1294.3 927.4L1288.3 922.5L1283.1 917.0Z" stroke="#c4d850" stroke-width="1.1" opacity="0.88"/>
<path d="M1431.7 900.9L1427.1 914.0M1443.3 900.6L1433.5 920.2M1454.3 904.4L1440.5 925.6M1464.7 910.2L1446.6 932.2M1474.0 917.6L1451.5 939.7M1481.3 927.4L1454.7 948.3M1486.5 938.6L1455.2 957.5M1489.5 950.5L1455.7 966.7M1489.1 962.9L1459.4 974.7M1484.2 974.1L1466.2 980.3M1421.4 906.9L1428.2 910.7L1435.9 915.3L1444.0 920.3L1451.1 926.7L1457.1 934.2L1461.3 943.1L1463.0 952.7L1464.2 962.6L1466.8 971.7L1470.7 978.7L1474.9 981.4M1421.4 906.9L1429.4 907.4L1438.4 910.4L1447.4 915.0L1455.6 921.2L1462.7 928.7L1468.0 937.9L1470.8 948.0L1472.6 958.6L1474.2 968.8L1475.2 977.2L1474.9 981.4M1421.4 906.9L1430.6 904.2L1440.9 905.5L1450.9 909.7L1460.1 915.7L1468.4 923.2L1474.6 932.6L1478.7 943.3L1481.1 954.6L1481.7 965.8L1479.7 975.7L1474.9 981.4" stroke="#37a07a" stroke-width="0.95" opacity="0.85"/>
<path d="M1431.7 900.9L1429.3 893.8M1427.1 914.0L1423.0 912.8M1443.3 900.6L1442.0 893.5M1433.5 920.2L1429.8 919.2M1454.3 904.4L1453.6 897.5M1440.5 925.6L1436.7 924.6M1464.7 910.2L1464.3 903.5M1446.6 932.2L1442.4 930.9M1474.0 917.6L1474.1 911.3M1451.5 939.7L1446.8 938.0M1481.3 927.4L1481.8 921.5M1454.7 948.3L1449.7 946.0M1486.5 938.6L1487.2 933.2M1455.2 957.5L1450.1 954.8M1489.5 950.5L1490.4 945.8M1455.7 966.7L1450.8 964.4M1489.1 962.9L1489.9 959.1M1459.4 974.7L1455.2 973.4M1484.2 974.1L1484.5 971.5M1466.2 980.3L1463.5 979.7M1423.3 907.0L1420.7 899.4M1424.8 906.4L1422.4 897.8M1426.3 905.9L1424.1 899.0M1427.8 905.3L1425.7 898.0M1429.3 904.8L1427.4 897.8M1430.7 904.2L1429.1 896.5M1432.2 903.7L1430.8 896.0M1428.2 910.7L1425.9 905.9M1429.4 907.4L1426.6 900.5M1430.6 904.2L1427.9 897.6M1435.9 915.3L1433.6 909.2M1438.4 910.4L1436.1 904.1M1440.9 905.5L1438.4 898.4M1444.0 920.3L1441.5 913.4M1447.4 915.0L1445.4 908.6M1450.9 909.7L1449.0 904.1M1451.1 926.7L1448.9 920.5M1455.6 921.2L1453.6 915.3M1460.1 915.7L1457.6 908.6M1457.1 934.2L1455.6 928.5M1462.7 928.7L1461.3 923.5M1468.4 923.2L1466.8 917.1M1461.3 943.1L1459.9 938.3M1468.0 937.9L1465.2 931.3M1474.6 932.6L1472.6 926.2M1463.0 952.7L1461.9 945.8M1470.8 948.0L1468.1 941.8M1478.7 943.3L1476.7 938.4M1464.2 962.6L1462.3 956.8M1472.6 958.6L1471.3 953.0M1481.1 954.6L1479.1 948.2M1466.8 971.7L1463.9 965.1M1474.2 968.8L1471.4 963.4M1481.7 965.8L1479.7 958.9M1470.7 978.7L1469.2 973.3M1475.2 977.2L1472.3 971.9M1479.7 975.7L1476.8 968.9" stroke="#c838e2" stroke-width="0.95" opacity="0.85"/>
<path d="M1431.7 900.9L1433.2 903.4M1427.1 914.0L1422.3 921.7M1443.3 900.6L1446.8 903.1M1433.5 920.2L1429.1 928.1M1454.3 904.4L1459.0 907.1M1440.5 925.6L1436.0 933.5M1464.7 910.2L1470.0 913.1M1446.6 932.2L1441.6 939.7M1474.0 917.6L1480.1 920.9M1451.5 939.7L1445.9 946.7M1481.3 927.4L1488.1 931.2M1454.7 948.3L1448.7 954.5M1486.5 938.6L1493.8 942.8M1455.2 957.5L1449.1 963.1M1489.5 950.5L1497.1 955.5M1455.7 966.7L1449.8 972.9M1489.1 962.9L1496.6 968.8M1459.4 974.7L1454.4 982.2M1484.2 974.1L1490.8 981.1M1466.2 980.3L1463.0 988.7M1474.9 981.4L1475.8 987.3M1474.9 981.4L1472.1 986.6M1474.9 981.4L1469.8 983.9M1428.2 910.7L1430.8 918.0M1429.4 907.4L1430.7 914.3M1430.6 904.2L1433.3 911.0M1435.9 915.3L1437.9 921.8M1438.4 910.4L1440.3 916.3M1440.9 905.5L1442.9 912.1M1444.0 920.3L1447.1 926.7M1447.4 915.0L1450.7 922.0M1450.9 909.7L1453.7 916.1M1451.1 926.7L1453.5 933.0M1455.6 921.2L1458.6 928.5M1460.1 915.7L1462.1 921.0M1457.1 934.2L1459.1 939.8M1462.7 928.7L1465.5 935.5M1468.4 923.2L1470.5 929.7M1461.3 943.1L1464.6 950.3M1468.0 937.9L1471.4 944.4M1474.6 932.6L1477.9 939.1M1463.0 952.7L1466.6 958.0M1470.8 948.0L1473.6 953.5M1478.7 943.3L1480.9 950.3M1464.2 962.6L1465.9 968.9M1472.6 958.6L1474.4 964.8M1481.1 954.6L1483.7 961.3M1466.8 971.7L1469.6 977.5M1474.2 968.8L1476.3 976.2M1481.7 965.8L1484.4 971.6M1470.7 978.7L1473.8 984.1M1475.2 977.2L1476.9 982.9M1479.7 975.7L1482.1 983.1" stroke="#52b6ec" stroke-width="0.95" opacity="0.85"/>
<path d="M1431.7 900.9L1429.8 891.2M1427.1 914.0L1420.9 920.3M1443.3 900.6L1444.3 892.8M1433.5 920.2L1428.1 927.4M1454.3 904.4L1457.8 894.2M1440.5 925.6L1434.7 932.5M1464.7 910.2L1469.3 901.7M1446.6 932.2L1438.6 939.2M1474.0 917.6L1480.3 910.5M1451.5 939.7L1442.8 945.1M1481.3 927.4L1488.1 922.4M1454.7 948.3L1446.5 950.5M1486.5 938.6L1495.7 934.7M1455.2 957.5L1447.2 957.5M1489.5 950.5L1499.1 949.2M1455.7 966.7L1447.7 969.7M1489.1 962.9L1497.5 964.9M1459.4 974.7L1451.6 981.8M1484.2 974.1L1491.3 980.4M1466.2 980.3L1463.5 987.7M1474.9 981.4L1480.1 988.5M1474.9 981.4L1474.6 990.5M1474.9 981.4L1469.8 988.7M1421.4 906.9L1405.6 912.4M1422.3 910.9L1407.3 916.4M1429.5 917.0L1416.5 920.6" stroke="#cdaa68" stroke-width="1.05" opacity="0.9"/>
<path d="M1421.4 906.9L1431.7 900.9L1443.3 900.6L1454.3 904.4L1464.7 910.2L1474.0 917.6L1481.3 927.4L1486.5 938.6L1489.5 950.5L1489.1 962.9L1484.2 974.1L1474.9 981.4L1466.2 980.3L1459.4 974.7L1455.7 966.7L1455.2 957.5L1454.7 948.3L1451.5 939.7L1446.6 932.2L1440.5 925.6L1433.5 920.2L1427.1 914.0L1421.4 906.9Z" stroke="#c4d850" stroke-width="1.1" opacity="0.88"/>
</g></svg>
</div>
</body></html>
